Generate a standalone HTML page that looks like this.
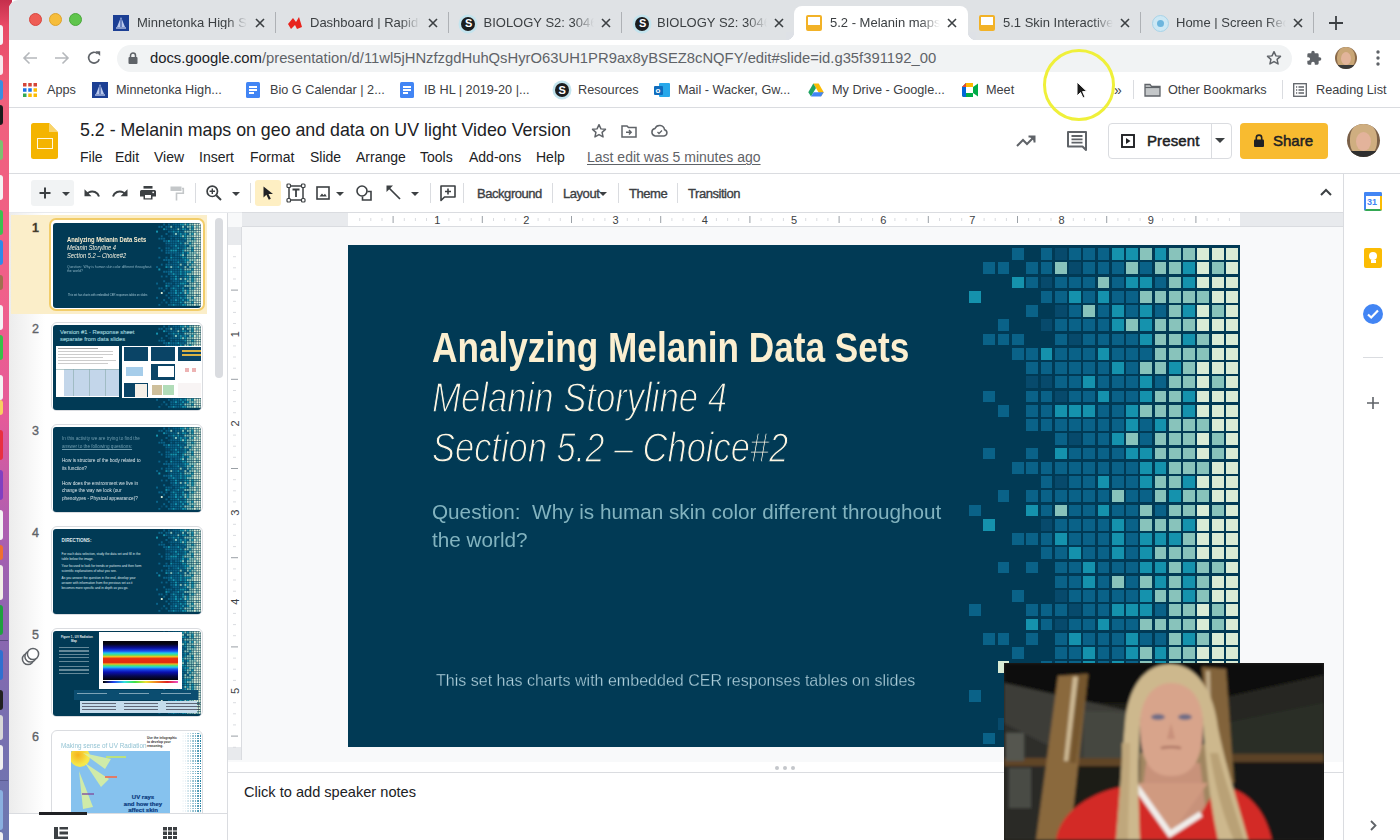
<!DOCTYPE html>
<html><head><meta charset="utf-8">
<style>
*{margin:0;padding:0;box-sizing:border-box}
html,body{width:1400px;height:840px;overflow:hidden;background:#fff;font-family:"Liberation Sans",sans-serif;color:#202124}
.a{position:absolute}
.t{position:absolute;white-space:nowrap;line-height:1}
.tl{position:absolute;top:13px;width:13px;height:13px;border-radius:50%}
.tx{font-size:13px;color:#3c4043;width:110px;overflow:hidden;-webkit-mask-image:linear-gradient(90deg,#000 82%,transparent 100%)}
.sep{position:absolute;top:12px;width:1px;height:21px;background:#aeb1b5}
.bm{font-size:12.7px;color:#3c4043}
.menu{font-size:14px;color:#202124}
.tbtxt{font-size:13px;color:#3c4043;-webkit-text-stroke:0.35px #3c4043;letter-spacing:-0.45px}
.tsep{position:absolute;top:183px;width:1px;height:20px;background:#dadce0}
.num{font-size:12.5px;color:#5f6368;-webkit-text-stroke:0.35px #5f6368}
.thumb{position:absolute;left:53px;width:148px;height:85px;background:#013a55;border-radius:3px;overflow:hidden}
.thframe{position:absolute;left:50px;width:154px;height:91px;border:1px solid #dadce0;border-radius:6px;background:#fff}
svg{position:absolute;overflow:visible}
#grid i{position:absolute;width:11.9px;height:11.9px}
#grid i,.thumb i{position:absolute;width:11.9px;height:11.9px}
</style></head><body>
<!-- dock strip -->
<div class="a" style="left:0;top:0;width:12px;height:840px;background:linear-gradient(#c52f4c 0%,#e84a66 3%,#f0607c 12%,#f0608a 35%,#e45a9a 50%,#b05eb0 62%,#9264b0 72%,#7a6eb0 84%,#6c78b0 100%)"></div><div class="a" style="left:-8px;top:25px;width:11px;height:20px;border-radius:3px;background:#f4f4f6"></div><div class="a" style="left:-8px;top:55px;width:11px;height:20px;border-radius:3px;background:#f7e8ec"></div><div class="a" style="left:-8px;top:80px;width:11px;height:20px;border-radius:3px;background:#3a8ee0"></div><div class="a" style="left:-8px;top:105px;width:11px;height:20px;border-radius:3px;background:#1b1b1b"></div><div class="a" style="left:-8px;top:140px;width:11px;height:20px;border-radius:3px;background:#7cc070"></div><div class="a" style="left:-8px;top:175px;width:11px;height:25px;border-radius:3px;background:#f4f4f4"></div><div class="a" style="left:-8px;top:210px;width:11px;height:25px;border-radius:3px;background:#3cc050"></div><div class="a" style="left:-8px;top:240px;width:11px;height:25px;border-radius:3px;background:#2f8ae8"></div><div class="a" style="left:-8px;top:275px;width:11px;height:15px;border-radius:3px;background:#a07050"></div><div class="a" style="left:-8px;top:305px;width:11px;height:25px;border-radius:3px;background:#f4f4f4"></div><div class="a" style="left:-8px;top:335px;width:11px;height:25px;border-radius:3px;background:#38c048"></div><div class="a" style="left:-8px;top:375px;width:11px;height:25px;border-radius:3px;background:#f4f4f4"></div><div class="a" style="left:-8px;top:400px;width:11px;height:15px;border-radius:3px;background:#f8d060"></div><div class="a" style="left:-8px;top:430px;width:11px;height:30px;border-radius:3px;background:#e83040"></div><div class="a" style="left:-8px;top:470px;width:11px;height:30px;border-radius:3px;background:#8040c0"></div><div class="a" style="left:-8px;top:510px;width:11px;height:30px;border-radius:3px;background:#f4f4f4"></div><div class="a" style="left:-8px;top:545px;width:11px;height:15px;border-radius:3px;background:#f07030"></div><div class="a" style="left:-8px;top:565px;width:11px;height:35px;border-radius:3px;background:#f2f0e8"></div><div class="a" style="left:-8px;top:605px;width:11px;height:30px;border-radius:3px;background:#20a040"></div><div class="a" style="left:-8px;top:650px;width:11px;height:30px;border-radius:3px;background:#3070d0"></div><div class="a" style="left:-8px;top:690px;width:11px;height:20px;border-radius:3px;background:#202020"></div><div class="a" style="left:-8px;top:715px;width:11px;height:25px;border-radius:3px;background:#d8d8d8"></div><div class="a" style="left:-8px;top:745px;width:11px;height:25px;border-radius:3px;background:#f0f0f0"></div><div class="a" style="left:-8px;top:790px;width:11px;height:40px;border-radius:3px;background:#8ab0e0"></div><div class="a" style="left:-8px;top:832px;width:11px;height:10px;border-radius:3px;background:#f0f0f0"></div><div class="a" style="left:0;top:640px;width:8px;height:1px;background:#5a4a80"></div><div class="a" style="left:0;top:780px;width:8px;height:1px;background:#5a5a90"></div>
<!-- window -->
<div class="a" id="win" style="left:9px;top:0;width:1391px;height:840px;background:#fff;border-top-left-radius:9px;overflow:hidden">
 <div class="a" style="left:0;top:0;width:1391px;height:40px;background:#dfe2e5"></div>
</div>
<!-- CHROME_TABS -->
<!-- traffic lights -->
<div class="tl" style="left:29px;background:#ee5d55;border:0.5px solid #d8463f"></div>
<div class="tl" style="left:49px;background:#f6bd3b;border:0.5px solid #dea32b"></div>
<div class="tl" style="left:69px;background:#5fc54c;border:0.5px solid #4aa83b"></div>

<!-- active tab -->
<div class="a" style="left:794px;top:6px;width:174px;height:34px;background:#fff;border-radius:8px 8px 0 0"></div>
<div class="a" style="left:786px;top:32px;width:8px;height:8px;background:radial-gradient(circle at 0 0,#dee1e6 8px,#fff 8.5px)"></div>
<div class="a" style="left:968px;top:32px;width:8px;height:8px;background:radial-gradient(circle at 100% 0,#dee1e6 8px,#fff 8.5px)"></div>

<!-- tab favicons -->
<div class="a" style="left:113px;top:15px;width:16px;height:16px;background:#1c3f94"><svg width="16" height="16" viewBox="0 0 16 16" style="left:0;top:0"><path d="M8 2 L4 12 H12 Z" fill="#b9c8ec"/><path d="M8 4 L8 12" stroke="#1c3f94" stroke-width="1"/><path d="M3 13 H13" stroke="#cfd9f2" stroke-width="1.2"/></svg></div>
<svg width="16" height="16" viewBox="0 0 16 16" style="left:287px;top:15px"><path d="M1 9 L6 3 L9 7 L12 2 L15 12 L10 14 L8 10 L4 14 Z" fill="#e8231d"/></svg>
<div class="a" style="left:461px;top:16.5px;width:14px;height:14px;border-radius:50%;background:#1b1d1f;box-shadow:0 0 0 2.5px #c3e4ee"></div><div class="t" style="left:465.0px;top:18px;font-size:11px;font-weight:bold;color:#fff">S</div>
<div class="a" style="left:635px;top:16.5px;width:14px;height:14px;border-radius:50%;background:#1b1d1f;box-shadow:0 0 0 2.5px #c3e4ee"></div><div class="t" style="left:639.0px;top:18px;font-size:11px;font-weight:bold;color:#fff">S</div>
<div class="a" style="left:806px;top:15px;width:16px;height:16px;border:2.5px solid #f2b227;border-radius:2px;background:#fff"></div><div class="a" style="left:808px;top:25px;width:12px;height:3.5px;background:#f2b227"></div>
<div class="a" style="left:979px;top:15px;width:16px;height:16px;border:2.5px solid #f2b227;border-radius:2px;background:#fff"></div><div class="a" style="left:981px;top:25px;width:12px;height:3.5px;background:#f2b227"></div>
<div class="a" style="left:1152px;top:15px;width:17px;height:17px;border-radius:50%;background:#cde8f4;border:1.5px solid #a8d3e8"></div><div class="a" style="left:1157px;top:20px;width:7px;height:7px;border-radius:50%;background:#6cb5dd"></div>

<!-- tab titles -->
<div class="t tx" style="left:137px;top:16px">Minnetonka High School</div>
<div class="t tx" style="left:310px;top:16px">Dashboard | RapidIdentity</div>
<div class="t tx" style="left:483.5px;top:16px">BIOLOGY S2: 3046</div>
<div class="t tx" style="left:657px;top:16px">BIOLOGY S2: 3046</div>
<div class="t tx" style="left:830px;top:16px">5.2 - Melanin maps on</div>
<div class="t tx" style="left:1003px;top:16px">5.1 Skin Interactive</div>
<div class="t tx" style="left:1176px;top:16px">Home | Screen Recorder</div>

<!-- close x's -->
<svg width="10" height="10" viewBox="0 0 10 10" style="left:255px;top:18px"><path d="M1 1L9 9M9 1L1 9" stroke="#3c4043" stroke-width="1.6"/></svg>
<svg width="10" height="10" viewBox="0 0 10 10" style="left:428px;top:18px"><path d="M1 1L9 9M9 1L1 9" stroke="#3c4043" stroke-width="1.6"/></svg>
<svg width="10" height="10" viewBox="0 0 10 10" style="left:601px;top:18px"><path d="M1 1L9 9M9 1L1 9" stroke="#3c4043" stroke-width="1.6"/></svg>
<svg width="10" height="10" viewBox="0 0 10 10" style="left:774px;top:18px"><path d="M1 1L9 9M9 1L1 9" stroke="#3c4043" stroke-width="1.6"/></svg>
<svg width="10" height="10" viewBox="0 0 10 10" style="left:947px;top:18px"><path d="M1 1L9 9M9 1L1 9" stroke="#3c4043" stroke-width="1.6"/></svg>
<svg width="10" height="10" viewBox="0 0 10 10" style="left:1120px;top:18px"><path d="M1 1L9 9M9 1L1 9" stroke="#3c4043" stroke-width="1.6"/></svg>
<svg width="10" height="10" viewBox="0 0 10 10" style="left:1293px;top:18px"><path d="M1 1L9 9M9 1L1 9" stroke="#3c4043" stroke-width="1.6"/></svg>
<!-- separators -->
<div class="sep" style="left:275px"></div>
<div class="sep" style="left:448px"></div>
<div class="sep" style="left:621px"></div>
<div class="sep" style="left:1140px"></div>
<div class="sep" style="left:1313px"></div>
<!-- new tab + -->
<svg width="14" height="14" viewBox="0 0 14 14" style="left:1329px;top:16px"><path d="M7 0V14M0 7H14" stroke="#3c4043" stroke-width="1.8"/></svg>

<!-- ADDRESS -->
<svg width="16" height="14" viewBox="0 0 16 14" style="left:22px;top:51px"><path d="M15 7H2M7.5 1.5L2 7l5.5 5.5" stroke="#b5b8bc" stroke-width="1.6" fill="none"/></svg>
<svg width="16" height="14" viewBox="0 0 16 14" style="left:54px;top:51px"><path d="M1 7H14M8.5 1.5L14 7l-5.5 5.5" stroke="#b5b8bc" stroke-width="1.6" fill="none"/></svg>
<svg width="16" height="16" viewBox="0 0 16 16" style="left:86px;top:50px"><path d="M13.2 9.2A5.4 5.4 0 1 1 11.6 3.6" stroke="#5f6368" stroke-width="1.7" fill="none"/><path d="M9.4 1.2H14.2V6Z" fill="#5f6368"/></svg>
<div class="a" style="left:117px;top:45px;width:1175px;height:27px;border-radius:14px;background:#f1f3f4"></div>
<svg width="10" height="12" viewBox="0 0 10 12" style="left:128px;top:52px"><rect x="0.5" y="5" width="9" height="7" rx="1" fill="#5f6368"/><path d="M2.5 5.5V3.6a2.5 2.5 0 0 1 5 0V5.5" stroke="#5f6368" stroke-width="1.5" fill="none"/></svg>
<div class="t" id="url" style="left:150px;top:51px;font-size:14.8px;color:#202124">docs.google.com<span style="color:#5f6368">/presentation/d/11wl5jHNzfzgdHuhQsHyrO63UH1PR9ax8yBSEZ8cNQFY/edit#slide=id.g35f391192_00</span></div>
<svg width="16" height="16" viewBox="0 0 24 24" style="left:1266px;top:50px"><path d="M12 2.5l2.9 6.3 6.8.7-5.1 4.6 1.5 6.8L12 17.4l-6.1 3.5 1.5-6.8L2.3 9.5l6.8-.7Z" stroke="#5f6368" stroke-width="2.2" fill="none" stroke-linejoin="round"/></svg>
<svg width="16" height="16" viewBox="0 0 24 24" style="left:1306px;top:50px"><path d="M20.5 11H19V7a2 2 0 0 0-2-2h-4V3.5a2.5 2.5 0 0 0-5 0V5H4a2 2 0 0 0-2 2v3.8h1.5a2.7 2.7 0 0 1 0 5.4H2V20a2 2 0 0 0 2 2h3.8v-1.5a2.7 2.7 0 0 1 5.4 0V22H17a2 2 0 0 0 2-2v-4h1.5a2.5 2.5 0 0 0 0-5z" fill="#5f6368"/></svg>
<div class="a" style="left:1335px;top:47px;width:22px;height:22px;border-radius:50%;background:#8a6a4a;overflow:hidden"><div class="a" style="left:2px;top:0;width:18px;height:22px;border-radius:45%;background:#c9a676"></div><div class="a" style="left:6px;top:5px;width:10px;height:13px;border-radius:50%;background:#e2b49a"></div><div class="a" style="left:3px;top:18px;width:16px;height:6px;background:#3a3a3a"></div></div>
<svg width="4" height="16" viewBox="0 0 4 16" style="left:1376px;top:50px"><circle cx="2" cy="2" r="1.7" fill="#5f6368"/><circle cx="2" cy="8" r="1.7" fill="#5f6368"/><circle cx="2" cy="14" r="1.7" fill="#5f6368"/></svg>

<!-- BOOKMARKS -->
<svg width="16" height="16" viewBox="0 0 16 16" style="left:22px;top:82px"><g>
<rect x="1" y="1" width="3.5" height="3.5" fill="#d44638"/><rect x="6.25" y="1" width="3.5" height="3.5" fill="#d44638"/><rect x="11.5" y="1" width="3.5" height="3.5" fill="#d44638"/>
<rect x="1" y="6.25" width="3.5" height="3.5" fill="#1a73e8"/><rect x="6.25" y="6.25" width="3.5" height="3.5" fill="#1a73e8"/><rect x="11.5" y="6.25" width="3.5" height="3.5" fill="#fbbc04"/>
<rect x="1" y="11.5" width="3.5" height="3.5" fill="#34a853"/><rect x="6.25" y="11.5" width="3.5" height="3.5" fill="#fbbc04"/><rect x="11.5" y="11.5" width="3.5" height="3.5" fill="#fbbc04"/></g></svg>
<div class="t bm" style="left:47px;top:84px">Apps</div>
<div class="a" style="left:92px;top:82px;width:16px;height:16px;background:#1c3f94"><svg width="16" height="16" viewBox="0 0 16 16" style="left:0;top:0"><path d="M8 2 L4 12 H12 Z" fill="#b9c8ec"/><path d="M8 4 L8 12" stroke="#1c3f94" stroke-width="1"/><path d="M3 13 H13" stroke="#cfd9f2" stroke-width="1.2"/></svg></div>
<div class="t bm" style="left:116px;top:84px">Minnetonka High...</div>
<div class="a" style="left:246px;top:82px;width:14px;height:16px;background:#4285f4;border-radius:1.5px"><div class="a" style="left:3px;top:4px;width:8px;height:1.6px;background:#fff"></div><div class="a" style="left:3px;top:7.2px;width:8px;height:1.6px;background:#fff"></div><div class="a" style="left:3px;top:10.4px;width:5px;height:1.6px;background:#fff"></div></div>
<div class="t bm" style="left:270px;top:84px">Bio G Calendar | 2...</div>
<div class="a" style="left:400px;top:82px;width:14px;height:16px;background:#4285f4;border-radius:1.5px"><div class="a" style="left:3px;top:4px;width:8px;height:1.6px;background:#fff"></div><div class="a" style="left:3px;top:7.2px;width:8px;height:1.6px;background:#fff"></div><div class="a" style="left:3px;top:10.4px;width:5px;height:1.6px;background:#fff"></div></div>
<div class="t bm" style="left:424px;top:84px">IB HL | 2019-20 |...</div>
<div class="a" style="left:555px;top:83px;width:14px;height:14px;border-radius:50%;background:#1b1d1f;box-shadow:0 0 0 2.5px #c3e4ee"></div><div class="t" style="left:558.5px;top:84.5px;font-size:11px;font-weight:bold;color:#fff">S</div>
<div class="t bm" style="left:578px;top:84px">Resources</div>
<div class="a" style="left:654px;top:82px;width:16px;height:16px"><div class="a" style="left:5px;top:1px;width:11px;height:14px;background:#28a8ea;border-radius:1px"></div><div class="a" style="left:0;top:4px;width:9px;height:9px;background:#0f6cbd;border-radius:1px"></div><div class="t" style="left:1.5px;top:5px;font-size:8px;font-weight:bold;color:#fff">o</div></div>
<div class="t bm" style="left:678px;top:84px">Mail - Wacker, Gw...</div>
<svg width="16" height="14" viewBox="0 0 16 14" style="left:808px;top:83px"><path d="M5.3 0.5h5.4l5 8.7-2.7 4.3z" fill="#fbbc04"/><path d="M5.3 0.5L0.3 9.2l2.7 4.3 5-8.6z" fill="#1fa463"/><path d="M3 13.5h10l2.7-4.3H5.7z" fill="#4285f4"/></svg>
<div class="t bm" style="left:832px;top:84px">My Drive - Google...</div>
<svg width="17" height="14" viewBox="0 0 17 14" style="left:962px;top:83px"><path d="M0 4L4 0H11V14H2a2 2 0 0 1-2-2Z" fill="#00832d"/><path d="M4 0V4H0Z" fill="#ea4335"/><rect x="0" y="4" width="4" height="6" fill="#0066da"/><rect x="4" y="0" width="7" height="4" fill="#ea4335"/><rect x="4" y="10" width="7" height="4" fill="#00ac47"/><rect x="4" y="4" width="7" height="6" fill="#fff"/><path d="M11 4l5-3.5v13L11 10Z" fill="#00ac47"/><path d="M0 10H4V14H2a2 2 0 0 1-2-2Z" fill="#0066da"/><rect x="4" y="0" width="7" height="4" fill="#ffba00"/></svg>
<div class="t bm" style="left:986px;top:84px">Meet</div>
<div class="t bm" style="left:1114px;top:83px;font-size:14px">»</div>
<div class="a" style="left:1133px;top:80px;width:1px;height:19px;background:#dadce0"></div>
<svg width="17" height="14" viewBox="0 0 17 14" style="left:1144px;top:83px"><path d="M1 1.5h5l1.5 1.8H16V13H1Z" fill="#c4c7c9" stroke="#5f6368" stroke-width="1.3"/><path d="M1 4.5H16" stroke="#5f6368" stroke-width="1.2"/></svg>
<div class="t bm" style="left:1168px;top:84px">Other Bookmarks</div>
<div class="a" style="left:1282px;top:80px;width:1px;height:19px;background:#dadce0"></div>
<svg width="14" height="14" viewBox="0 0 14 14" style="left:1293px;top:83px"><rect x="0.7" y="0.7" width="12.6" height="12.6" fill="none" stroke="#5f6368" stroke-width="1.3"/><path d="M3 4h1.2M3 7h1.2M3 10h1.2M5.5 4H11M5.5 7H11M5.5 10H11" stroke="#5f6368" stroke-width="1.3"/></svg>
<div class="t bm" style="left:1316px;top:84px">Reading List</div>
<div class="a" style="left:9px;top:107px;width:1391px;height:1px;background:#dadce0"></div>
<!-- cursor highlight -->
<div class="a" style="left:1043px;top:49px;width:72px;height:72px;border-radius:50%;border:3px solid #eff03a"></div>
<svg width="12" height="18" viewBox="0 0 12 18" style="left:1076px;top:81px"><path d="M1 1V15L4.5 11.5L7 17L9 16L6.6 10.6H11Z" fill="#1b1b1b" stroke="#fff" stroke-width="1"/></svg>
<!-- DOCS_HEADER -->
<div class="a" style="left:31px;top:123px;width:27px;height:36px;background:#f4b400;border-radius:2.5px;clip-path:polygon(0 0,67% 0,100% 26%,100% 100%,0 100%)"></div>
<div class="a" style="left:49px;top:123px;width:9px;height:9px;background:#f9d46a;clip-path:polygon(0 0,100% 100%,0 100%)"></div>
<div class="a" style="left:36.5px;top:137.5px;width:16px;height:11px;border:1.8px solid #fff8e0"></div>
<div class="t" id="title" style="left:80px;top:122px;font-size:17.8px;color:#202124">5.2 - Melanin maps on geo and data on UV light Video Version</div>
<svg width="16" height="16" viewBox="0 0 24 24" style="left:591px;top:123px"><path d="M12 2.5l2.9 6.3 6.8.7-5.1 4.6 1.5 6.8L12 17.4l-6.1 3.5 1.5-6.8L2.3 9.5l6.8-.7Z" stroke="#5f6368" stroke-width="2.2" fill="none" stroke-linejoin="round"/></svg>
<svg width="16" height="13" viewBox="0 0 16 13" style="left:621px;top:125px"><path d="M1 1h5l1.5 1.6H15V12H1Z" fill="none" stroke="#5f6368" stroke-width="1.5"/><path d="M5 7.2h5M8 5l2.2 2.2L8 9.4" stroke="#5f6368" stroke-width="1.4" fill="none"/></svg>
<svg width="17" height="12" viewBox="0 0 17 12" style="left:651px;top:125px"><path d="M4.2 11H13a3.2 3.2 0 0 0 .5-6.3A5 5 0 0 0 4 3.5 3.8 3.8 0 0 0 4.2 11Z" fill="none" stroke="#5f6368" stroke-width="1.5"/><path d="M6.5 7l1.5 1.5 3-3" stroke="#5f6368" stroke-width="1.3" fill="none"/></svg>
<div class="t menu" style="left:80px;top:150px">File</div>
<div class="t menu" style="left:115px;top:150px">Edit</div>
<div class="t menu" style="left:154px;top:150px">View</div>
<div class="t menu" style="left:199px;top:150px">Insert</div>
<div class="t menu" style="left:250px;top:150px">Format</div>
<div class="t menu" style="left:310px;top:150px">Slide</div>
<div class="t menu" style="left:356px;top:150px">Arrange</div>
<div class="t menu" style="left:420px;top:150px">Tools</div>
<div class="t menu" style="left:469px;top:150px">Add-ons</div>
<div class="t menu" style="left:536px;top:150px">Help</div>
<div class="t" id="lastedit" style="left:587px;top:150px;font-size:14px;color:#5f6368;text-decoration:underline;text-underline-offset:2px">Last edit was 5 minutes ago</div>
<svg width="20" height="12" viewBox="0 0 20 12" style="left:1016px;top:135px"><path d="M1 11l6-6 4 4 7-7M12.5 1.5H18.5V7.5" stroke="#5f6368" stroke-width="2" fill="none"/><path d="M13 1h6v6Z" fill="#5f6368"/></svg>
<svg width="20" height="20" viewBox="0 0 20 20" style="left:1067px;top:131px"><path d="M1 1H19V19L15.5 15.5H1Z" fill="none" stroke="#5f6368" stroke-width="2" stroke-linejoin="round"/><path d="M4.5 5H15.5M4.5 8.3H15.5M4.5 11.6H15.5" stroke="#5f6368" stroke-width="1.8"/></svg>
<div class="a" style="left:1108px;top:123px;width:124px;height:36px;border:1px solid #dadce0;border-radius:4px;background:#fff"></div>
<div class="a" style="left:1211px;top:123px;width:1px;height:36px;background:#dadce0"></div>
<svg width="14" height="14" viewBox="0 0 14 14" style="left:1121px;top:134px"><rect x="1" y="1" width="12" height="12" fill="none" stroke="#202124" stroke-width="1.9"/><path d="M5 4L9.5 7 5 10Z" fill="#202124"/></svg>
<div class="t" id="present" style="left:1147px;top:133px;font-size:15px;color:#202124;letter-spacing:0.1px;-webkit-text-stroke:0.5px #202124">Present</div>
<svg width="10" height="5" viewBox="0 0 10 5" style="left:1215px;top:138px"><path d="M0 0H10L5 5Z" fill="#3c4043"/></svg>
<div class="a" style="left:1240px;top:123px;width:88px;height:36px;border-radius:4px;background:#f8bb30"></div>
<svg width="10" height="13" viewBox="0 0 10 13" style="left:1254px;top:134px"><rect x="0" y="5.5" width="10" height="7.5" rx="1" fill="#202124"/><path d="M2.3 6V3.8a2.7 2.7 0 0 1 5.4 0V6" stroke="#202124" stroke-width="1.6" fill="none"/></svg>
<div class="t" id="share" style="left:1273px;top:133px;font-size:15px;color:#202124;-webkit-text-stroke:0.5px #202124">Share</div>
<div class="a" style="left:1347px;top:124px;width:33px;height:33px;border-radius:50%;background:#7a6048;overflow:hidden"><div class="a" style="left:3px;top:-1px;width:27px;height:34px;border-radius:45%;background:#cfae80"></div><div class="a" style="left:9px;top:8px;width:15px;height:19px;border-radius:50%;background:#e3b39b"></div><div class="a" style="left:4px;top:27px;width:25px;height:8px;background:#2f2f2f"></div></div>
<div class="a" style="left:9px;top:173px;width:1391px;height:1px;background:#dadce0"></div>
<!-- TOOLBAR -->
<div class="a" style="left:31px;top:180px;width:43px;height:26px;background:#f1f3f4;border-radius:3px"></div>
<svg width="12" height="12" viewBox="0 0 12 12" style="left:39px;top:187px"><path d="M6 0.5V11.5M0.5 6H11.5" stroke="#3c4043" stroke-width="2"/></svg>
<svg width="8" height="4" viewBox="0 0 8 4" style="left:62px;top:192px"><path d="M0 0H8L4 4Z" fill="#3c4043"/></svg>
<svg width="16" height="9" viewBox="0 0 16 9" style="left:84px;top:188px"><path d="M15 8.5C13.8 4.3 9 2 4.5 4.5L2 6.8" stroke="#3c4043" stroke-width="2" fill="none"/><path d="M0.5 1.2V8.2H7.5Z" fill="#3c4043"/></svg>
<svg width="16" height="9" viewBox="0 0 16 9" style="left:112px;top:188px"><path d="M1 8.5C2.2 4.3 7 2 11.5 4.5L14 6.8" stroke="#3c4043" stroke-width="2" fill="none"/><path d="M15.5 1.2V8.2H8.5Z" fill="#3c4043"/></svg>
<svg width="16" height="14" viewBox="0 0 16 14" style="left:140px;top:186px"><rect x="3.5" y="0" width="9" height="2.6" fill="#3c4043"/><path d="M1.5 4H14.5A1.5 1.5 0 0 1 16 5.5V10.5H12.5V13.5H3.5V10.5H0V5.5A1.5 1.5 0 0 1 1.5 4Z" fill="#3c4043"/><rect x="5" y="9" width="6" height="3.3" fill="#fff"/><circle cx="13.2" cy="6.3" r="0.9" fill="#fff"/></svg>
<svg width="14" height="15" viewBox="0 0 14 15" style="left:170px;top:186px"><rect x="0.5" y="0.5" width="11" height="4.5" fill="#c4c7c9"/><path d="M12 2.5H13.3V7.3H6.5V14.5" stroke="#c4c7c9" stroke-width="1.6" fill="none"/></svg>
<div class="tsep" style="left:195px"></div>
<svg width="16" height="16" viewBox="0 0 16 16" style="left:206px;top:185px"><circle cx="6.3" cy="6.3" r="5.2" stroke="#3c4043" stroke-width="1.7" fill="none"/><path d="M10.2 10.2L15 15" stroke="#3c4043" stroke-width="2"/><path d="M6.3 3.6V9M3.6 6.3H9" stroke="#3c4043" stroke-width="1.4"/></svg>
<svg width="8" height="4" viewBox="0 0 8 4" style="left:232px;top:192px"><path d="M0 0H8L4 4Z" fill="#3c4043"/></svg>
<div class="tsep" style="left:250px"></div>
<div class="a" style="left:255px;top:180px;width:26px;height:26px;background:#feefc3;border-radius:3px"></div>
<svg width="11" height="14" viewBox="0 0 11 14" style="left:263px;top:186px"><path d="M0.5 0.5V11.5L3.4 8.7L5.8 13.8L7.8 12.8L5.5 8H10Z" fill="#202124"/></svg>
<svg width="18" height="18" viewBox="0 0 18 18" style="left:287px;top:184px"><rect x="2" y="2" width="14" height="14" fill="none" stroke="#3c4043" stroke-width="1.5"/><rect x="0" y="0" width="3.5" height="3.5" rx="1" fill="#fff" stroke="#3c4043" stroke-width="1.2"/><rect x="14.5" y="0" width="3.5" height="3.5" rx="1" fill="#fff" stroke="#3c4043" stroke-width="1.2"/><rect x="0" y="14.5" width="3.5" height="3.5" rx="1" fill="#fff" stroke="#3c4043" stroke-width="1.2"/><rect x="14.5" y="14.5" width="3.5" height="3.5" rx="1" fill="#fff" stroke="#3c4043" stroke-width="1.2"/><path d="M5.5 5.5H12.5M9 5.5V13" stroke="#3c4043" stroke-width="1.8"/></svg>
<svg width="14" height="14" viewBox="0 0 14 14" style="left:316px;top:186px"><rect x="1" y="1" width="12" height="12" fill="none" stroke="#3c4043" stroke-width="1.6"/><path d="M3.5 10.5L6 7.5L7.5 9.2L9 7.8L10.8 10.5Z" fill="#3c4043"/></svg>
<svg width="8" height="4" viewBox="0 0 8 4" style="left:336px;top:192px"><path d="M0 0H8L4 4Z" fill="#3c4043"/></svg>
<svg width="16" height="16" viewBox="0 0 16 16" style="left:356px;top:185px"><circle cx="6" cy="6" r="5" fill="none" stroke="#3c4043" stroke-width="1.6"/><path d="M11.5 6.5H15V15H6.5V11.5" fill="none" stroke="#3c4043" stroke-width="1.6"/></svg>
<svg width="15" height="15" viewBox="0 0 15 15" style="left:386px;top:185px"><path d="M14 14L2 2" stroke="#3c4043" stroke-width="1.7"/><path d="M0.5 0.5H7L0.5 7Z" fill="#3c4043"/></svg>
<svg width="8" height="4" viewBox="0 0 8 4" style="left:411px;top:192px"><path d="M0 0H8L4 4Z" fill="#3c4043"/></svg>
<div class="tsep" style="left:430px"></div>
<svg width="16" height="16" viewBox="0 0 16 16" style="left:440px;top:185px"><path d="M1 1H15V12H4.5L1 15.5Z" fill="none" stroke="#3c4043" stroke-width="1.6" stroke-linejoin="round"/><path d="M8 3.5V9.5M5 6.5H11" stroke="#3c4043" stroke-width="1.6"/></svg>
<div class="tsep" style="left:463px"></div>
<div class="t tbtxt" id="bg" style="left:477px;top:187px">Background</div>
<div class="tsep" style="left:552px"></div>
<div class="t tbtxt" id="layout" style="left:563px;top:187px">Layout</div>
<svg width="8" height="4" viewBox="0 0 8 4" style="left:599px;top:192px"><path d="M0 0H8L4 4Z" fill="#3c4043"/></svg>
<div class="tsep" style="left:618px"></div>
<div class="t tbtxt" id="theme" style="left:629px;top:187px">Theme</div>
<div class="tsep" style="left:677px"></div>
<div class="t tbtxt" id="trans" style="left:688px;top:187px">Transition</div>
<svg width="12" height="8" viewBox="0 0 12 8" style="left:1320px;top:188px"><path d="M1 7L6 2L11 7" stroke="#3c4043" stroke-width="2" fill="none"/></svg>
<div class="a" style="left:9px;top:212px;width:1334px;height:1px;background:#e8eaed"></div>
<!-- FILMSTRIP -->
<div class="a" style="left:9px;top:213px;width:36px;height:600px;background:linear-gradient(90deg,#ececec,#fff)"></div><div class="a" style="left:11px;top:215px;width:196px;height:99px;background:#fbeec9"></div>
<div class="a" style="left:49px;top:218px;width:156px;height:93px;border:2px solid #f2cd6a;border-radius:7px;background:#fff"></div>
<div class="a" style="left:51px;top:322px;width:152px;height:89px;border:1px solid #dadce0;border-radius:6px;background:#fff"></div>
<div class="a" style="left:51px;top:424px;width:152px;height:89px;border:1px solid #dadce0;border-radius:6px;background:#fff"></div>
<div class="a" style="left:51px;top:526px;width:152px;height:89px;border:1px solid #dadce0;border-radius:6px;background:#fff"></div>
<div class="a" style="left:51px;top:628px;width:152px;height:89px;border:1px solid #dadce0;border-radius:6px;background:#fff"></div>
<div class="a" style="left:51px;top:730px;width:152px;height:89px;border:1px solid #dadce0;border-radius:6px;background:#fff"></div>
<div class="t num" style="left:32px;top:222px;color:#3c2f12;font-weight:bold">1</div>
<div class="t num" style="left:32px;top:323px">2</div>
<div class="t num" style="left:32px;top:425px">3</div>
<div class="t num" style="left:32px;top:527px">4</div>
<div class="t num" style="left:32px;top:629px">5</div>
<div class="t num" style="left:32px;top:731px">6</div>
<svg width="20" height="20" viewBox="0 0 20 20" style="left:20px;top:646px"><g fill="#fff" stroke="#5f6368" stroke-width="1.5"><circle cx="8" cy="13" r="5.6"/><circle cx="10.5" cy="10.5" r="5.6"/><circle cx="13" cy="8" r="5.6"/></g></svg>
<div id="thumbs"><div class="thumb" style="top:223px"><div class="a" style="left:0;top:0;width:892px;height:502px;transform:scale(0.1659);transform-origin:0 0;"><i style="left:663.9px;top:3.0px;background:#0a6288"></i><i style="left:692.5px;top:3.0px;background:#0a6288"></i><i style="left:706.7px;top:3.0px;background:#074a6c"></i><i style="left:721.0px;top:3.0px;background:#0a6288"></i><i style="left:735.3px;top:3.0px;background:#0a6288"></i><i style="left:749.5px;top:3.0px;background:#0a6288"></i><i style="left:763.8px;top:3.0px;background:#1592ad"></i><i style="left:778.1px;top:3.0px;background:#1592ad"></i><i style="left:792.3px;top:3.0px;background:#88c3bb"></i><i style="left:806.6px;top:3.0px;background:#1592ad"></i><i style="left:820.9px;top:3.0px;background:#88c3bb"></i><i style="left:835.1px;top:3.0px;background:#88c3bb"></i><i style="left:849.4px;top:3.0px;background:#d9ebd5"></i><i style="left:863.7px;top:3.0px;background:#d9ebd5"></i><i style="left:878.0px;top:3.0px;background:#d9ebd5"></i><i style="left:635.4px;top:17.2px;background:#0a6288"></i><i style="left:649.6px;top:17.2px;background:#0a6288"></i><i style="left:678.2px;top:17.2px;background:#0a6288"></i><i style="left:692.5px;top:17.2px;background:#0a6288"></i><i style="left:706.7px;top:17.2px;background:#88c3bb"></i><i style="left:721.0px;top:17.2px;background:#074a6c"></i><i style="left:735.3px;top:17.2px;background:#0a6288"></i><i style="left:749.5px;top:17.2px;background:#0a6288"></i><i style="left:763.8px;top:17.2px;background:#0a6288"></i><i style="left:778.1px;top:17.2px;background:#88c3bb"></i><i style="left:792.3px;top:17.2px;background:#0a6288"></i><i style="left:806.6px;top:17.2px;background:#88c3bb"></i><i style="left:820.9px;top:17.2px;background:#88c3bb"></i><i style="left:835.1px;top:17.2px;background:#1592ad"></i><i style="left:849.4px;top:17.2px;background:#d9ebd5"></i><i style="left:863.7px;top:17.2px;background:#88c3bb"></i><i style="left:878.0px;top:17.2px;background:#d9ebd5"></i><i style="left:663.9px;top:31.5px;background:#1592ad"></i><i style="left:678.2px;top:31.5px;background:#0a6288"></i><i style="left:692.5px;top:31.5px;background:#074a6c"></i><i style="left:706.7px;top:31.5px;background:#0a6288"></i><i style="left:721.0px;top:31.5px;background:#0a6288"></i><i style="left:735.3px;top:31.5px;background:#0a6288"></i><i style="left:749.5px;top:31.5px;background:#88c3bb"></i><i style="left:763.8px;top:31.5px;background:#0a6288"></i><i style="left:778.1px;top:31.5px;background:#1592ad"></i><i style="left:792.3px;top:31.5px;background:#1592ad"></i><i style="left:806.6px;top:31.5px;background:#0a6288"></i><i style="left:820.9px;top:31.5px;background:#88c3bb"></i><i style="left:835.1px;top:31.5px;background:#1592ad"></i><i style="left:849.4px;top:31.5px;background:#d9ebd5"></i><i style="left:863.7px;top:31.5px;background:#d9ebd5"></i><i style="left:878.0px;top:31.5px;background:#d9ebd5"></i><i style="left:621.1px;top:45.8px;background:#1592ad"></i><i style="left:692.5px;top:45.8px;background:#0a6288"></i><i style="left:706.7px;top:45.8px;background:#0a6288"></i><i style="left:721.0px;top:45.8px;background:#1592ad"></i><i style="left:735.3px;top:45.8px;background:#0a6288"></i><i style="left:749.5px;top:45.8px;background:#1592ad"></i><i style="left:763.8px;top:45.8px;background:#0a6288"></i><i style="left:778.1px;top:45.8px;background:#0a6288"></i><i style="left:792.3px;top:45.8px;background:#88c3bb"></i><i style="left:806.6px;top:45.8px;background:#88c3bb"></i><i style="left:820.9px;top:45.8px;background:#88c3bb"></i><i style="left:835.1px;top:45.8px;background:#88c3bb"></i><i style="left:849.4px;top:45.8px;background:#88c3bb"></i><i style="left:863.7px;top:45.8px;background:#d9ebd5"></i><i style="left:878.0px;top:45.8px;background:#d9ebd5"></i><i style="left:678.2px;top:60.0px;background:#0a6288"></i><i style="left:706.7px;top:60.0px;background:#074a6c"></i><i style="left:721.0px;top:60.0px;background:#0a6288"></i><i style="left:735.3px;top:60.0px;background:#88c3bb"></i><i style="left:749.5px;top:60.0px;background:#0a6288"></i><i style="left:763.8px;top:60.0px;background:#1592ad"></i><i style="left:778.1px;top:60.0px;background:#0a6288"></i><i style="left:792.3px;top:60.0px;background:#1592ad"></i><i style="left:806.6px;top:60.0px;background:#0a6288"></i><i style="left:820.9px;top:60.0px;background:#88c3bb"></i><i style="left:835.1px;top:60.0px;background:#1592ad"></i><i style="left:849.4px;top:60.0px;background:#d9ebd5"></i><i style="left:863.7px;top:60.0px;background:#88c3bb"></i><i style="left:878.0px;top:60.0px;background:#d9ebd5"></i><i style="left:649.6px;top:74.2px;background:#0a6288"></i><i style="left:692.5px;top:74.2px;background:#074a6c"></i><i style="left:706.7px;top:74.2px;background:#0a6288"></i><i style="left:721.0px;top:74.2px;background:#0a6288"></i><i style="left:735.3px;top:74.2px;background:#0a6288"></i><i style="left:749.5px;top:74.2px;background:#0a6288"></i><i style="left:763.8px;top:74.2px;background:#1592ad"></i><i style="left:778.1px;top:74.2px;background:#88c3bb"></i><i style="left:792.3px;top:74.2px;background:#1592ad"></i><i style="left:806.6px;top:74.2px;background:#88c3bb"></i><i style="left:820.9px;top:74.2px;background:#88c3bb"></i><i style="left:835.1px;top:74.2px;background:#88c3bb"></i><i style="left:849.4px;top:74.2px;background:#d9ebd5"></i><i style="left:863.7px;top:74.2px;background:#d9ebd5"></i><i style="left:878.0px;top:74.2px;background:#d9ebd5"></i><i style="left:635.4px;top:88.5px;background:#0a6288"></i><i style="left:649.6px;top:88.5px;background:#0a6288"></i><i style="left:663.9px;top:88.5px;background:#0a6288"></i><i style="left:706.7px;top:88.5px;background:#0a6288"></i><i style="left:721.0px;top:88.5px;background:#074a6c"></i><i style="left:735.3px;top:88.5px;background:#0a6288"></i><i style="left:749.5px;top:88.5px;background:#0a6288"></i><i style="left:763.8px;top:88.5px;background:#0a6288"></i><i style="left:778.1px;top:88.5px;background:#0a6288"></i><i style="left:792.3px;top:88.5px;background:#1592ad"></i><i style="left:806.6px;top:88.5px;background:#88c3bb"></i><i style="left:820.9px;top:88.5px;background:#88c3bb"></i><i style="left:835.1px;top:88.5px;background:#1592ad"></i><i style="left:849.4px;top:88.5px;background:#88c3bb"></i><i style="left:863.7px;top:88.5px;background:#d9ebd5"></i><i style="left:878.0px;top:88.5px;background:#d9ebd5"></i><i style="left:663.9px;top:102.8px;background:#0a6288"></i><i style="left:678.2px;top:102.8px;background:#0a6288"></i><i style="left:692.5px;top:102.8px;background:#1592ad"></i><i style="left:706.7px;top:102.8px;background:#0a6288"></i><i style="left:721.0px;top:102.8px;background:#0a6288"></i><i style="left:735.3px;top:102.8px;background:#0a6288"></i><i style="left:749.5px;top:102.8px;background:#1592ad"></i><i style="left:763.8px;top:102.8px;background:#0a6288"></i><i style="left:778.1px;top:102.8px;background:#0a6288"></i><i style="left:792.3px;top:102.8px;background:#0a6288"></i><i style="left:806.6px;top:102.8px;background:#88c3bb"></i><i style="left:820.9px;top:102.8px;background:#88c3bb"></i><i style="left:835.1px;top:102.8px;background:#88c3bb"></i><i style="left:849.4px;top:102.8px;background:#88c3bb"></i><i style="left:863.7px;top:102.8px;background:#d9ebd5"></i><i style="left:878.0px;top:102.8px;background:#d9ebd5"></i><i style="left:678.2px;top:117.0px;background:#0a6288"></i><i style="left:692.5px;top:117.0px;background:#0a6288"></i><i style="left:706.7px;top:117.0px;background:#0a6288"></i><i style="left:721.0px;top:117.0px;background:#0a6288"></i><i style="left:735.3px;top:117.0px;background:#0a6288"></i><i style="left:749.5px;top:117.0px;background:#0a6288"></i><i style="left:763.8px;top:117.0px;background:#1592ad"></i><i style="left:778.1px;top:117.0px;background:#0a6288"></i><i style="left:792.3px;top:117.0px;background:#88c3bb"></i><i style="left:806.6px;top:117.0px;background:#88c3bb"></i><i style="left:820.9px;top:117.0px;background:#1592ad"></i><i style="left:835.1px;top:117.0px;background:#88c3bb"></i><i style="left:849.4px;top:117.0px;background:#d9ebd5"></i><i style="left:863.7px;top:117.0px;background:#d9ebd5"></i><i style="left:878.0px;top:117.0px;background:#d9ebd5"></i><i style="left:678.2px;top:131.2px;background:#074a6c"></i><i style="left:692.5px;top:131.2px;background:#074a6c"></i><i style="left:706.7px;top:131.2px;background:#0a6288"></i><i style="left:721.0px;top:131.2px;background:#0a6288"></i><i style="left:735.3px;top:131.2px;background:#1592ad"></i><i style="left:749.5px;top:131.2px;background:#0a6288"></i><i style="left:763.8px;top:131.2px;background:#0a6288"></i><i style="left:778.1px;top:131.2px;background:#0a6288"></i><i style="left:792.3px;top:131.2px;background:#1592ad"></i><i style="left:806.6px;top:131.2px;background:#0a6288"></i><i style="left:820.9px;top:131.2px;background:#88c3bb"></i><i style="left:835.1px;top:131.2px;background:#88c3bb"></i><i style="left:849.4px;top:131.2px;background:#d9ebd5"></i><i style="left:863.7px;top:131.2px;background:#88c3bb"></i><i style="left:878.0px;top:131.2px;background:#d9ebd5"></i><i style="left:635.4px;top:145.5px;background:#0a6288"></i><i style="left:678.2px;top:145.5px;background:#0a6288"></i><i style="left:692.5px;top:145.5px;background:#0a6288"></i><i style="left:706.7px;top:145.5px;background:#074a6c"></i><i style="left:721.0px;top:145.5px;background:#0a6288"></i><i style="left:735.3px;top:145.5px;background:#0a6288"></i><i style="left:749.5px;top:145.5px;background:#1592ad"></i><i style="left:763.8px;top:145.5px;background:#0a6288"></i><i style="left:778.1px;top:145.5px;background:#0a6288"></i><i style="left:792.3px;top:145.5px;background:#1592ad"></i><i style="left:806.6px;top:145.5px;background:#88c3bb"></i><i style="left:820.9px;top:145.5px;background:#88c3bb"></i><i style="left:835.1px;top:145.5px;background:#1592ad"></i><i style="left:849.4px;top:145.5px;background:#d9ebd5"></i><i style="left:863.7px;top:145.5px;background:#d9ebd5"></i><i style="left:878.0px;top:145.5px;background:#d9ebd5"></i><i style="left:649.6px;top:159.8px;background:#0a6288"></i><i style="left:678.2px;top:159.8px;background:#0a6288"></i><i style="left:692.5px;top:159.8px;background:#0a6288"></i><i style="left:706.7px;top:159.8px;background:#1592ad"></i><i style="left:721.0px;top:159.8px;background:#1592ad"></i><i style="left:735.3px;top:159.8px;background:#1592ad"></i><i style="left:749.5px;top:159.8px;background:#0a6288"></i><i style="left:763.8px;top:159.8px;background:#0a6288"></i><i style="left:778.1px;top:159.8px;background:#1592ad"></i><i style="left:792.3px;top:159.8px;background:#88c3bb"></i><i style="left:806.6px;top:159.8px;background:#88c3bb"></i><i style="left:820.9px;top:159.8px;background:#88c3bb"></i><i style="left:835.1px;top:159.8px;background:#1592ad"></i><i style="left:849.4px;top:159.8px;background:#d9ebd5"></i><i style="left:863.7px;top:159.8px;background:#d9ebd5"></i><i style="left:878.0px;top:159.8px;background:#d9ebd5"></i><i style="left:678.2px;top:174.0px;background:#0a6288"></i><i style="left:692.5px;top:174.0px;background:#0a6288"></i><i style="left:706.7px;top:174.0px;background:#0a6288"></i><i style="left:721.0px;top:174.0px;background:#0a6288"></i><i style="left:735.3px;top:174.0px;background:#0a6288"></i><i style="left:749.5px;top:174.0px;background:#0a6288"></i><i style="left:763.8px;top:174.0px;background:#0a6288"></i><i style="left:778.1px;top:174.0px;background:#1592ad"></i><i style="left:792.3px;top:174.0px;background:#0a6288"></i><i style="left:806.6px;top:174.0px;background:#1592ad"></i><i style="left:820.9px;top:174.0px;background:#88c3bb"></i><i style="left:835.1px;top:174.0px;background:#88c3bb"></i><i style="left:849.4px;top:174.0px;background:#88c3bb"></i><i style="left:863.7px;top:174.0px;background:#d9ebd5"></i><i style="left:878.0px;top:174.0px;background:#d9ebd5"></i><i style="left:706.7px;top:188.2px;background:#0a6288"></i><i style="left:721.0px;top:188.2px;background:#074a6c"></i><i style="left:735.3px;top:188.2px;background:#0a6288"></i><i style="left:749.5px;top:188.2px;background:#0a6288"></i><i style="left:763.8px;top:188.2px;background:#1592ad"></i><i style="left:778.1px;top:188.2px;background:#88c3bb"></i><i style="left:792.3px;top:188.2px;background:#0a6288"></i><i style="left:806.6px;top:188.2px;background:#88c3bb"></i><i style="left:820.9px;top:188.2px;background:#88c3bb"></i><i style="left:835.1px;top:188.2px;background:#88c3bb"></i><i style="left:849.4px;top:188.2px;background:#d9ebd5"></i><i style="left:863.7px;top:188.2px;background:#88c3bb"></i><i style="left:878.0px;top:188.2px;background:#d9ebd5"></i><i style="left:635.4px;top:202.5px;background:#0a6288"></i><i style="left:678.2px;top:202.5px;background:#0a6288"></i><i style="left:706.7px;top:202.5px;background:#1592ad"></i><i style="left:721.0px;top:202.5px;background:#0a6288"></i><i style="left:735.3px;top:202.5px;background:#0a6288"></i><i style="left:749.5px;top:202.5px;background:#0a6288"></i><i style="left:763.8px;top:202.5px;background:#0a6288"></i><i style="left:778.1px;top:202.5px;background:#1592ad"></i><i style="left:792.3px;top:202.5px;background:#1592ad"></i><i style="left:806.6px;top:202.5px;background:#88c3bb"></i><i style="left:820.9px;top:202.5px;background:#88c3bb"></i><i style="left:835.1px;top:202.5px;background:#88c3bb"></i><i style="left:849.4px;top:202.5px;background:#d9ebd5"></i><i style="left:863.7px;top:202.5px;background:#88c3bb"></i><i style="left:878.0px;top:202.5px;background:#d9ebd5"></i><i style="left:663.9px;top:216.8px;background:#0a6288"></i><i style="left:678.2px;top:216.8px;background:#0a6288"></i><i style="left:692.5px;top:216.8px;background:#0a6288"></i><i style="left:706.7px;top:216.8px;background:#0a6288"></i><i style="left:721.0px;top:216.8px;background:#0a6288"></i><i style="left:735.3px;top:216.8px;background:#0a6288"></i><i style="left:749.5px;top:216.8px;background:#0a6288"></i><i style="left:763.8px;top:216.8px;background:#0a6288"></i><i style="left:778.1px;top:216.8px;background:#0a6288"></i><i style="left:792.3px;top:216.8px;background:#1592ad"></i><i style="left:806.6px;top:216.8px;background:#1592ad"></i><i style="left:820.9px;top:216.8px;background:#88c3bb"></i><i style="left:835.1px;top:216.8px;background:#88c3bb"></i><i style="left:849.4px;top:216.8px;background:#88c3bb"></i><i style="left:863.7px;top:216.8px;background:#d9ebd5"></i><i style="left:878.0px;top:216.8px;background:#d9ebd5"></i><i style="left:692.5px;top:231.0px;background:#0a6288"></i><i style="left:706.7px;top:231.0px;background:#074a6c"></i><i style="left:721.0px;top:231.0px;background:#0a6288"></i><i style="left:735.3px;top:231.0px;background:#0a6288"></i><i style="left:749.5px;top:231.0px;background:#1592ad"></i><i style="left:763.8px;top:231.0px;background:#0a6288"></i><i style="left:778.1px;top:231.0px;background:#0a6288"></i><i style="left:792.3px;top:231.0px;background:#1592ad"></i><i style="left:806.6px;top:231.0px;background:#88c3bb"></i><i style="left:820.9px;top:231.0px;background:#88c3bb"></i><i style="left:835.1px;top:231.0px;background:#1592ad"></i><i style="left:849.4px;top:231.0px;background:#d9ebd5"></i><i style="left:863.7px;top:231.0px;background:#d9ebd5"></i><i style="left:878.0px;top:231.0px;background:#d9ebd5"></i><i style="left:649.6px;top:245.2px;background:#0a6288"></i><i style="left:678.2px;top:245.2px;background:#0a6288"></i><i style="left:692.5px;top:245.2px;background:#0a6288"></i><i style="left:706.7px;top:245.2px;background:#0a6288"></i><i style="left:721.0px;top:245.2px;background:#0a6288"></i><i style="left:735.3px;top:245.2px;background:#0a6288"></i><i style="left:749.5px;top:245.2px;background:#0a6288"></i><i style="left:763.8px;top:245.2px;background:#88c3bb"></i><i style="left:778.1px;top:245.2px;background:#0a6288"></i><i style="left:792.3px;top:245.2px;background:#0a6288"></i><i style="left:806.6px;top:245.2px;background:#88c3bb"></i><i style="left:820.9px;top:245.2px;background:#1592ad"></i><i style="left:835.1px;top:245.2px;background:#88c3bb"></i><i style="left:849.4px;top:245.2px;background:#88c3bb"></i><i style="left:863.7px;top:245.2px;background:#d9ebd5"></i><i style="left:878.0px;top:245.2px;background:#d9ebd5"></i><i style="left:621.1px;top:259.5px;background:#0a6288"></i><i style="left:678.2px;top:259.5px;background:#1592ad"></i><i style="left:692.5px;top:259.5px;background:#0a6288"></i><i style="left:706.7px;top:259.5px;background:#88c3bb"></i><i style="left:721.0px;top:259.5px;background:#0a6288"></i><i style="left:735.3px;top:259.5px;background:#0a6288"></i><i style="left:749.5px;top:259.5px;background:#1592ad"></i><i style="left:763.8px;top:259.5px;background:#0a6288"></i><i style="left:778.1px;top:259.5px;background:#0a6288"></i><i style="left:792.3px;top:259.5px;background:#88c3bb"></i><i style="left:806.6px;top:259.5px;background:#0a6288"></i><i style="left:820.9px;top:259.5px;background:#88c3bb"></i><i style="left:835.1px;top:259.5px;background:#88c3bb"></i><i style="left:849.4px;top:259.5px;background:#d9ebd5"></i><i style="left:863.7px;top:259.5px;background:#88c3bb"></i><i style="left:878.0px;top:259.5px;background:#d9ebd5"></i><i style="left:635.4px;top:273.8px;background:#1592ad"></i><i style="left:692.5px;top:273.8px;background:#074a6c"></i><i style="left:706.7px;top:273.8px;background:#0a6288"></i><i style="left:721.0px;top:273.8px;background:#0a6288"></i><i style="left:735.3px;top:273.8px;background:#0a6288"></i><i style="left:749.5px;top:273.8px;background:#0a6288"></i><i style="left:763.8px;top:273.8px;background:#1592ad"></i><i style="left:778.1px;top:273.8px;background:#0a6288"></i><i style="left:792.3px;top:273.8px;background:#88c3bb"></i><i style="left:806.6px;top:273.8px;background:#88c3bb"></i><i style="left:820.9px;top:273.8px;background:#88c3bb"></i><i style="left:835.1px;top:273.8px;background:#1592ad"></i><i style="left:849.4px;top:273.8px;background:#d9ebd5"></i><i style="left:863.7px;top:273.8px;background:#d9ebd5"></i><i style="left:878.0px;top:273.8px;background:#d9ebd5"></i><i style="left:663.9px;top:288.0px;background:#0a6288"></i><i style="left:678.2px;top:288.0px;background:#0a6288"></i><i style="left:692.5px;top:288.0px;background:#0a6288"></i><i style="left:706.7px;top:288.0px;background:#1592ad"></i><i style="left:721.0px;top:288.0px;background:#0a6288"></i><i style="left:735.3px;top:288.0px;background:#0a6288"></i><i style="left:749.5px;top:288.0px;background:#0a6288"></i><i style="left:763.8px;top:288.0px;background:#1592ad"></i><i style="left:778.1px;top:288.0px;background:#0a6288"></i><i style="left:792.3px;top:288.0px;background:#1592ad"></i><i style="left:806.6px;top:288.0px;background:#1592ad"></i><i style="left:820.9px;top:288.0px;background:#1592ad"></i><i style="left:835.1px;top:288.0px;background:#88c3bb"></i><i style="left:849.4px;top:288.0px;background:#d9ebd5"></i><i style="left:863.7px;top:288.0px;background:#d9ebd5"></i><i style="left:878.0px;top:288.0px;background:#d9ebd5"></i><i style="left:692.5px;top:302.2px;background:#0a6288"></i><i style="left:706.7px;top:302.2px;background:#0a6288"></i><i style="left:721.0px;top:302.2px;background:#1592ad"></i><i style="left:735.3px;top:302.2px;background:#0a6288"></i><i style="left:749.5px;top:302.2px;background:#0a6288"></i><i style="left:763.8px;top:302.2px;background:#1592ad"></i><i style="left:778.1px;top:302.2px;background:#0a6288"></i><i style="left:792.3px;top:302.2px;background:#1592ad"></i><i style="left:806.6px;top:302.2px;background:#88c3bb"></i><i style="left:820.9px;top:302.2px;background:#88c3bb"></i><i style="left:835.1px;top:302.2px;background:#88c3bb"></i><i style="left:849.4px;top:302.2px;background:#d9ebd5"></i><i style="left:863.7px;top:302.2px;background:#d9ebd5"></i><i style="left:878.0px;top:302.2px;background:#d9ebd5"></i><i style="left:649.6px;top:316.5px;background:#0a6288"></i><i style="left:678.2px;top:316.5px;background:#0a6288"></i><i style="left:706.7px;top:316.5px;background:#0a6288"></i><i style="left:721.0px;top:316.5px;background:#0a6288"></i><i style="left:735.3px;top:316.5px;background:#1592ad"></i><i style="left:749.5px;top:316.5px;background:#0a6288"></i><i style="left:763.8px;top:316.5px;background:#0a6288"></i><i style="left:778.1px;top:316.5px;background:#0a6288"></i><i style="left:792.3px;top:316.5px;background:#1592ad"></i><i style="left:806.6px;top:316.5px;background:#1592ad"></i><i style="left:820.9px;top:316.5px;background:#88c3bb"></i><i style="left:835.1px;top:316.5px;background:#1592ad"></i><i style="left:849.4px;top:316.5px;background:#88c3bb"></i><i style="left:863.7px;top:316.5px;background:#88c3bb"></i><i style="left:878.0px;top:316.5px;background:#d9ebd5"></i><i style="left:706.7px;top:330.8px;background:#0a6288"></i><i style="left:721.0px;top:330.8px;background:#0a6288"></i><i style="left:735.3px;top:330.8px;background:#1592ad"></i><i style="left:749.5px;top:330.8px;background:#0a6288"></i><i style="left:763.8px;top:330.8px;background:#88c3bb"></i><i style="left:778.1px;top:330.8px;background:#0a6288"></i><i style="left:792.3px;top:330.8px;background:#88c3bb"></i><i style="left:806.6px;top:330.8px;background:#1592ad"></i><i style="left:820.9px;top:330.8px;background:#88c3bb"></i><i style="left:835.1px;top:330.8px;background:#1592ad"></i><i style="left:849.4px;top:330.8px;background:#88c3bb"></i><i style="left:863.7px;top:330.8px;background:#d9ebd5"></i><i style="left:878.0px;top:330.8px;background:#d9ebd5"></i><i style="left:663.9px;top:345.0px;background:#0a6288"></i><i style="left:706.7px;top:345.0px;background:#074a6c"></i><i style="left:721.0px;top:345.0px;background:#0a6288"></i><i style="left:735.3px;top:345.0px;background:#0a6288"></i><i style="left:749.5px;top:345.0px;background:#0a6288"></i><i style="left:763.8px;top:345.0px;background:#0a6288"></i><i style="left:778.1px;top:345.0px;background:#0a6288"></i><i style="left:792.3px;top:345.0px;background:#1592ad"></i><i style="left:806.6px;top:345.0px;background:#88c3bb"></i><i style="left:820.9px;top:345.0px;background:#88c3bb"></i><i style="left:835.1px;top:345.0px;background:#1592ad"></i><i style="left:849.4px;top:345.0px;background:#88c3bb"></i><i style="left:863.7px;top:345.0px;background:#d9ebd5"></i><i style="left:878.0px;top:345.0px;background:#d9ebd5"></i><i style="left:621.1px;top:359.2px;background:#0a6288"></i><i style="left:678.2px;top:359.2px;background:#0a6288"></i><i style="left:692.5px;top:359.2px;background:#0a6288"></i><i style="left:706.7px;top:359.2px;background:#0a6288"></i><i style="left:721.0px;top:359.2px;background:#074a6c"></i><i style="left:735.3px;top:359.2px;background:#0a6288"></i><i style="left:749.5px;top:359.2px;background:#0a6288"></i><i style="left:763.8px;top:359.2px;background:#1592ad"></i><i style="left:778.1px;top:359.2px;background:#1592ad"></i><i style="left:792.3px;top:359.2px;background:#1592ad"></i><i style="left:806.6px;top:359.2px;background:#0a6288"></i><i style="left:820.9px;top:359.2px;background:#88c3bb"></i><i style="left:835.1px;top:359.2px;background:#88c3bb"></i><i style="left:849.4px;top:359.2px;background:#d9ebd5"></i><i style="left:863.7px;top:359.2px;background:#88c3bb"></i><i style="left:878.0px;top:359.2px;background:#d9ebd5"></i><i style="left:678.2px;top:373.5px;background:#1592ad"></i><i style="left:692.5px;top:373.5px;background:#0a6288"></i><i style="left:706.7px;top:373.5px;background:#074a6c"></i><i style="left:721.0px;top:373.5px;background:#0a6288"></i><i style="left:735.3px;top:373.5px;background:#0a6288"></i><i style="left:749.5px;top:373.5px;background:#1592ad"></i><i style="left:763.8px;top:373.5px;background:#0a6288"></i><i style="left:778.1px;top:373.5px;background:#0a6288"></i><i style="left:792.3px;top:373.5px;background:#88c3bb"></i><i style="left:806.6px;top:373.5px;background:#88c3bb"></i><i style="left:820.9px;top:373.5px;background:#88c3bb"></i><i style="left:835.1px;top:373.5px;background:#88c3bb"></i><i style="left:849.4px;top:373.5px;background:#d9ebd5"></i><i style="left:863.7px;top:373.5px;background:#88c3bb"></i><i style="left:878.0px;top:373.5px;background:#d9ebd5"></i><i style="left:635.4px;top:387.8px;background:#0a6288"></i><i style="left:649.6px;top:387.8px;background:#0a6288"></i><i style="left:678.2px;top:387.8px;background:#0a6288"></i><i style="left:706.7px;top:387.8px;background:#0a6288"></i><i style="left:721.0px;top:387.8px;background:#1592ad"></i><i style="left:735.3px;top:387.8px;background:#0a6288"></i><i style="left:749.5px;top:387.8px;background:#0a6288"></i><i style="left:763.8px;top:387.8px;background:#0a6288"></i><i style="left:778.1px;top:387.8px;background:#1592ad"></i><i style="left:792.3px;top:387.8px;background:#0a6288"></i><i style="left:806.6px;top:387.8px;background:#0a6288"></i><i style="left:820.9px;top:387.8px;background:#88c3bb"></i><i style="left:835.1px;top:387.8px;background:#1592ad"></i><i style="left:849.4px;top:387.8px;background:#88c3bb"></i><i style="left:863.7px;top:387.8px;background:#d9ebd5"></i><i style="left:878.0px;top:387.8px;background:#d9ebd5"></i><i style="left:663.9px;top:402.0px;background:#0a6288"></i><i style="left:706.7px;top:402.0px;background:#0a6288"></i><i style="left:721.0px;top:402.0px;background:#0a6288"></i><i style="left:735.3px;top:402.0px;background:#1592ad"></i><i style="left:749.5px;top:402.0px;background:#0a6288"></i><i style="left:763.8px;top:402.0px;background:#0a6288"></i><i style="left:778.1px;top:402.0px;background:#1592ad"></i><i style="left:792.3px;top:402.0px;background:#88c3bb"></i><i style="left:806.6px;top:402.0px;background:#1592ad"></i><i style="left:820.9px;top:402.0px;background:#88c3bb"></i><i style="left:835.1px;top:402.0px;background:#88c3bb"></i><i style="left:849.4px;top:402.0px;background:#d9ebd5"></i><i style="left:863.7px;top:402.0px;background:#d9ebd5"></i><i style="left:878.0px;top:402.0px;background:#d9ebd5"></i><i style="left:649.6px;top:416.2px;background:#d9ebd5"></i><i style="left:692.5px;top:416.2px;background:#0a6288"></i><i style="left:706.7px;top:416.2px;background:#0a6288"></i><i style="left:721.0px;top:416.2px;background:#0a6288"></i><i style="left:735.3px;top:416.2px;background:#1592ad"></i><i style="left:749.5px;top:416.2px;background:#0a6288"></i><i style="left:763.8px;top:416.2px;background:#1592ad"></i><i style="left:778.1px;top:416.2px;background:#0a6288"></i><i style="left:792.3px;top:416.2px;background:#88c3bb"></i><i style="left:806.6px;top:416.2px;background:#1592ad"></i><i style="left:820.9px;top:416.2px;background:#88c3bb"></i><i style="left:835.1px;top:416.2px;background:#88c3bb"></i><i style="left:849.4px;top:416.2px;background:#d9ebd5"></i><i style="left:863.7px;top:416.2px;background:#d9ebd5"></i><i style="left:878.0px;top:416.2px;background:#d9ebd5"></i><i style="left:678.2px;top:430.5px;background:#0a6288"></i><i style="left:706.7px;top:430.5px;background:#0a6288"></i><i style="left:721.0px;top:430.5px;background:#0a6288"></i><i style="left:735.3px;top:430.5px;background:#0a6288"></i><i style="left:749.5px;top:430.5px;background:#1592ad"></i><i style="left:763.8px;top:430.5px;background:#0a6288"></i><i style="left:778.1px;top:430.5px;background:#0a6288"></i><i style="left:792.3px;top:430.5px;background:#1592ad"></i><i style="left:806.6px;top:430.5px;background:#88c3bb"></i><i style="left:820.9px;top:430.5px;background:#88c3bb"></i><i style="left:835.1px;top:430.5px;background:#88c3bb"></i><i style="left:849.4px;top:430.5px;background:#d9ebd5"></i><i style="left:863.7px;top:430.5px;background:#88c3bb"></i><i style="left:878.0px;top:430.5px;background:#d9ebd5"></i><i style="left:621.1px;top:444.8px;background:#0a6288"></i><i style="left:692.5px;top:444.8px;background:#0a6288"></i><i style="left:706.7px;top:444.8px;background:#074a6c"></i><i style="left:721.0px;top:444.8px;background:#0a6288"></i><i style="left:735.3px;top:444.8px;background:#0a6288"></i><i style="left:749.5px;top:444.8px;background:#0a6288"></i><i style="left:763.8px;top:444.8px;background:#1592ad"></i><i style="left:778.1px;top:444.8px;background:#0a6288"></i><i style="left:792.3px;top:444.8px;background:#1592ad"></i><i style="left:806.6px;top:444.8px;background:#88c3bb"></i><i style="left:820.9px;top:444.8px;background:#88c3bb"></i><i style="left:835.1px;top:444.8px;background:#1592ad"></i><i style="left:849.4px;top:444.8px;background:#d9ebd5"></i><i style="left:863.7px;top:444.8px;background:#d9ebd5"></i><i style="left:878.0px;top:444.8px;background:#d9ebd5"></i><i style="left:663.9px;top:459.0px;background:#0a6288"></i><i style="left:706.7px;top:459.0px;background:#0a6288"></i><i style="left:721.0px;top:459.0px;background:#0a6288"></i><i style="left:735.3px;top:459.0px;background:#1592ad"></i><i style="left:749.5px;top:459.0px;background:#0a6288"></i><i style="left:763.8px;top:459.0px;background:#0a6288"></i><i style="left:778.1px;top:459.0px;background:#1592ad"></i><i style="left:792.3px;top:459.0px;background:#0a6288"></i><i style="left:806.6px;top:459.0px;background:#1592ad"></i><i style="left:820.9px;top:459.0px;background:#88c3bb"></i><i style="left:835.1px;top:459.0px;background:#88c3bb"></i><i style="left:849.4px;top:459.0px;background:#88c3bb"></i><i style="left:863.7px;top:459.0px;background:#d9ebd5"></i><i style="left:878.0px;top:459.0px;background:#d9ebd5"></i><i style="left:649.6px;top:473.2px;background:#074a6c"></i><i style="left:678.2px;top:473.2px;background:#0a6288"></i><i style="left:706.7px;top:473.2px;background:#0a6288"></i><i style="left:721.0px;top:473.2px;background:#0a6288"></i><i style="left:735.3px;top:473.2px;background:#0a6288"></i><i style="left:749.5px;top:473.2px;background:#0a6288"></i><i style="left:763.8px;top:473.2px;background:#1592ad"></i><i style="left:778.1px;top:473.2px;background:#0a6288"></i><i style="left:792.3px;top:473.2px;background:#88c3bb"></i><i style="left:806.6px;top:473.2px;background:#88c3bb"></i><i style="left:820.9px;top:473.2px;background:#88c3bb"></i><i style="left:835.1px;top:473.2px;background:#1592ad"></i><i style="left:849.4px;top:473.2px;background:#d9ebd5"></i><i style="left:863.7px;top:473.2px;background:#d9ebd5"></i><i style="left:878.0px;top:473.2px;background:#d9ebd5"></i><i style="left:635.4px;top:487.5px;background:#0a6288"></i><i style="left:692.5px;top:487.5px;background:#0a6288"></i><i style="left:706.7px;top:487.5px;background:#0a6288"></i><i style="left:721.0px;top:487.5px;background:#1592ad"></i><i style="left:735.3px;top:487.5px;background:#0a6288"></i><i style="left:749.5px;top:487.5px;background:#0a6288"></i><i style="left:763.8px;top:487.5px;background:#0a6288"></i><i style="left:778.1px;top:487.5px;background:#1592ad"></i><i style="left:792.3px;top:487.5px;background:#1592ad"></i><i style="left:806.6px;top:487.5px;background:#88c3bb"></i><i style="left:820.9px;top:487.5px;background:#88c3bb"></i><i style="left:835.1px;top:487.5px;background:#88c3bb"></i><i style="left:849.4px;top:487.5px;background:#d9ebd5"></i><i style="left:863.7px;top:487.5px;background:#88c3bb"></i><i style="left:878.0px;top:487.5px;background:#d9ebd5"></i></div><div class="t" style="left:13.9px;top:13.5px;font-size:6.97px;font-weight:bold;color:#fbefd0;transform:scaleX(0.838);transform-origin:0 0">Analyzing Melanin Data Sets</div><div class="t" style="left:13.9px;top:21.8px;font-size:6.97px;font-style:italic;color:#fdf6e3;transform:scaleX(0.826);transform-origin:0 0">Melanin Storyline 4</div><div class="t" style="left:13.9px;top:30.1px;font-size:6.97px;font-style:italic;color:#fdf6e3;transform:scaleX(0.82);transform-origin:0 0">Section 5.2 – Choice#2</div><div class="t" style="left:13.9px;top:42.6px;font-size:3.32px;color:#8db4c4;transform:scaleX(1.035);transform-origin:0 0">Question:&nbsp; Why is human skin color different throughout</div><div class="t" style="left:13.9px;top:47.4px;font-size:3.32px;color:#8db4c4;transform:scaleX(1.035);transform-origin:0 0">the world?</div><div class="t" style="left:14.6px;top:70.9px;font-size:2.82px;color:#a3c6d4;transform:scaleX(0.943);transform-origin:0 0">This set has charts with embedded CER responses tables on slides</div></div><div class="thumb" style="top:325px"><div class="a" style="left:0;top:0;width:892px;height:502px;transform:scale(0.1659);transform-origin:0 0;"><i style="left:663.9px;top:3.0px;background:#0a6288"></i><i style="left:692.5px;top:3.0px;background:#0a6288"></i><i style="left:706.7px;top:3.0px;background:#074a6c"></i><i style="left:721.0px;top:3.0px;background:#0a6288"></i><i style="left:735.3px;top:3.0px;background:#0a6288"></i><i style="left:749.5px;top:3.0px;background:#0a6288"></i><i style="left:763.8px;top:3.0px;background:#1592ad"></i><i style="left:778.1px;top:3.0px;background:#1592ad"></i><i style="left:792.3px;top:3.0px;background:#88c3bb"></i><i style="left:806.6px;top:3.0px;background:#1592ad"></i><i style="left:820.9px;top:3.0px;background:#88c3bb"></i><i style="left:835.1px;top:3.0px;background:#88c3bb"></i><i style="left:849.4px;top:3.0px;background:#d9ebd5"></i><i style="left:863.7px;top:3.0px;background:#d9ebd5"></i><i style="left:878.0px;top:3.0px;background:#d9ebd5"></i><i style="left:635.4px;top:17.2px;background:#0a6288"></i><i style="left:649.6px;top:17.2px;background:#0a6288"></i><i style="left:678.2px;top:17.2px;background:#0a6288"></i><i style="left:692.5px;top:17.2px;background:#0a6288"></i><i style="left:706.7px;top:17.2px;background:#88c3bb"></i><i style="left:721.0px;top:17.2px;background:#074a6c"></i><i style="left:735.3px;top:17.2px;background:#0a6288"></i><i style="left:749.5px;top:17.2px;background:#0a6288"></i><i style="left:763.8px;top:17.2px;background:#0a6288"></i><i style="left:778.1px;top:17.2px;background:#88c3bb"></i><i style="left:792.3px;top:17.2px;background:#0a6288"></i><i style="left:806.6px;top:17.2px;background:#88c3bb"></i><i style="left:820.9px;top:17.2px;background:#88c3bb"></i><i style="left:835.1px;top:17.2px;background:#1592ad"></i><i style="left:849.4px;top:17.2px;background:#d9ebd5"></i><i style="left:863.7px;top:17.2px;background:#88c3bb"></i><i style="left:878.0px;top:17.2px;background:#d9ebd5"></i><i style="left:663.9px;top:31.5px;background:#1592ad"></i><i style="left:678.2px;top:31.5px;background:#0a6288"></i><i style="left:692.5px;top:31.5px;background:#074a6c"></i><i style="left:706.7px;top:31.5px;background:#0a6288"></i><i style="left:721.0px;top:31.5px;background:#0a6288"></i><i style="left:735.3px;top:31.5px;background:#0a6288"></i><i style="left:749.5px;top:31.5px;background:#88c3bb"></i><i style="left:763.8px;top:31.5px;background:#0a6288"></i><i style="left:778.1px;top:31.5px;background:#1592ad"></i><i style="left:792.3px;top:31.5px;background:#1592ad"></i><i style="left:806.6px;top:31.5px;background:#0a6288"></i><i style="left:820.9px;top:31.5px;background:#88c3bb"></i><i style="left:835.1px;top:31.5px;background:#1592ad"></i><i style="left:849.4px;top:31.5px;background:#d9ebd5"></i><i style="left:863.7px;top:31.5px;background:#d9ebd5"></i><i style="left:878.0px;top:31.5px;background:#d9ebd5"></i><i style="left:621.1px;top:45.8px;background:#1592ad"></i><i style="left:692.5px;top:45.8px;background:#0a6288"></i><i style="left:706.7px;top:45.8px;background:#0a6288"></i><i style="left:721.0px;top:45.8px;background:#1592ad"></i><i style="left:735.3px;top:45.8px;background:#0a6288"></i><i style="left:749.5px;top:45.8px;background:#1592ad"></i><i style="left:763.8px;top:45.8px;background:#0a6288"></i><i style="left:778.1px;top:45.8px;background:#0a6288"></i><i style="left:792.3px;top:45.8px;background:#88c3bb"></i><i style="left:806.6px;top:45.8px;background:#88c3bb"></i><i style="left:820.9px;top:45.8px;background:#88c3bb"></i><i style="left:835.1px;top:45.8px;background:#88c3bb"></i><i style="left:849.4px;top:45.8px;background:#88c3bb"></i><i style="left:863.7px;top:45.8px;background:#d9ebd5"></i><i style="left:878.0px;top:45.8px;background:#d9ebd5"></i><i style="left:678.2px;top:60.0px;background:#0a6288"></i><i style="left:706.7px;top:60.0px;background:#074a6c"></i><i style="left:721.0px;top:60.0px;background:#0a6288"></i><i style="left:735.3px;top:60.0px;background:#88c3bb"></i><i style="left:749.5px;top:60.0px;background:#0a6288"></i><i style="left:763.8px;top:60.0px;background:#1592ad"></i><i style="left:778.1px;top:60.0px;background:#0a6288"></i><i style="left:792.3px;top:60.0px;background:#1592ad"></i><i style="left:806.6px;top:60.0px;background:#0a6288"></i><i style="left:820.9px;top:60.0px;background:#88c3bb"></i><i style="left:835.1px;top:60.0px;background:#1592ad"></i><i style="left:849.4px;top:60.0px;background:#d9ebd5"></i><i style="left:863.7px;top:60.0px;background:#88c3bb"></i><i style="left:878.0px;top:60.0px;background:#d9ebd5"></i><i style="left:649.6px;top:74.2px;background:#0a6288"></i><i style="left:692.5px;top:74.2px;background:#074a6c"></i><i style="left:706.7px;top:74.2px;background:#0a6288"></i><i style="left:721.0px;top:74.2px;background:#0a6288"></i><i style="left:735.3px;top:74.2px;background:#0a6288"></i><i style="left:749.5px;top:74.2px;background:#0a6288"></i><i style="left:763.8px;top:74.2px;background:#1592ad"></i><i style="left:778.1px;top:74.2px;background:#88c3bb"></i><i style="left:792.3px;top:74.2px;background:#1592ad"></i><i style="left:806.6px;top:74.2px;background:#88c3bb"></i><i style="left:820.9px;top:74.2px;background:#88c3bb"></i><i style="left:835.1px;top:74.2px;background:#88c3bb"></i><i style="left:849.4px;top:74.2px;background:#d9ebd5"></i><i style="left:863.7px;top:74.2px;background:#d9ebd5"></i><i style="left:878.0px;top:74.2px;background:#d9ebd5"></i><i style="left:635.4px;top:88.5px;background:#0a6288"></i><i style="left:649.6px;top:88.5px;background:#0a6288"></i><i style="left:663.9px;top:88.5px;background:#0a6288"></i><i style="left:706.7px;top:88.5px;background:#0a6288"></i><i style="left:721.0px;top:88.5px;background:#074a6c"></i><i style="left:735.3px;top:88.5px;background:#0a6288"></i><i style="left:749.5px;top:88.5px;background:#0a6288"></i><i style="left:763.8px;top:88.5px;background:#0a6288"></i><i style="left:778.1px;top:88.5px;background:#0a6288"></i><i style="left:792.3px;top:88.5px;background:#1592ad"></i><i style="left:806.6px;top:88.5px;background:#88c3bb"></i><i style="left:820.9px;top:88.5px;background:#88c3bb"></i><i style="left:835.1px;top:88.5px;background:#1592ad"></i><i style="left:849.4px;top:88.5px;background:#88c3bb"></i><i style="left:863.7px;top:88.5px;background:#d9ebd5"></i><i style="left:878.0px;top:88.5px;background:#d9ebd5"></i><i style="left:663.9px;top:102.8px;background:#0a6288"></i><i style="left:678.2px;top:102.8px;background:#0a6288"></i><i style="left:692.5px;top:102.8px;background:#1592ad"></i><i style="left:706.7px;top:102.8px;background:#0a6288"></i><i style="left:721.0px;top:102.8px;background:#0a6288"></i><i style="left:735.3px;top:102.8px;background:#0a6288"></i><i style="left:749.5px;top:102.8px;background:#1592ad"></i><i style="left:763.8px;top:102.8px;background:#0a6288"></i><i style="left:778.1px;top:102.8px;background:#0a6288"></i><i style="left:792.3px;top:102.8px;background:#0a6288"></i><i style="left:806.6px;top:102.8px;background:#88c3bb"></i><i style="left:820.9px;top:102.8px;background:#88c3bb"></i><i style="left:835.1px;top:102.8px;background:#88c3bb"></i><i style="left:849.4px;top:102.8px;background:#88c3bb"></i><i style="left:863.7px;top:102.8px;background:#d9ebd5"></i><i style="left:878.0px;top:102.8px;background:#d9ebd5"></i><i style="left:678.2px;top:117.0px;background:#0a6288"></i><i style="left:692.5px;top:117.0px;background:#0a6288"></i><i style="left:706.7px;top:117.0px;background:#0a6288"></i><i style="left:721.0px;top:117.0px;background:#0a6288"></i><i style="left:735.3px;top:117.0px;background:#0a6288"></i><i style="left:749.5px;top:117.0px;background:#0a6288"></i><i style="left:763.8px;top:117.0px;background:#1592ad"></i><i style="left:778.1px;top:117.0px;background:#0a6288"></i><i style="left:792.3px;top:117.0px;background:#88c3bb"></i><i style="left:806.6px;top:117.0px;background:#88c3bb"></i><i style="left:820.9px;top:117.0px;background:#1592ad"></i><i style="left:835.1px;top:117.0px;background:#88c3bb"></i><i style="left:849.4px;top:117.0px;background:#d9ebd5"></i><i style="left:863.7px;top:117.0px;background:#d9ebd5"></i><i style="left:878.0px;top:117.0px;background:#d9ebd5"></i><i style="left:678.2px;top:131.2px;background:#074a6c"></i><i style="left:692.5px;top:131.2px;background:#074a6c"></i><i style="left:706.7px;top:131.2px;background:#0a6288"></i><i style="left:721.0px;top:131.2px;background:#0a6288"></i><i style="left:735.3px;top:131.2px;background:#1592ad"></i><i style="left:749.5px;top:131.2px;background:#0a6288"></i><i style="left:763.8px;top:131.2px;background:#0a6288"></i><i style="left:778.1px;top:131.2px;background:#0a6288"></i><i style="left:792.3px;top:131.2px;background:#1592ad"></i><i style="left:806.6px;top:131.2px;background:#0a6288"></i><i style="left:820.9px;top:131.2px;background:#88c3bb"></i><i style="left:835.1px;top:131.2px;background:#88c3bb"></i><i style="left:849.4px;top:131.2px;background:#d9ebd5"></i><i style="left:863.7px;top:131.2px;background:#88c3bb"></i><i style="left:878.0px;top:131.2px;background:#d9ebd5"></i><i style="left:635.4px;top:145.5px;background:#0a6288"></i><i style="left:678.2px;top:145.5px;background:#0a6288"></i><i style="left:692.5px;top:145.5px;background:#0a6288"></i><i style="left:706.7px;top:145.5px;background:#074a6c"></i><i style="left:721.0px;top:145.5px;background:#0a6288"></i><i style="left:735.3px;top:145.5px;background:#0a6288"></i><i style="left:749.5px;top:145.5px;background:#1592ad"></i><i style="left:763.8px;top:145.5px;background:#0a6288"></i><i style="left:778.1px;top:145.5px;background:#0a6288"></i><i style="left:792.3px;top:145.5px;background:#1592ad"></i><i style="left:806.6px;top:145.5px;background:#88c3bb"></i><i style="left:820.9px;top:145.5px;background:#88c3bb"></i><i style="left:835.1px;top:145.5px;background:#1592ad"></i><i style="left:849.4px;top:145.5px;background:#d9ebd5"></i><i style="left:863.7px;top:145.5px;background:#d9ebd5"></i><i style="left:878.0px;top:145.5px;background:#d9ebd5"></i><i style="left:649.6px;top:159.8px;background:#0a6288"></i><i style="left:678.2px;top:159.8px;background:#0a6288"></i><i style="left:692.5px;top:159.8px;background:#0a6288"></i><i style="left:706.7px;top:159.8px;background:#1592ad"></i><i style="left:721.0px;top:159.8px;background:#1592ad"></i><i style="left:735.3px;top:159.8px;background:#1592ad"></i><i style="left:749.5px;top:159.8px;background:#0a6288"></i><i style="left:763.8px;top:159.8px;background:#0a6288"></i><i style="left:778.1px;top:159.8px;background:#1592ad"></i><i style="left:792.3px;top:159.8px;background:#88c3bb"></i><i style="left:806.6px;top:159.8px;background:#88c3bb"></i><i style="left:820.9px;top:159.8px;background:#88c3bb"></i><i style="left:835.1px;top:159.8px;background:#1592ad"></i><i style="left:849.4px;top:159.8px;background:#d9ebd5"></i><i style="left:863.7px;top:159.8px;background:#d9ebd5"></i><i style="left:878.0px;top:159.8px;background:#d9ebd5"></i><i style="left:678.2px;top:174.0px;background:#0a6288"></i><i style="left:692.5px;top:174.0px;background:#0a6288"></i><i style="left:706.7px;top:174.0px;background:#0a6288"></i><i style="left:721.0px;top:174.0px;background:#0a6288"></i><i style="left:735.3px;top:174.0px;background:#0a6288"></i><i style="left:749.5px;top:174.0px;background:#0a6288"></i><i style="left:763.8px;top:174.0px;background:#0a6288"></i><i style="left:778.1px;top:174.0px;background:#1592ad"></i><i style="left:792.3px;top:174.0px;background:#0a6288"></i><i style="left:806.6px;top:174.0px;background:#1592ad"></i><i style="left:820.9px;top:174.0px;background:#88c3bb"></i><i style="left:835.1px;top:174.0px;background:#88c3bb"></i><i style="left:849.4px;top:174.0px;background:#88c3bb"></i><i style="left:863.7px;top:174.0px;background:#d9ebd5"></i><i style="left:878.0px;top:174.0px;background:#d9ebd5"></i><i style="left:706.7px;top:188.2px;background:#0a6288"></i><i style="left:721.0px;top:188.2px;background:#074a6c"></i><i style="left:735.3px;top:188.2px;background:#0a6288"></i><i style="left:749.5px;top:188.2px;background:#0a6288"></i><i style="left:763.8px;top:188.2px;background:#1592ad"></i><i style="left:778.1px;top:188.2px;background:#88c3bb"></i><i style="left:792.3px;top:188.2px;background:#0a6288"></i><i style="left:806.6px;top:188.2px;background:#88c3bb"></i><i style="left:820.9px;top:188.2px;background:#88c3bb"></i><i style="left:835.1px;top:188.2px;background:#88c3bb"></i><i style="left:849.4px;top:188.2px;background:#d9ebd5"></i><i style="left:863.7px;top:188.2px;background:#88c3bb"></i><i style="left:878.0px;top:188.2px;background:#d9ebd5"></i><i style="left:635.4px;top:202.5px;background:#0a6288"></i><i style="left:678.2px;top:202.5px;background:#0a6288"></i><i style="left:706.7px;top:202.5px;background:#1592ad"></i><i style="left:721.0px;top:202.5px;background:#0a6288"></i><i style="left:735.3px;top:202.5px;background:#0a6288"></i><i style="left:749.5px;top:202.5px;background:#0a6288"></i><i style="left:763.8px;top:202.5px;background:#0a6288"></i><i style="left:778.1px;top:202.5px;background:#1592ad"></i><i style="left:792.3px;top:202.5px;background:#1592ad"></i><i style="left:806.6px;top:202.5px;background:#88c3bb"></i><i style="left:820.9px;top:202.5px;background:#88c3bb"></i><i style="left:835.1px;top:202.5px;background:#88c3bb"></i><i style="left:849.4px;top:202.5px;background:#d9ebd5"></i><i style="left:863.7px;top:202.5px;background:#88c3bb"></i><i style="left:878.0px;top:202.5px;background:#d9ebd5"></i><i style="left:663.9px;top:216.8px;background:#0a6288"></i><i style="left:678.2px;top:216.8px;background:#0a6288"></i><i style="left:692.5px;top:216.8px;background:#0a6288"></i><i style="left:706.7px;top:216.8px;background:#0a6288"></i><i style="left:721.0px;top:216.8px;background:#0a6288"></i><i style="left:735.3px;top:216.8px;background:#0a6288"></i><i style="left:749.5px;top:216.8px;background:#0a6288"></i><i style="left:763.8px;top:216.8px;background:#0a6288"></i><i style="left:778.1px;top:216.8px;background:#0a6288"></i><i style="left:792.3px;top:216.8px;background:#1592ad"></i><i style="left:806.6px;top:216.8px;background:#1592ad"></i><i style="left:820.9px;top:216.8px;background:#88c3bb"></i><i style="left:835.1px;top:216.8px;background:#88c3bb"></i><i style="left:849.4px;top:216.8px;background:#88c3bb"></i><i style="left:863.7px;top:216.8px;background:#d9ebd5"></i><i style="left:878.0px;top:216.8px;background:#d9ebd5"></i><i style="left:692.5px;top:231.0px;background:#0a6288"></i><i style="left:706.7px;top:231.0px;background:#074a6c"></i><i style="left:721.0px;top:231.0px;background:#0a6288"></i><i style="left:735.3px;top:231.0px;background:#0a6288"></i><i style="left:749.5px;top:231.0px;background:#1592ad"></i><i style="left:763.8px;top:231.0px;background:#0a6288"></i><i style="left:778.1px;top:231.0px;background:#0a6288"></i><i style="left:792.3px;top:231.0px;background:#1592ad"></i><i style="left:806.6px;top:231.0px;background:#88c3bb"></i><i style="left:820.9px;top:231.0px;background:#88c3bb"></i><i style="left:835.1px;top:231.0px;background:#1592ad"></i><i style="left:849.4px;top:231.0px;background:#d9ebd5"></i><i style="left:863.7px;top:231.0px;background:#d9ebd5"></i><i style="left:878.0px;top:231.0px;background:#d9ebd5"></i><i style="left:649.6px;top:245.2px;background:#0a6288"></i><i style="left:678.2px;top:245.2px;background:#0a6288"></i><i style="left:692.5px;top:245.2px;background:#0a6288"></i><i style="left:706.7px;top:245.2px;background:#0a6288"></i><i style="left:721.0px;top:245.2px;background:#0a6288"></i><i style="left:735.3px;top:245.2px;background:#0a6288"></i><i style="left:749.5px;top:245.2px;background:#0a6288"></i><i style="left:763.8px;top:245.2px;background:#88c3bb"></i><i style="left:778.1px;top:245.2px;background:#0a6288"></i><i style="left:792.3px;top:245.2px;background:#0a6288"></i><i style="left:806.6px;top:245.2px;background:#88c3bb"></i><i style="left:820.9px;top:245.2px;background:#1592ad"></i><i style="left:835.1px;top:245.2px;background:#88c3bb"></i><i style="left:849.4px;top:245.2px;background:#88c3bb"></i><i style="left:863.7px;top:245.2px;background:#d9ebd5"></i><i style="left:878.0px;top:245.2px;background:#d9ebd5"></i><i style="left:621.1px;top:259.5px;background:#0a6288"></i><i style="left:678.2px;top:259.5px;background:#1592ad"></i><i style="left:692.5px;top:259.5px;background:#0a6288"></i><i style="left:706.7px;top:259.5px;background:#88c3bb"></i><i style="left:721.0px;top:259.5px;background:#0a6288"></i><i style="left:735.3px;top:259.5px;background:#0a6288"></i><i style="left:749.5px;top:259.5px;background:#1592ad"></i><i style="left:763.8px;top:259.5px;background:#0a6288"></i><i style="left:778.1px;top:259.5px;background:#0a6288"></i><i style="left:792.3px;top:259.5px;background:#88c3bb"></i><i style="left:806.6px;top:259.5px;background:#0a6288"></i><i style="left:820.9px;top:259.5px;background:#88c3bb"></i><i style="left:835.1px;top:259.5px;background:#88c3bb"></i><i style="left:849.4px;top:259.5px;background:#d9ebd5"></i><i style="left:863.7px;top:259.5px;background:#88c3bb"></i><i style="left:878.0px;top:259.5px;background:#d9ebd5"></i><i style="left:635.4px;top:273.8px;background:#1592ad"></i><i style="left:692.5px;top:273.8px;background:#074a6c"></i><i style="left:706.7px;top:273.8px;background:#0a6288"></i><i style="left:721.0px;top:273.8px;background:#0a6288"></i><i style="left:735.3px;top:273.8px;background:#0a6288"></i><i style="left:749.5px;top:273.8px;background:#0a6288"></i><i style="left:763.8px;top:273.8px;background:#1592ad"></i><i style="left:778.1px;top:273.8px;background:#0a6288"></i><i style="left:792.3px;top:273.8px;background:#88c3bb"></i><i style="left:806.6px;top:273.8px;background:#88c3bb"></i><i style="left:820.9px;top:273.8px;background:#88c3bb"></i><i style="left:835.1px;top:273.8px;background:#1592ad"></i><i style="left:849.4px;top:273.8px;background:#d9ebd5"></i><i style="left:863.7px;top:273.8px;background:#d9ebd5"></i><i style="left:878.0px;top:273.8px;background:#d9ebd5"></i><i style="left:663.9px;top:288.0px;background:#0a6288"></i><i style="left:678.2px;top:288.0px;background:#0a6288"></i><i style="left:692.5px;top:288.0px;background:#0a6288"></i><i style="left:706.7px;top:288.0px;background:#1592ad"></i><i style="left:721.0px;top:288.0px;background:#0a6288"></i><i style="left:735.3px;top:288.0px;background:#0a6288"></i><i style="left:749.5px;top:288.0px;background:#0a6288"></i><i style="left:763.8px;top:288.0px;background:#1592ad"></i><i style="left:778.1px;top:288.0px;background:#0a6288"></i><i style="left:792.3px;top:288.0px;background:#1592ad"></i><i style="left:806.6px;top:288.0px;background:#1592ad"></i><i style="left:820.9px;top:288.0px;background:#1592ad"></i><i style="left:835.1px;top:288.0px;background:#88c3bb"></i><i style="left:849.4px;top:288.0px;background:#d9ebd5"></i><i style="left:863.7px;top:288.0px;background:#d9ebd5"></i><i style="left:878.0px;top:288.0px;background:#d9ebd5"></i><i style="left:692.5px;top:302.2px;background:#0a6288"></i><i style="left:706.7px;top:302.2px;background:#0a6288"></i><i style="left:721.0px;top:302.2px;background:#1592ad"></i><i style="left:735.3px;top:302.2px;background:#0a6288"></i><i style="left:749.5px;top:302.2px;background:#0a6288"></i><i style="left:763.8px;top:302.2px;background:#1592ad"></i><i style="left:778.1px;top:302.2px;background:#0a6288"></i><i style="left:792.3px;top:302.2px;background:#1592ad"></i><i style="left:806.6px;top:302.2px;background:#88c3bb"></i><i style="left:820.9px;top:302.2px;background:#88c3bb"></i><i style="left:835.1px;top:302.2px;background:#88c3bb"></i><i style="left:849.4px;top:302.2px;background:#d9ebd5"></i><i style="left:863.7px;top:302.2px;background:#d9ebd5"></i><i style="left:878.0px;top:302.2px;background:#d9ebd5"></i><i style="left:649.6px;top:316.5px;background:#0a6288"></i><i style="left:678.2px;top:316.5px;background:#0a6288"></i><i style="left:706.7px;top:316.5px;background:#0a6288"></i><i style="left:721.0px;top:316.5px;background:#0a6288"></i><i style="left:735.3px;top:316.5px;background:#1592ad"></i><i style="left:749.5px;top:316.5px;background:#0a6288"></i><i style="left:763.8px;top:316.5px;background:#0a6288"></i><i style="left:778.1px;top:316.5px;background:#0a6288"></i><i style="left:792.3px;top:316.5px;background:#1592ad"></i><i style="left:806.6px;top:316.5px;background:#1592ad"></i><i style="left:820.9px;top:316.5px;background:#88c3bb"></i><i style="left:835.1px;top:316.5px;background:#1592ad"></i><i style="left:849.4px;top:316.5px;background:#88c3bb"></i><i style="left:863.7px;top:316.5px;background:#88c3bb"></i><i style="left:878.0px;top:316.5px;background:#d9ebd5"></i><i style="left:706.7px;top:330.8px;background:#0a6288"></i><i style="left:721.0px;top:330.8px;background:#0a6288"></i><i style="left:735.3px;top:330.8px;background:#1592ad"></i><i style="left:749.5px;top:330.8px;background:#0a6288"></i><i style="left:763.8px;top:330.8px;background:#88c3bb"></i><i style="left:778.1px;top:330.8px;background:#0a6288"></i><i style="left:792.3px;top:330.8px;background:#88c3bb"></i><i style="left:806.6px;top:330.8px;background:#1592ad"></i><i style="left:820.9px;top:330.8px;background:#88c3bb"></i><i style="left:835.1px;top:330.8px;background:#1592ad"></i><i style="left:849.4px;top:330.8px;background:#88c3bb"></i><i style="left:863.7px;top:330.8px;background:#d9ebd5"></i><i style="left:878.0px;top:330.8px;background:#d9ebd5"></i><i style="left:663.9px;top:345.0px;background:#0a6288"></i><i style="left:706.7px;top:345.0px;background:#074a6c"></i><i style="left:721.0px;top:345.0px;background:#0a6288"></i><i style="left:735.3px;top:345.0px;background:#0a6288"></i><i style="left:749.5px;top:345.0px;background:#0a6288"></i><i style="left:763.8px;top:345.0px;background:#0a6288"></i><i style="left:778.1px;top:345.0px;background:#0a6288"></i><i style="left:792.3px;top:345.0px;background:#1592ad"></i><i style="left:806.6px;top:345.0px;background:#88c3bb"></i><i style="left:820.9px;top:345.0px;background:#88c3bb"></i><i style="left:835.1px;top:345.0px;background:#1592ad"></i><i style="left:849.4px;top:345.0px;background:#88c3bb"></i><i style="left:863.7px;top:345.0px;background:#d9ebd5"></i><i style="left:878.0px;top:345.0px;background:#d9ebd5"></i><i style="left:621.1px;top:359.2px;background:#0a6288"></i><i style="left:678.2px;top:359.2px;background:#0a6288"></i><i style="left:692.5px;top:359.2px;background:#0a6288"></i><i style="left:706.7px;top:359.2px;background:#0a6288"></i><i style="left:721.0px;top:359.2px;background:#074a6c"></i><i style="left:735.3px;top:359.2px;background:#0a6288"></i><i style="left:749.5px;top:359.2px;background:#0a6288"></i><i style="left:763.8px;top:359.2px;background:#1592ad"></i><i style="left:778.1px;top:359.2px;background:#1592ad"></i><i style="left:792.3px;top:359.2px;background:#1592ad"></i><i style="left:806.6px;top:359.2px;background:#0a6288"></i><i style="left:820.9px;top:359.2px;background:#88c3bb"></i><i style="left:835.1px;top:359.2px;background:#88c3bb"></i><i style="left:849.4px;top:359.2px;background:#d9ebd5"></i><i style="left:863.7px;top:359.2px;background:#88c3bb"></i><i style="left:878.0px;top:359.2px;background:#d9ebd5"></i><i style="left:678.2px;top:373.5px;background:#1592ad"></i><i style="left:692.5px;top:373.5px;background:#0a6288"></i><i style="left:706.7px;top:373.5px;background:#074a6c"></i><i style="left:721.0px;top:373.5px;background:#0a6288"></i><i style="left:735.3px;top:373.5px;background:#0a6288"></i><i style="left:749.5px;top:373.5px;background:#1592ad"></i><i style="left:763.8px;top:373.5px;background:#0a6288"></i><i style="left:778.1px;top:373.5px;background:#0a6288"></i><i style="left:792.3px;top:373.5px;background:#88c3bb"></i><i style="left:806.6px;top:373.5px;background:#88c3bb"></i><i style="left:820.9px;top:373.5px;background:#88c3bb"></i><i style="left:835.1px;top:373.5px;background:#88c3bb"></i><i style="left:849.4px;top:373.5px;background:#d9ebd5"></i><i style="left:863.7px;top:373.5px;background:#88c3bb"></i><i style="left:878.0px;top:373.5px;background:#d9ebd5"></i><i style="left:635.4px;top:387.8px;background:#0a6288"></i><i style="left:649.6px;top:387.8px;background:#0a6288"></i><i style="left:678.2px;top:387.8px;background:#0a6288"></i><i style="left:706.7px;top:387.8px;background:#0a6288"></i><i style="left:721.0px;top:387.8px;background:#1592ad"></i><i style="left:735.3px;top:387.8px;background:#0a6288"></i><i style="left:749.5px;top:387.8px;background:#0a6288"></i><i style="left:763.8px;top:387.8px;background:#0a6288"></i><i style="left:778.1px;top:387.8px;background:#1592ad"></i><i style="left:792.3px;top:387.8px;background:#0a6288"></i><i style="left:806.6px;top:387.8px;background:#0a6288"></i><i style="left:820.9px;top:387.8px;background:#88c3bb"></i><i style="left:835.1px;top:387.8px;background:#1592ad"></i><i style="left:849.4px;top:387.8px;background:#88c3bb"></i><i style="left:863.7px;top:387.8px;background:#d9ebd5"></i><i style="left:878.0px;top:387.8px;background:#d9ebd5"></i><i style="left:663.9px;top:402.0px;background:#0a6288"></i><i style="left:706.7px;top:402.0px;background:#0a6288"></i><i style="left:721.0px;top:402.0px;background:#0a6288"></i><i style="left:735.3px;top:402.0px;background:#1592ad"></i><i style="left:749.5px;top:402.0px;background:#0a6288"></i><i style="left:763.8px;top:402.0px;background:#0a6288"></i><i style="left:778.1px;top:402.0px;background:#1592ad"></i><i style="left:792.3px;top:402.0px;background:#88c3bb"></i><i style="left:806.6px;top:402.0px;background:#1592ad"></i><i style="left:820.9px;top:402.0px;background:#88c3bb"></i><i style="left:835.1px;top:402.0px;background:#88c3bb"></i><i style="left:849.4px;top:402.0px;background:#d9ebd5"></i><i style="left:863.7px;top:402.0px;background:#d9ebd5"></i><i style="left:878.0px;top:402.0px;background:#d9ebd5"></i><i style="left:649.6px;top:416.2px;background:#d9ebd5"></i><i style="left:692.5px;top:416.2px;background:#0a6288"></i><i style="left:706.7px;top:416.2px;background:#0a6288"></i><i style="left:721.0px;top:416.2px;background:#0a6288"></i><i style="left:735.3px;top:416.2px;background:#1592ad"></i><i style="left:749.5px;top:416.2px;background:#0a6288"></i><i style="left:763.8px;top:416.2px;background:#1592ad"></i><i style="left:778.1px;top:416.2px;background:#0a6288"></i><i style="left:792.3px;top:416.2px;background:#88c3bb"></i><i style="left:806.6px;top:416.2px;background:#1592ad"></i><i style="left:820.9px;top:416.2px;background:#88c3bb"></i><i style="left:835.1px;top:416.2px;background:#88c3bb"></i><i style="left:849.4px;top:416.2px;background:#d9ebd5"></i><i style="left:863.7px;top:416.2px;background:#d9ebd5"></i><i style="left:878.0px;top:416.2px;background:#d9ebd5"></i><i style="left:678.2px;top:430.5px;background:#0a6288"></i><i style="left:706.7px;top:430.5px;background:#0a6288"></i><i style="left:721.0px;top:430.5px;background:#0a6288"></i><i style="left:735.3px;top:430.5px;background:#0a6288"></i><i style="left:749.5px;top:430.5px;background:#1592ad"></i><i style="left:763.8px;top:430.5px;background:#0a6288"></i><i style="left:778.1px;top:430.5px;background:#0a6288"></i><i style="left:792.3px;top:430.5px;background:#1592ad"></i><i style="left:806.6px;top:430.5px;background:#88c3bb"></i><i style="left:820.9px;top:430.5px;background:#88c3bb"></i><i style="left:835.1px;top:430.5px;background:#88c3bb"></i><i style="left:849.4px;top:430.5px;background:#d9ebd5"></i><i style="left:863.7px;top:430.5px;background:#88c3bb"></i><i style="left:878.0px;top:430.5px;background:#d9ebd5"></i><i style="left:621.1px;top:444.8px;background:#0a6288"></i><i style="left:692.5px;top:444.8px;background:#0a6288"></i><i style="left:706.7px;top:444.8px;background:#074a6c"></i><i style="left:721.0px;top:444.8px;background:#0a6288"></i><i style="left:735.3px;top:444.8px;background:#0a6288"></i><i style="left:749.5px;top:444.8px;background:#0a6288"></i><i style="left:763.8px;top:444.8px;background:#1592ad"></i><i style="left:778.1px;top:444.8px;background:#0a6288"></i><i style="left:792.3px;top:444.8px;background:#1592ad"></i><i style="left:806.6px;top:444.8px;background:#88c3bb"></i><i style="left:820.9px;top:444.8px;background:#88c3bb"></i><i style="left:835.1px;top:444.8px;background:#1592ad"></i><i style="left:849.4px;top:444.8px;background:#d9ebd5"></i><i style="left:863.7px;top:444.8px;background:#d9ebd5"></i><i style="left:878.0px;top:444.8px;background:#d9ebd5"></i><i style="left:663.9px;top:459.0px;background:#0a6288"></i><i style="left:706.7px;top:459.0px;background:#0a6288"></i><i style="left:721.0px;top:459.0px;background:#0a6288"></i><i style="left:735.3px;top:459.0px;background:#1592ad"></i><i style="left:749.5px;top:459.0px;background:#0a6288"></i><i style="left:763.8px;top:459.0px;background:#0a6288"></i><i style="left:778.1px;top:459.0px;background:#1592ad"></i><i style="left:792.3px;top:459.0px;background:#0a6288"></i><i style="left:806.6px;top:459.0px;background:#1592ad"></i><i style="left:820.9px;top:459.0px;background:#88c3bb"></i><i style="left:835.1px;top:459.0px;background:#88c3bb"></i><i style="left:849.4px;top:459.0px;background:#88c3bb"></i><i style="left:863.7px;top:459.0px;background:#d9ebd5"></i><i style="left:878.0px;top:459.0px;background:#d9ebd5"></i><i style="left:649.6px;top:473.2px;background:#074a6c"></i><i style="left:678.2px;top:473.2px;background:#0a6288"></i><i style="left:706.7px;top:473.2px;background:#0a6288"></i><i style="left:721.0px;top:473.2px;background:#0a6288"></i><i style="left:735.3px;top:473.2px;background:#0a6288"></i><i style="left:749.5px;top:473.2px;background:#0a6288"></i><i style="left:763.8px;top:473.2px;background:#1592ad"></i><i style="left:778.1px;top:473.2px;background:#0a6288"></i><i style="left:792.3px;top:473.2px;background:#88c3bb"></i><i style="left:806.6px;top:473.2px;background:#88c3bb"></i><i style="left:820.9px;top:473.2px;background:#88c3bb"></i><i style="left:835.1px;top:473.2px;background:#1592ad"></i><i style="left:849.4px;top:473.2px;background:#d9ebd5"></i><i style="left:863.7px;top:473.2px;background:#d9ebd5"></i><i style="left:878.0px;top:473.2px;background:#d9ebd5"></i><i style="left:635.4px;top:487.5px;background:#0a6288"></i><i style="left:692.5px;top:487.5px;background:#0a6288"></i><i style="left:706.7px;top:487.5px;background:#0a6288"></i><i style="left:721.0px;top:487.5px;background:#1592ad"></i><i style="left:735.3px;top:487.5px;background:#0a6288"></i><i style="left:749.5px;top:487.5px;background:#0a6288"></i><i style="left:763.8px;top:487.5px;background:#0a6288"></i><i style="left:778.1px;top:487.5px;background:#1592ad"></i><i style="left:792.3px;top:487.5px;background:#1592ad"></i><i style="left:806.6px;top:487.5px;background:#88c3bb"></i><i style="left:820.9px;top:487.5px;background:#88c3bb"></i><i style="left:835.1px;top:487.5px;background:#88c3bb"></i><i style="left:849.4px;top:487.5px;background:#d9ebd5"></i><i style="left:863.7px;top:487.5px;background:#88c3bb"></i><i style="left:878.0px;top:487.5px;background:#d9ebd5"></i></div><div class="t" style="left:7px;top:4.5px;font-size:5.8px;color:#9ccfd8;-webkit-text-stroke:0.15px #9ccfd8">Version #1 - Response sheet</div><div class="t" style="left:7px;top:11.5px;font-size:5.8px;color:#9ccfd8;-webkit-text-stroke:0.15px #9ccfd8">separate from data slides</div><div class="a" style="left:3px;top:21px;width:63px;height:51px;background:#fff"></div><div class="a" style="left:5.0px;top:23.0px;width:40.0px;height:1.4px;background:#666;opacity:0.6"></div><div class="a" style="left:5.0px;top:26.0px;width:55.0px;height:1.0px;background:#999;opacity:0.5"></div><div class="a" style="left:5.0px;top:29.0px;width:55.0px;height:1.0px;background:#999;opacity:0.5"></div><div class="a" style="left:5.0px;top:32.0px;width:45.0px;height:1.0px;background:#999;opacity:0.5"></div><div class="a" style="left:5.0px;top:35.0px;width:58.0px;height:1.0px;background:#999;opacity:0.5"></div><div class="a" style="left:5.0px;top:38.0px;width:50.0px;height:1.0px;background:#999;opacity:0.5"></div><div class="a" style="left:11px;top:44px;width:55px;height:27px;background:#c3d6ea"></div><div class="a" style="left:3.0px;top:44.0px;width:63.0px;height:0.8px;background:#8aa;opacity:0.6"></div><div class="a" style="left:20.0px;top:44.0px;width:0.6px;height:27.0px;background:#8aa;opacity:0.6"></div><div class="a" style="left:36.0px;top:44.0px;width:0.6px;height:27.0px;background:#8aa;opacity:0.6"></div><div class="a" style="left:52.0px;top:44.0px;width:0.6px;height:27.0px;background:#8aa;opacity:0.6"></div><div class="a" style="left:69px;top:21px;width:79px;height:52px;background:#fff"></div><div class="a" style="left:71px;top:22px;width:24px;height:14px;background:#0a4466"></div><div class="a" style="left:98px;top:22px;width:24px;height:14px;background:#0a4466"></div><div class="a" style="left:125px;top:22px;width:23px;height:14px;background:#0a4466"></div><div class="a" style="left:129.0px;top:25.0px;width:19.0px;height:2.0px;background:#f0c040;opacity:0.9"></div><div class="a" style="left:129.0px;top:29.0px;width:19.0px;height:2.0px;background:#f0c040;opacity:0.9"></div><div class="a" style="left:71px;top:39px;width:24px;height:16px;background:#fff"></div><div class="a" style="left:73.0px;top:42.0px;width:17.0px;height:9.0px;background:#9cc8e8;opacity:0.9"></div><div class="a" style="left:98px;top:39px;width:24px;height:16px;background:#0a4466"></div><div class="a" style="left:105.0px;top:41.0px;width:16.0px;height:11.0px;background:#fff;opacity:1"></div><div class="a" style="left:125px;top:39px;width:23px;height:16px;background:#fff"></div><div class="a" style="left:132.0px;top:43.0px;width:4.0px;height:4.0px;background:#e8a0a0;opacity:0.8"></div><div class="a" style="left:139.0px;top:43.0px;width:4.0px;height:4.0px;background:#e8a0a0;opacity:0.8"></div><div class="a" style="left:71px;top:58px;width:24px;height:14px;background:#0a4466"></div><div class="a" style="left:82.0px;top:59.0px;width:12.0px;height:13.0px;background:#f5f0e8;opacity:1"></div><div class="a" style="left:98px;top:58px;width:24px;height:14px;background:#fff"></div><div class="a" style="left:99.0px;top:60.0px;width:10.0px;height:10.0px;background:#c9b890;opacity:0.9"></div><div class="a" style="left:110.0px;top:60.0px;width:11.0px;height:10.0px;background:#a8d8b0;opacity:0.9"></div><div class="a" style="left:125px;top:58px;width:23px;height:14px;background:#f8f4f4"></div></div><div class="thumb" style="top:427px"><div class="a" style="left:0;top:0;width:892px;height:502px;transform:scale(0.1659);transform-origin:0 0;"><i style="left:663.9px;top:3.0px;background:#0a6288"></i><i style="left:692.5px;top:3.0px;background:#0a6288"></i><i style="left:706.7px;top:3.0px;background:#074a6c"></i><i style="left:721.0px;top:3.0px;background:#0a6288"></i><i style="left:735.3px;top:3.0px;background:#0a6288"></i><i style="left:749.5px;top:3.0px;background:#0a6288"></i><i style="left:763.8px;top:3.0px;background:#1592ad"></i><i style="left:778.1px;top:3.0px;background:#1592ad"></i><i style="left:792.3px;top:3.0px;background:#88c3bb"></i><i style="left:806.6px;top:3.0px;background:#1592ad"></i><i style="left:820.9px;top:3.0px;background:#88c3bb"></i><i style="left:835.1px;top:3.0px;background:#88c3bb"></i><i style="left:849.4px;top:3.0px;background:#d9ebd5"></i><i style="left:863.7px;top:3.0px;background:#d9ebd5"></i><i style="left:878.0px;top:3.0px;background:#d9ebd5"></i><i style="left:635.4px;top:17.2px;background:#0a6288"></i><i style="left:649.6px;top:17.2px;background:#0a6288"></i><i style="left:678.2px;top:17.2px;background:#0a6288"></i><i style="left:692.5px;top:17.2px;background:#0a6288"></i><i style="left:706.7px;top:17.2px;background:#88c3bb"></i><i style="left:721.0px;top:17.2px;background:#074a6c"></i><i style="left:735.3px;top:17.2px;background:#0a6288"></i><i style="left:749.5px;top:17.2px;background:#0a6288"></i><i style="left:763.8px;top:17.2px;background:#0a6288"></i><i style="left:778.1px;top:17.2px;background:#88c3bb"></i><i style="left:792.3px;top:17.2px;background:#0a6288"></i><i style="left:806.6px;top:17.2px;background:#88c3bb"></i><i style="left:820.9px;top:17.2px;background:#88c3bb"></i><i style="left:835.1px;top:17.2px;background:#1592ad"></i><i style="left:849.4px;top:17.2px;background:#d9ebd5"></i><i style="left:863.7px;top:17.2px;background:#88c3bb"></i><i style="left:878.0px;top:17.2px;background:#d9ebd5"></i><i style="left:663.9px;top:31.5px;background:#1592ad"></i><i style="left:678.2px;top:31.5px;background:#0a6288"></i><i style="left:692.5px;top:31.5px;background:#074a6c"></i><i style="left:706.7px;top:31.5px;background:#0a6288"></i><i style="left:721.0px;top:31.5px;background:#0a6288"></i><i style="left:735.3px;top:31.5px;background:#0a6288"></i><i style="left:749.5px;top:31.5px;background:#88c3bb"></i><i style="left:763.8px;top:31.5px;background:#0a6288"></i><i style="left:778.1px;top:31.5px;background:#1592ad"></i><i style="left:792.3px;top:31.5px;background:#1592ad"></i><i style="left:806.6px;top:31.5px;background:#0a6288"></i><i style="left:820.9px;top:31.5px;background:#88c3bb"></i><i style="left:835.1px;top:31.5px;background:#1592ad"></i><i style="left:849.4px;top:31.5px;background:#d9ebd5"></i><i style="left:863.7px;top:31.5px;background:#d9ebd5"></i><i style="left:878.0px;top:31.5px;background:#d9ebd5"></i><i style="left:621.1px;top:45.8px;background:#1592ad"></i><i style="left:692.5px;top:45.8px;background:#0a6288"></i><i style="left:706.7px;top:45.8px;background:#0a6288"></i><i style="left:721.0px;top:45.8px;background:#1592ad"></i><i style="left:735.3px;top:45.8px;background:#0a6288"></i><i style="left:749.5px;top:45.8px;background:#1592ad"></i><i style="left:763.8px;top:45.8px;background:#0a6288"></i><i style="left:778.1px;top:45.8px;background:#0a6288"></i><i style="left:792.3px;top:45.8px;background:#88c3bb"></i><i style="left:806.6px;top:45.8px;background:#88c3bb"></i><i style="left:820.9px;top:45.8px;background:#88c3bb"></i><i style="left:835.1px;top:45.8px;background:#88c3bb"></i><i style="left:849.4px;top:45.8px;background:#88c3bb"></i><i style="left:863.7px;top:45.8px;background:#d9ebd5"></i><i style="left:878.0px;top:45.8px;background:#d9ebd5"></i><i style="left:678.2px;top:60.0px;background:#0a6288"></i><i style="left:706.7px;top:60.0px;background:#074a6c"></i><i style="left:721.0px;top:60.0px;background:#0a6288"></i><i style="left:735.3px;top:60.0px;background:#88c3bb"></i><i style="left:749.5px;top:60.0px;background:#0a6288"></i><i style="left:763.8px;top:60.0px;background:#1592ad"></i><i style="left:778.1px;top:60.0px;background:#0a6288"></i><i style="left:792.3px;top:60.0px;background:#1592ad"></i><i style="left:806.6px;top:60.0px;background:#0a6288"></i><i style="left:820.9px;top:60.0px;background:#88c3bb"></i><i style="left:835.1px;top:60.0px;background:#1592ad"></i><i style="left:849.4px;top:60.0px;background:#d9ebd5"></i><i style="left:863.7px;top:60.0px;background:#88c3bb"></i><i style="left:878.0px;top:60.0px;background:#d9ebd5"></i><i style="left:649.6px;top:74.2px;background:#0a6288"></i><i style="left:692.5px;top:74.2px;background:#074a6c"></i><i style="left:706.7px;top:74.2px;background:#0a6288"></i><i style="left:721.0px;top:74.2px;background:#0a6288"></i><i style="left:735.3px;top:74.2px;background:#0a6288"></i><i style="left:749.5px;top:74.2px;background:#0a6288"></i><i style="left:763.8px;top:74.2px;background:#1592ad"></i><i style="left:778.1px;top:74.2px;background:#88c3bb"></i><i style="left:792.3px;top:74.2px;background:#1592ad"></i><i style="left:806.6px;top:74.2px;background:#88c3bb"></i><i style="left:820.9px;top:74.2px;background:#88c3bb"></i><i style="left:835.1px;top:74.2px;background:#88c3bb"></i><i style="left:849.4px;top:74.2px;background:#d9ebd5"></i><i style="left:863.7px;top:74.2px;background:#d9ebd5"></i><i style="left:878.0px;top:74.2px;background:#d9ebd5"></i><i style="left:635.4px;top:88.5px;background:#0a6288"></i><i style="left:649.6px;top:88.5px;background:#0a6288"></i><i style="left:663.9px;top:88.5px;background:#0a6288"></i><i style="left:706.7px;top:88.5px;background:#0a6288"></i><i style="left:721.0px;top:88.5px;background:#074a6c"></i><i style="left:735.3px;top:88.5px;background:#0a6288"></i><i style="left:749.5px;top:88.5px;background:#0a6288"></i><i style="left:763.8px;top:88.5px;background:#0a6288"></i><i style="left:778.1px;top:88.5px;background:#0a6288"></i><i style="left:792.3px;top:88.5px;background:#1592ad"></i><i style="left:806.6px;top:88.5px;background:#88c3bb"></i><i style="left:820.9px;top:88.5px;background:#88c3bb"></i><i style="left:835.1px;top:88.5px;background:#1592ad"></i><i style="left:849.4px;top:88.5px;background:#88c3bb"></i><i style="left:863.7px;top:88.5px;background:#d9ebd5"></i><i style="left:878.0px;top:88.5px;background:#d9ebd5"></i><i style="left:663.9px;top:102.8px;background:#0a6288"></i><i style="left:678.2px;top:102.8px;background:#0a6288"></i><i style="left:692.5px;top:102.8px;background:#1592ad"></i><i style="left:706.7px;top:102.8px;background:#0a6288"></i><i style="left:721.0px;top:102.8px;background:#0a6288"></i><i style="left:735.3px;top:102.8px;background:#0a6288"></i><i style="left:749.5px;top:102.8px;background:#1592ad"></i><i style="left:763.8px;top:102.8px;background:#0a6288"></i><i style="left:778.1px;top:102.8px;background:#0a6288"></i><i style="left:792.3px;top:102.8px;background:#0a6288"></i><i style="left:806.6px;top:102.8px;background:#88c3bb"></i><i style="left:820.9px;top:102.8px;background:#88c3bb"></i><i style="left:835.1px;top:102.8px;background:#88c3bb"></i><i style="left:849.4px;top:102.8px;background:#88c3bb"></i><i style="left:863.7px;top:102.8px;background:#d9ebd5"></i><i style="left:878.0px;top:102.8px;background:#d9ebd5"></i><i style="left:678.2px;top:117.0px;background:#0a6288"></i><i style="left:692.5px;top:117.0px;background:#0a6288"></i><i style="left:706.7px;top:117.0px;background:#0a6288"></i><i style="left:721.0px;top:117.0px;background:#0a6288"></i><i style="left:735.3px;top:117.0px;background:#0a6288"></i><i style="left:749.5px;top:117.0px;background:#0a6288"></i><i style="left:763.8px;top:117.0px;background:#1592ad"></i><i style="left:778.1px;top:117.0px;background:#0a6288"></i><i style="left:792.3px;top:117.0px;background:#88c3bb"></i><i style="left:806.6px;top:117.0px;background:#88c3bb"></i><i style="left:820.9px;top:117.0px;background:#1592ad"></i><i style="left:835.1px;top:117.0px;background:#88c3bb"></i><i style="left:849.4px;top:117.0px;background:#d9ebd5"></i><i style="left:863.7px;top:117.0px;background:#d9ebd5"></i><i style="left:878.0px;top:117.0px;background:#d9ebd5"></i><i style="left:678.2px;top:131.2px;background:#074a6c"></i><i style="left:692.5px;top:131.2px;background:#074a6c"></i><i style="left:706.7px;top:131.2px;background:#0a6288"></i><i style="left:721.0px;top:131.2px;background:#0a6288"></i><i style="left:735.3px;top:131.2px;background:#1592ad"></i><i style="left:749.5px;top:131.2px;background:#0a6288"></i><i style="left:763.8px;top:131.2px;background:#0a6288"></i><i style="left:778.1px;top:131.2px;background:#0a6288"></i><i style="left:792.3px;top:131.2px;background:#1592ad"></i><i style="left:806.6px;top:131.2px;background:#0a6288"></i><i style="left:820.9px;top:131.2px;background:#88c3bb"></i><i style="left:835.1px;top:131.2px;background:#88c3bb"></i><i style="left:849.4px;top:131.2px;background:#d9ebd5"></i><i style="left:863.7px;top:131.2px;background:#88c3bb"></i><i style="left:878.0px;top:131.2px;background:#d9ebd5"></i><i style="left:635.4px;top:145.5px;background:#0a6288"></i><i style="left:678.2px;top:145.5px;background:#0a6288"></i><i style="left:692.5px;top:145.5px;background:#0a6288"></i><i style="left:706.7px;top:145.5px;background:#074a6c"></i><i style="left:721.0px;top:145.5px;background:#0a6288"></i><i style="left:735.3px;top:145.5px;background:#0a6288"></i><i style="left:749.5px;top:145.5px;background:#1592ad"></i><i style="left:763.8px;top:145.5px;background:#0a6288"></i><i style="left:778.1px;top:145.5px;background:#0a6288"></i><i style="left:792.3px;top:145.5px;background:#1592ad"></i><i style="left:806.6px;top:145.5px;background:#88c3bb"></i><i style="left:820.9px;top:145.5px;background:#88c3bb"></i><i style="left:835.1px;top:145.5px;background:#1592ad"></i><i style="left:849.4px;top:145.5px;background:#d9ebd5"></i><i style="left:863.7px;top:145.5px;background:#d9ebd5"></i><i style="left:878.0px;top:145.5px;background:#d9ebd5"></i><i style="left:649.6px;top:159.8px;background:#0a6288"></i><i style="left:678.2px;top:159.8px;background:#0a6288"></i><i style="left:692.5px;top:159.8px;background:#0a6288"></i><i style="left:706.7px;top:159.8px;background:#1592ad"></i><i style="left:721.0px;top:159.8px;background:#1592ad"></i><i style="left:735.3px;top:159.8px;background:#1592ad"></i><i style="left:749.5px;top:159.8px;background:#0a6288"></i><i style="left:763.8px;top:159.8px;background:#0a6288"></i><i style="left:778.1px;top:159.8px;background:#1592ad"></i><i style="left:792.3px;top:159.8px;background:#88c3bb"></i><i style="left:806.6px;top:159.8px;background:#88c3bb"></i><i style="left:820.9px;top:159.8px;background:#88c3bb"></i><i style="left:835.1px;top:159.8px;background:#1592ad"></i><i style="left:849.4px;top:159.8px;background:#d9ebd5"></i><i style="left:863.7px;top:159.8px;background:#d9ebd5"></i><i style="left:878.0px;top:159.8px;background:#d9ebd5"></i><i style="left:678.2px;top:174.0px;background:#0a6288"></i><i style="left:692.5px;top:174.0px;background:#0a6288"></i><i style="left:706.7px;top:174.0px;background:#0a6288"></i><i style="left:721.0px;top:174.0px;background:#0a6288"></i><i style="left:735.3px;top:174.0px;background:#0a6288"></i><i style="left:749.5px;top:174.0px;background:#0a6288"></i><i style="left:763.8px;top:174.0px;background:#0a6288"></i><i style="left:778.1px;top:174.0px;background:#1592ad"></i><i style="left:792.3px;top:174.0px;background:#0a6288"></i><i style="left:806.6px;top:174.0px;background:#1592ad"></i><i style="left:820.9px;top:174.0px;background:#88c3bb"></i><i style="left:835.1px;top:174.0px;background:#88c3bb"></i><i style="left:849.4px;top:174.0px;background:#88c3bb"></i><i style="left:863.7px;top:174.0px;background:#d9ebd5"></i><i style="left:878.0px;top:174.0px;background:#d9ebd5"></i><i style="left:706.7px;top:188.2px;background:#0a6288"></i><i style="left:721.0px;top:188.2px;background:#074a6c"></i><i style="left:735.3px;top:188.2px;background:#0a6288"></i><i style="left:749.5px;top:188.2px;background:#0a6288"></i><i style="left:763.8px;top:188.2px;background:#1592ad"></i><i style="left:778.1px;top:188.2px;background:#88c3bb"></i><i style="left:792.3px;top:188.2px;background:#0a6288"></i><i style="left:806.6px;top:188.2px;background:#88c3bb"></i><i style="left:820.9px;top:188.2px;background:#88c3bb"></i><i style="left:835.1px;top:188.2px;background:#88c3bb"></i><i style="left:849.4px;top:188.2px;background:#d9ebd5"></i><i style="left:863.7px;top:188.2px;background:#88c3bb"></i><i style="left:878.0px;top:188.2px;background:#d9ebd5"></i><i style="left:635.4px;top:202.5px;background:#0a6288"></i><i style="left:678.2px;top:202.5px;background:#0a6288"></i><i style="left:706.7px;top:202.5px;background:#1592ad"></i><i style="left:721.0px;top:202.5px;background:#0a6288"></i><i style="left:735.3px;top:202.5px;background:#0a6288"></i><i style="left:749.5px;top:202.5px;background:#0a6288"></i><i style="left:763.8px;top:202.5px;background:#0a6288"></i><i style="left:778.1px;top:202.5px;background:#1592ad"></i><i style="left:792.3px;top:202.5px;background:#1592ad"></i><i style="left:806.6px;top:202.5px;background:#88c3bb"></i><i style="left:820.9px;top:202.5px;background:#88c3bb"></i><i style="left:835.1px;top:202.5px;background:#88c3bb"></i><i style="left:849.4px;top:202.5px;background:#d9ebd5"></i><i style="left:863.7px;top:202.5px;background:#88c3bb"></i><i style="left:878.0px;top:202.5px;background:#d9ebd5"></i><i style="left:663.9px;top:216.8px;background:#0a6288"></i><i style="left:678.2px;top:216.8px;background:#0a6288"></i><i style="left:692.5px;top:216.8px;background:#0a6288"></i><i style="left:706.7px;top:216.8px;background:#0a6288"></i><i style="left:721.0px;top:216.8px;background:#0a6288"></i><i style="left:735.3px;top:216.8px;background:#0a6288"></i><i style="left:749.5px;top:216.8px;background:#0a6288"></i><i style="left:763.8px;top:216.8px;background:#0a6288"></i><i style="left:778.1px;top:216.8px;background:#0a6288"></i><i style="left:792.3px;top:216.8px;background:#1592ad"></i><i style="left:806.6px;top:216.8px;background:#1592ad"></i><i style="left:820.9px;top:216.8px;background:#88c3bb"></i><i style="left:835.1px;top:216.8px;background:#88c3bb"></i><i style="left:849.4px;top:216.8px;background:#88c3bb"></i><i style="left:863.7px;top:216.8px;background:#d9ebd5"></i><i style="left:878.0px;top:216.8px;background:#d9ebd5"></i><i style="left:692.5px;top:231.0px;background:#0a6288"></i><i style="left:706.7px;top:231.0px;background:#074a6c"></i><i style="left:721.0px;top:231.0px;background:#0a6288"></i><i style="left:735.3px;top:231.0px;background:#0a6288"></i><i style="left:749.5px;top:231.0px;background:#1592ad"></i><i style="left:763.8px;top:231.0px;background:#0a6288"></i><i style="left:778.1px;top:231.0px;background:#0a6288"></i><i style="left:792.3px;top:231.0px;background:#1592ad"></i><i style="left:806.6px;top:231.0px;background:#88c3bb"></i><i style="left:820.9px;top:231.0px;background:#88c3bb"></i><i style="left:835.1px;top:231.0px;background:#1592ad"></i><i style="left:849.4px;top:231.0px;background:#d9ebd5"></i><i style="left:863.7px;top:231.0px;background:#d9ebd5"></i><i style="left:878.0px;top:231.0px;background:#d9ebd5"></i><i style="left:649.6px;top:245.2px;background:#0a6288"></i><i style="left:678.2px;top:245.2px;background:#0a6288"></i><i style="left:692.5px;top:245.2px;background:#0a6288"></i><i style="left:706.7px;top:245.2px;background:#0a6288"></i><i style="left:721.0px;top:245.2px;background:#0a6288"></i><i style="left:735.3px;top:245.2px;background:#0a6288"></i><i style="left:749.5px;top:245.2px;background:#0a6288"></i><i style="left:763.8px;top:245.2px;background:#88c3bb"></i><i style="left:778.1px;top:245.2px;background:#0a6288"></i><i style="left:792.3px;top:245.2px;background:#0a6288"></i><i style="left:806.6px;top:245.2px;background:#88c3bb"></i><i style="left:820.9px;top:245.2px;background:#1592ad"></i><i style="left:835.1px;top:245.2px;background:#88c3bb"></i><i style="left:849.4px;top:245.2px;background:#88c3bb"></i><i style="left:863.7px;top:245.2px;background:#d9ebd5"></i><i style="left:878.0px;top:245.2px;background:#d9ebd5"></i><i style="left:621.1px;top:259.5px;background:#0a6288"></i><i style="left:678.2px;top:259.5px;background:#1592ad"></i><i style="left:692.5px;top:259.5px;background:#0a6288"></i><i style="left:706.7px;top:259.5px;background:#88c3bb"></i><i style="left:721.0px;top:259.5px;background:#0a6288"></i><i style="left:735.3px;top:259.5px;background:#0a6288"></i><i style="left:749.5px;top:259.5px;background:#1592ad"></i><i style="left:763.8px;top:259.5px;background:#0a6288"></i><i style="left:778.1px;top:259.5px;background:#0a6288"></i><i style="left:792.3px;top:259.5px;background:#88c3bb"></i><i style="left:806.6px;top:259.5px;background:#0a6288"></i><i style="left:820.9px;top:259.5px;background:#88c3bb"></i><i style="left:835.1px;top:259.5px;background:#88c3bb"></i><i style="left:849.4px;top:259.5px;background:#d9ebd5"></i><i style="left:863.7px;top:259.5px;background:#88c3bb"></i><i style="left:878.0px;top:259.5px;background:#d9ebd5"></i><i style="left:635.4px;top:273.8px;background:#1592ad"></i><i style="left:692.5px;top:273.8px;background:#074a6c"></i><i style="left:706.7px;top:273.8px;background:#0a6288"></i><i style="left:721.0px;top:273.8px;background:#0a6288"></i><i style="left:735.3px;top:273.8px;background:#0a6288"></i><i style="left:749.5px;top:273.8px;background:#0a6288"></i><i style="left:763.8px;top:273.8px;background:#1592ad"></i><i style="left:778.1px;top:273.8px;background:#0a6288"></i><i style="left:792.3px;top:273.8px;background:#88c3bb"></i><i style="left:806.6px;top:273.8px;background:#88c3bb"></i><i style="left:820.9px;top:273.8px;background:#88c3bb"></i><i style="left:835.1px;top:273.8px;background:#1592ad"></i><i style="left:849.4px;top:273.8px;background:#d9ebd5"></i><i style="left:863.7px;top:273.8px;background:#d9ebd5"></i><i style="left:878.0px;top:273.8px;background:#d9ebd5"></i><i style="left:663.9px;top:288.0px;background:#0a6288"></i><i style="left:678.2px;top:288.0px;background:#0a6288"></i><i style="left:692.5px;top:288.0px;background:#0a6288"></i><i style="left:706.7px;top:288.0px;background:#1592ad"></i><i style="left:721.0px;top:288.0px;background:#0a6288"></i><i style="left:735.3px;top:288.0px;background:#0a6288"></i><i style="left:749.5px;top:288.0px;background:#0a6288"></i><i style="left:763.8px;top:288.0px;background:#1592ad"></i><i style="left:778.1px;top:288.0px;background:#0a6288"></i><i style="left:792.3px;top:288.0px;background:#1592ad"></i><i style="left:806.6px;top:288.0px;background:#1592ad"></i><i style="left:820.9px;top:288.0px;background:#1592ad"></i><i style="left:835.1px;top:288.0px;background:#88c3bb"></i><i style="left:849.4px;top:288.0px;background:#d9ebd5"></i><i style="left:863.7px;top:288.0px;background:#d9ebd5"></i><i style="left:878.0px;top:288.0px;background:#d9ebd5"></i><i style="left:692.5px;top:302.2px;background:#0a6288"></i><i style="left:706.7px;top:302.2px;background:#0a6288"></i><i style="left:721.0px;top:302.2px;background:#1592ad"></i><i style="left:735.3px;top:302.2px;background:#0a6288"></i><i style="left:749.5px;top:302.2px;background:#0a6288"></i><i style="left:763.8px;top:302.2px;background:#1592ad"></i><i style="left:778.1px;top:302.2px;background:#0a6288"></i><i style="left:792.3px;top:302.2px;background:#1592ad"></i><i style="left:806.6px;top:302.2px;background:#88c3bb"></i><i style="left:820.9px;top:302.2px;background:#88c3bb"></i><i style="left:835.1px;top:302.2px;background:#88c3bb"></i><i style="left:849.4px;top:302.2px;background:#d9ebd5"></i><i style="left:863.7px;top:302.2px;background:#d9ebd5"></i><i style="left:878.0px;top:302.2px;background:#d9ebd5"></i><i style="left:649.6px;top:316.5px;background:#0a6288"></i><i style="left:678.2px;top:316.5px;background:#0a6288"></i><i style="left:706.7px;top:316.5px;background:#0a6288"></i><i style="left:721.0px;top:316.5px;background:#0a6288"></i><i style="left:735.3px;top:316.5px;background:#1592ad"></i><i style="left:749.5px;top:316.5px;background:#0a6288"></i><i style="left:763.8px;top:316.5px;background:#0a6288"></i><i style="left:778.1px;top:316.5px;background:#0a6288"></i><i style="left:792.3px;top:316.5px;background:#1592ad"></i><i style="left:806.6px;top:316.5px;background:#1592ad"></i><i style="left:820.9px;top:316.5px;background:#88c3bb"></i><i style="left:835.1px;top:316.5px;background:#1592ad"></i><i style="left:849.4px;top:316.5px;background:#88c3bb"></i><i style="left:863.7px;top:316.5px;background:#88c3bb"></i><i style="left:878.0px;top:316.5px;background:#d9ebd5"></i><i style="left:706.7px;top:330.8px;background:#0a6288"></i><i style="left:721.0px;top:330.8px;background:#0a6288"></i><i style="left:735.3px;top:330.8px;background:#1592ad"></i><i style="left:749.5px;top:330.8px;background:#0a6288"></i><i style="left:763.8px;top:330.8px;background:#88c3bb"></i><i style="left:778.1px;top:330.8px;background:#0a6288"></i><i style="left:792.3px;top:330.8px;background:#88c3bb"></i><i style="left:806.6px;top:330.8px;background:#1592ad"></i><i style="left:820.9px;top:330.8px;background:#88c3bb"></i><i style="left:835.1px;top:330.8px;background:#1592ad"></i><i style="left:849.4px;top:330.8px;background:#88c3bb"></i><i style="left:863.7px;top:330.8px;background:#d9ebd5"></i><i style="left:878.0px;top:330.8px;background:#d9ebd5"></i><i style="left:663.9px;top:345.0px;background:#0a6288"></i><i style="left:706.7px;top:345.0px;background:#074a6c"></i><i style="left:721.0px;top:345.0px;background:#0a6288"></i><i style="left:735.3px;top:345.0px;background:#0a6288"></i><i style="left:749.5px;top:345.0px;background:#0a6288"></i><i style="left:763.8px;top:345.0px;background:#0a6288"></i><i style="left:778.1px;top:345.0px;background:#0a6288"></i><i style="left:792.3px;top:345.0px;background:#1592ad"></i><i style="left:806.6px;top:345.0px;background:#88c3bb"></i><i style="left:820.9px;top:345.0px;background:#88c3bb"></i><i style="left:835.1px;top:345.0px;background:#1592ad"></i><i style="left:849.4px;top:345.0px;background:#88c3bb"></i><i style="left:863.7px;top:345.0px;background:#d9ebd5"></i><i style="left:878.0px;top:345.0px;background:#d9ebd5"></i><i style="left:621.1px;top:359.2px;background:#0a6288"></i><i style="left:678.2px;top:359.2px;background:#0a6288"></i><i style="left:692.5px;top:359.2px;background:#0a6288"></i><i style="left:706.7px;top:359.2px;background:#0a6288"></i><i style="left:721.0px;top:359.2px;background:#074a6c"></i><i style="left:735.3px;top:359.2px;background:#0a6288"></i><i style="left:749.5px;top:359.2px;background:#0a6288"></i><i style="left:763.8px;top:359.2px;background:#1592ad"></i><i style="left:778.1px;top:359.2px;background:#1592ad"></i><i style="left:792.3px;top:359.2px;background:#1592ad"></i><i style="left:806.6px;top:359.2px;background:#0a6288"></i><i style="left:820.9px;top:359.2px;background:#88c3bb"></i><i style="left:835.1px;top:359.2px;background:#88c3bb"></i><i style="left:849.4px;top:359.2px;background:#d9ebd5"></i><i style="left:863.7px;top:359.2px;background:#88c3bb"></i><i style="left:878.0px;top:359.2px;background:#d9ebd5"></i><i style="left:678.2px;top:373.5px;background:#1592ad"></i><i style="left:692.5px;top:373.5px;background:#0a6288"></i><i style="left:706.7px;top:373.5px;background:#074a6c"></i><i style="left:721.0px;top:373.5px;background:#0a6288"></i><i style="left:735.3px;top:373.5px;background:#0a6288"></i><i style="left:749.5px;top:373.5px;background:#1592ad"></i><i style="left:763.8px;top:373.5px;background:#0a6288"></i><i style="left:778.1px;top:373.5px;background:#0a6288"></i><i style="left:792.3px;top:373.5px;background:#88c3bb"></i><i style="left:806.6px;top:373.5px;background:#88c3bb"></i><i style="left:820.9px;top:373.5px;background:#88c3bb"></i><i style="left:835.1px;top:373.5px;background:#88c3bb"></i><i style="left:849.4px;top:373.5px;background:#d9ebd5"></i><i style="left:863.7px;top:373.5px;background:#88c3bb"></i><i style="left:878.0px;top:373.5px;background:#d9ebd5"></i><i style="left:635.4px;top:387.8px;background:#0a6288"></i><i style="left:649.6px;top:387.8px;background:#0a6288"></i><i style="left:678.2px;top:387.8px;background:#0a6288"></i><i style="left:706.7px;top:387.8px;background:#0a6288"></i><i style="left:721.0px;top:387.8px;background:#1592ad"></i><i style="left:735.3px;top:387.8px;background:#0a6288"></i><i style="left:749.5px;top:387.8px;background:#0a6288"></i><i style="left:763.8px;top:387.8px;background:#0a6288"></i><i style="left:778.1px;top:387.8px;background:#1592ad"></i><i style="left:792.3px;top:387.8px;background:#0a6288"></i><i style="left:806.6px;top:387.8px;background:#0a6288"></i><i style="left:820.9px;top:387.8px;background:#88c3bb"></i><i style="left:835.1px;top:387.8px;background:#1592ad"></i><i style="left:849.4px;top:387.8px;background:#88c3bb"></i><i style="left:863.7px;top:387.8px;background:#d9ebd5"></i><i style="left:878.0px;top:387.8px;background:#d9ebd5"></i><i style="left:663.9px;top:402.0px;background:#0a6288"></i><i style="left:706.7px;top:402.0px;background:#0a6288"></i><i style="left:721.0px;top:402.0px;background:#0a6288"></i><i style="left:735.3px;top:402.0px;background:#1592ad"></i><i style="left:749.5px;top:402.0px;background:#0a6288"></i><i style="left:763.8px;top:402.0px;background:#0a6288"></i><i style="left:778.1px;top:402.0px;background:#1592ad"></i><i style="left:792.3px;top:402.0px;background:#88c3bb"></i><i style="left:806.6px;top:402.0px;background:#1592ad"></i><i style="left:820.9px;top:402.0px;background:#88c3bb"></i><i style="left:835.1px;top:402.0px;background:#88c3bb"></i><i style="left:849.4px;top:402.0px;background:#d9ebd5"></i><i style="left:863.7px;top:402.0px;background:#d9ebd5"></i><i style="left:878.0px;top:402.0px;background:#d9ebd5"></i><i style="left:649.6px;top:416.2px;background:#d9ebd5"></i><i style="left:692.5px;top:416.2px;background:#0a6288"></i><i style="left:706.7px;top:416.2px;background:#0a6288"></i><i style="left:721.0px;top:416.2px;background:#0a6288"></i><i style="left:735.3px;top:416.2px;background:#1592ad"></i><i style="left:749.5px;top:416.2px;background:#0a6288"></i><i style="left:763.8px;top:416.2px;background:#1592ad"></i><i style="left:778.1px;top:416.2px;background:#0a6288"></i><i style="left:792.3px;top:416.2px;background:#88c3bb"></i><i style="left:806.6px;top:416.2px;background:#1592ad"></i><i style="left:820.9px;top:416.2px;background:#88c3bb"></i><i style="left:835.1px;top:416.2px;background:#88c3bb"></i><i style="left:849.4px;top:416.2px;background:#d9ebd5"></i><i style="left:863.7px;top:416.2px;background:#d9ebd5"></i><i style="left:878.0px;top:416.2px;background:#d9ebd5"></i><i style="left:678.2px;top:430.5px;background:#0a6288"></i><i style="left:706.7px;top:430.5px;background:#0a6288"></i><i style="left:721.0px;top:430.5px;background:#0a6288"></i><i style="left:735.3px;top:430.5px;background:#0a6288"></i><i style="left:749.5px;top:430.5px;background:#1592ad"></i><i style="left:763.8px;top:430.5px;background:#0a6288"></i><i style="left:778.1px;top:430.5px;background:#0a6288"></i><i style="left:792.3px;top:430.5px;background:#1592ad"></i><i style="left:806.6px;top:430.5px;background:#88c3bb"></i><i style="left:820.9px;top:430.5px;background:#88c3bb"></i><i style="left:835.1px;top:430.5px;background:#88c3bb"></i><i style="left:849.4px;top:430.5px;background:#d9ebd5"></i><i style="left:863.7px;top:430.5px;background:#88c3bb"></i><i style="left:878.0px;top:430.5px;background:#d9ebd5"></i><i style="left:621.1px;top:444.8px;background:#0a6288"></i><i style="left:692.5px;top:444.8px;background:#0a6288"></i><i style="left:706.7px;top:444.8px;background:#074a6c"></i><i style="left:721.0px;top:444.8px;background:#0a6288"></i><i style="left:735.3px;top:444.8px;background:#0a6288"></i><i style="left:749.5px;top:444.8px;background:#0a6288"></i><i style="left:763.8px;top:444.8px;background:#1592ad"></i><i style="left:778.1px;top:444.8px;background:#0a6288"></i><i style="left:792.3px;top:444.8px;background:#1592ad"></i><i style="left:806.6px;top:444.8px;background:#88c3bb"></i><i style="left:820.9px;top:444.8px;background:#88c3bb"></i><i style="left:835.1px;top:444.8px;background:#1592ad"></i><i style="left:849.4px;top:444.8px;background:#d9ebd5"></i><i style="left:863.7px;top:444.8px;background:#d9ebd5"></i><i style="left:878.0px;top:444.8px;background:#d9ebd5"></i><i style="left:663.9px;top:459.0px;background:#0a6288"></i><i style="left:706.7px;top:459.0px;background:#0a6288"></i><i style="left:721.0px;top:459.0px;background:#0a6288"></i><i style="left:735.3px;top:459.0px;background:#1592ad"></i><i style="left:749.5px;top:459.0px;background:#0a6288"></i><i style="left:763.8px;top:459.0px;background:#0a6288"></i><i style="left:778.1px;top:459.0px;background:#1592ad"></i><i style="left:792.3px;top:459.0px;background:#0a6288"></i><i style="left:806.6px;top:459.0px;background:#1592ad"></i><i style="left:820.9px;top:459.0px;background:#88c3bb"></i><i style="left:835.1px;top:459.0px;background:#88c3bb"></i><i style="left:849.4px;top:459.0px;background:#88c3bb"></i><i style="left:863.7px;top:459.0px;background:#d9ebd5"></i><i style="left:878.0px;top:459.0px;background:#d9ebd5"></i><i style="left:649.6px;top:473.2px;background:#074a6c"></i><i style="left:678.2px;top:473.2px;background:#0a6288"></i><i style="left:706.7px;top:473.2px;background:#0a6288"></i><i style="left:721.0px;top:473.2px;background:#0a6288"></i><i style="left:735.3px;top:473.2px;background:#0a6288"></i><i style="left:749.5px;top:473.2px;background:#0a6288"></i><i style="left:763.8px;top:473.2px;background:#1592ad"></i><i style="left:778.1px;top:473.2px;background:#0a6288"></i><i style="left:792.3px;top:473.2px;background:#88c3bb"></i><i style="left:806.6px;top:473.2px;background:#88c3bb"></i><i style="left:820.9px;top:473.2px;background:#88c3bb"></i><i style="left:835.1px;top:473.2px;background:#1592ad"></i><i style="left:849.4px;top:473.2px;background:#d9ebd5"></i><i style="left:863.7px;top:473.2px;background:#d9ebd5"></i><i style="left:878.0px;top:473.2px;background:#d9ebd5"></i><i style="left:635.4px;top:487.5px;background:#0a6288"></i><i style="left:692.5px;top:487.5px;background:#0a6288"></i><i style="left:706.7px;top:487.5px;background:#0a6288"></i><i style="left:721.0px;top:487.5px;background:#1592ad"></i><i style="left:735.3px;top:487.5px;background:#0a6288"></i><i style="left:749.5px;top:487.5px;background:#0a6288"></i><i style="left:763.8px;top:487.5px;background:#0a6288"></i><i style="left:778.1px;top:487.5px;background:#1592ad"></i><i style="left:792.3px;top:487.5px;background:#1592ad"></i><i style="left:806.6px;top:487.5px;background:#88c3bb"></i><i style="left:820.9px;top:487.5px;background:#88c3bb"></i><i style="left:835.1px;top:487.5px;background:#88c3bb"></i><i style="left:849.4px;top:487.5px;background:#d9ebd5"></i><i style="left:863.7px;top:487.5px;background:#88c3bb"></i><i style="left:878.0px;top:487.5px;background:#d9ebd5"></i></div><div class="t" style="left:8.6px;top:9px;font-size:5.2px;color:#6f9cae;transform:scaleX(0.9);transform-origin:0 0">In this activity we are trying to find the</div><div class="t" style="left:8.6px;top:16.8px;font-size:5.2px;color:#6f9cae;text-decoration:underline;transform:scaleX(0.9);transform-origin:0 0">answer to the following questions:</div><div class="t" style="left:8.6px;top:31.2px;font-size:5.2px;color:#dce6ea;transform:scaleX(0.9);transform-origin:0 0">How is structure of the body related to</div><div class="t" style="left:8.6px;top:39px;font-size:5.2px;color:#dce6ea;transform:scaleX(0.9);transform-origin:0 0">its function?</div><div class="t" style="left:8.6px;top:53.5px;font-size:5.2px;color:#dce6ea;transform:scaleX(0.9);transform-origin:0 0">How does the environment we live in</div><div class="t" style="left:8.6px;top:61.3px;font-size:5.2px;color:#dce6ea;transform:scaleX(0.9);transform-origin:0 0">change the way we look (our</div><div class="t" style="left:8.6px;top:69.2px;font-size:5.2px;color:#dce6ea;transform:scaleX(0.9);transform-origin:0 0">phenotypes - Physical appearance)?</div></div><div class="thumb" style="top:529px"><div class="a" style="left:0;top:0;width:892px;height:502px;transform:scale(0.1659);transform-origin:0 0;"><i style="left:663.9px;top:3.0px;background:#0a6288"></i><i style="left:692.5px;top:3.0px;background:#0a6288"></i><i style="left:706.7px;top:3.0px;background:#074a6c"></i><i style="left:721.0px;top:3.0px;background:#0a6288"></i><i style="left:735.3px;top:3.0px;background:#0a6288"></i><i style="left:749.5px;top:3.0px;background:#0a6288"></i><i style="left:763.8px;top:3.0px;background:#1592ad"></i><i style="left:778.1px;top:3.0px;background:#1592ad"></i><i style="left:792.3px;top:3.0px;background:#88c3bb"></i><i style="left:806.6px;top:3.0px;background:#1592ad"></i><i style="left:820.9px;top:3.0px;background:#88c3bb"></i><i style="left:835.1px;top:3.0px;background:#88c3bb"></i><i style="left:849.4px;top:3.0px;background:#d9ebd5"></i><i style="left:863.7px;top:3.0px;background:#d9ebd5"></i><i style="left:878.0px;top:3.0px;background:#d9ebd5"></i><i style="left:635.4px;top:17.2px;background:#0a6288"></i><i style="left:649.6px;top:17.2px;background:#0a6288"></i><i style="left:678.2px;top:17.2px;background:#0a6288"></i><i style="left:692.5px;top:17.2px;background:#0a6288"></i><i style="left:706.7px;top:17.2px;background:#88c3bb"></i><i style="left:721.0px;top:17.2px;background:#074a6c"></i><i style="left:735.3px;top:17.2px;background:#0a6288"></i><i style="left:749.5px;top:17.2px;background:#0a6288"></i><i style="left:763.8px;top:17.2px;background:#0a6288"></i><i style="left:778.1px;top:17.2px;background:#88c3bb"></i><i style="left:792.3px;top:17.2px;background:#0a6288"></i><i style="left:806.6px;top:17.2px;background:#88c3bb"></i><i style="left:820.9px;top:17.2px;background:#88c3bb"></i><i style="left:835.1px;top:17.2px;background:#1592ad"></i><i style="left:849.4px;top:17.2px;background:#d9ebd5"></i><i style="left:863.7px;top:17.2px;background:#88c3bb"></i><i style="left:878.0px;top:17.2px;background:#d9ebd5"></i><i style="left:663.9px;top:31.5px;background:#1592ad"></i><i style="left:678.2px;top:31.5px;background:#0a6288"></i><i style="left:692.5px;top:31.5px;background:#074a6c"></i><i style="left:706.7px;top:31.5px;background:#0a6288"></i><i style="left:721.0px;top:31.5px;background:#0a6288"></i><i style="left:735.3px;top:31.5px;background:#0a6288"></i><i style="left:749.5px;top:31.5px;background:#88c3bb"></i><i style="left:763.8px;top:31.5px;background:#0a6288"></i><i style="left:778.1px;top:31.5px;background:#1592ad"></i><i style="left:792.3px;top:31.5px;background:#1592ad"></i><i style="left:806.6px;top:31.5px;background:#0a6288"></i><i style="left:820.9px;top:31.5px;background:#88c3bb"></i><i style="left:835.1px;top:31.5px;background:#1592ad"></i><i style="left:849.4px;top:31.5px;background:#d9ebd5"></i><i style="left:863.7px;top:31.5px;background:#d9ebd5"></i><i style="left:878.0px;top:31.5px;background:#d9ebd5"></i><i style="left:621.1px;top:45.8px;background:#1592ad"></i><i style="left:692.5px;top:45.8px;background:#0a6288"></i><i style="left:706.7px;top:45.8px;background:#0a6288"></i><i style="left:721.0px;top:45.8px;background:#1592ad"></i><i style="left:735.3px;top:45.8px;background:#0a6288"></i><i style="left:749.5px;top:45.8px;background:#1592ad"></i><i style="left:763.8px;top:45.8px;background:#0a6288"></i><i style="left:778.1px;top:45.8px;background:#0a6288"></i><i style="left:792.3px;top:45.8px;background:#88c3bb"></i><i style="left:806.6px;top:45.8px;background:#88c3bb"></i><i style="left:820.9px;top:45.8px;background:#88c3bb"></i><i style="left:835.1px;top:45.8px;background:#88c3bb"></i><i style="left:849.4px;top:45.8px;background:#88c3bb"></i><i style="left:863.7px;top:45.8px;background:#d9ebd5"></i><i style="left:878.0px;top:45.8px;background:#d9ebd5"></i><i style="left:678.2px;top:60.0px;background:#0a6288"></i><i style="left:706.7px;top:60.0px;background:#074a6c"></i><i style="left:721.0px;top:60.0px;background:#0a6288"></i><i style="left:735.3px;top:60.0px;background:#88c3bb"></i><i style="left:749.5px;top:60.0px;background:#0a6288"></i><i style="left:763.8px;top:60.0px;background:#1592ad"></i><i style="left:778.1px;top:60.0px;background:#0a6288"></i><i style="left:792.3px;top:60.0px;background:#1592ad"></i><i style="left:806.6px;top:60.0px;background:#0a6288"></i><i style="left:820.9px;top:60.0px;background:#88c3bb"></i><i style="left:835.1px;top:60.0px;background:#1592ad"></i><i style="left:849.4px;top:60.0px;background:#d9ebd5"></i><i style="left:863.7px;top:60.0px;background:#88c3bb"></i><i style="left:878.0px;top:60.0px;background:#d9ebd5"></i><i style="left:649.6px;top:74.2px;background:#0a6288"></i><i style="left:692.5px;top:74.2px;background:#074a6c"></i><i style="left:706.7px;top:74.2px;background:#0a6288"></i><i style="left:721.0px;top:74.2px;background:#0a6288"></i><i style="left:735.3px;top:74.2px;background:#0a6288"></i><i style="left:749.5px;top:74.2px;background:#0a6288"></i><i style="left:763.8px;top:74.2px;background:#1592ad"></i><i style="left:778.1px;top:74.2px;background:#88c3bb"></i><i style="left:792.3px;top:74.2px;background:#1592ad"></i><i style="left:806.6px;top:74.2px;background:#88c3bb"></i><i style="left:820.9px;top:74.2px;background:#88c3bb"></i><i style="left:835.1px;top:74.2px;background:#88c3bb"></i><i style="left:849.4px;top:74.2px;background:#d9ebd5"></i><i style="left:863.7px;top:74.2px;background:#d9ebd5"></i><i style="left:878.0px;top:74.2px;background:#d9ebd5"></i><i style="left:635.4px;top:88.5px;background:#0a6288"></i><i style="left:649.6px;top:88.5px;background:#0a6288"></i><i style="left:663.9px;top:88.5px;background:#0a6288"></i><i style="left:706.7px;top:88.5px;background:#0a6288"></i><i style="left:721.0px;top:88.5px;background:#074a6c"></i><i style="left:735.3px;top:88.5px;background:#0a6288"></i><i style="left:749.5px;top:88.5px;background:#0a6288"></i><i style="left:763.8px;top:88.5px;background:#0a6288"></i><i style="left:778.1px;top:88.5px;background:#0a6288"></i><i style="left:792.3px;top:88.5px;background:#1592ad"></i><i style="left:806.6px;top:88.5px;background:#88c3bb"></i><i style="left:820.9px;top:88.5px;background:#88c3bb"></i><i style="left:835.1px;top:88.5px;background:#1592ad"></i><i style="left:849.4px;top:88.5px;background:#88c3bb"></i><i style="left:863.7px;top:88.5px;background:#d9ebd5"></i><i style="left:878.0px;top:88.5px;background:#d9ebd5"></i><i style="left:663.9px;top:102.8px;background:#0a6288"></i><i style="left:678.2px;top:102.8px;background:#0a6288"></i><i style="left:692.5px;top:102.8px;background:#1592ad"></i><i style="left:706.7px;top:102.8px;background:#0a6288"></i><i style="left:721.0px;top:102.8px;background:#0a6288"></i><i style="left:735.3px;top:102.8px;background:#0a6288"></i><i style="left:749.5px;top:102.8px;background:#1592ad"></i><i style="left:763.8px;top:102.8px;background:#0a6288"></i><i style="left:778.1px;top:102.8px;background:#0a6288"></i><i style="left:792.3px;top:102.8px;background:#0a6288"></i><i style="left:806.6px;top:102.8px;background:#88c3bb"></i><i style="left:820.9px;top:102.8px;background:#88c3bb"></i><i style="left:835.1px;top:102.8px;background:#88c3bb"></i><i style="left:849.4px;top:102.8px;background:#88c3bb"></i><i style="left:863.7px;top:102.8px;background:#d9ebd5"></i><i style="left:878.0px;top:102.8px;background:#d9ebd5"></i><i style="left:678.2px;top:117.0px;background:#0a6288"></i><i style="left:692.5px;top:117.0px;background:#0a6288"></i><i style="left:706.7px;top:117.0px;background:#0a6288"></i><i style="left:721.0px;top:117.0px;background:#0a6288"></i><i style="left:735.3px;top:117.0px;background:#0a6288"></i><i style="left:749.5px;top:117.0px;background:#0a6288"></i><i style="left:763.8px;top:117.0px;background:#1592ad"></i><i style="left:778.1px;top:117.0px;background:#0a6288"></i><i style="left:792.3px;top:117.0px;background:#88c3bb"></i><i style="left:806.6px;top:117.0px;background:#88c3bb"></i><i style="left:820.9px;top:117.0px;background:#1592ad"></i><i style="left:835.1px;top:117.0px;background:#88c3bb"></i><i style="left:849.4px;top:117.0px;background:#d9ebd5"></i><i style="left:863.7px;top:117.0px;background:#d9ebd5"></i><i style="left:878.0px;top:117.0px;background:#d9ebd5"></i><i style="left:678.2px;top:131.2px;background:#074a6c"></i><i style="left:692.5px;top:131.2px;background:#074a6c"></i><i style="left:706.7px;top:131.2px;background:#0a6288"></i><i style="left:721.0px;top:131.2px;background:#0a6288"></i><i style="left:735.3px;top:131.2px;background:#1592ad"></i><i style="left:749.5px;top:131.2px;background:#0a6288"></i><i style="left:763.8px;top:131.2px;background:#0a6288"></i><i style="left:778.1px;top:131.2px;background:#0a6288"></i><i style="left:792.3px;top:131.2px;background:#1592ad"></i><i style="left:806.6px;top:131.2px;background:#0a6288"></i><i style="left:820.9px;top:131.2px;background:#88c3bb"></i><i style="left:835.1px;top:131.2px;background:#88c3bb"></i><i style="left:849.4px;top:131.2px;background:#d9ebd5"></i><i style="left:863.7px;top:131.2px;background:#88c3bb"></i><i style="left:878.0px;top:131.2px;background:#d9ebd5"></i><i style="left:635.4px;top:145.5px;background:#0a6288"></i><i style="left:678.2px;top:145.5px;background:#0a6288"></i><i style="left:692.5px;top:145.5px;background:#0a6288"></i><i style="left:706.7px;top:145.5px;background:#074a6c"></i><i style="left:721.0px;top:145.5px;background:#0a6288"></i><i style="left:735.3px;top:145.5px;background:#0a6288"></i><i style="left:749.5px;top:145.5px;background:#1592ad"></i><i style="left:763.8px;top:145.5px;background:#0a6288"></i><i style="left:778.1px;top:145.5px;background:#0a6288"></i><i style="left:792.3px;top:145.5px;background:#1592ad"></i><i style="left:806.6px;top:145.5px;background:#88c3bb"></i><i style="left:820.9px;top:145.5px;background:#88c3bb"></i><i style="left:835.1px;top:145.5px;background:#1592ad"></i><i style="left:849.4px;top:145.5px;background:#d9ebd5"></i><i style="left:863.7px;top:145.5px;background:#d9ebd5"></i><i style="left:878.0px;top:145.5px;background:#d9ebd5"></i><i style="left:649.6px;top:159.8px;background:#0a6288"></i><i style="left:678.2px;top:159.8px;background:#0a6288"></i><i style="left:692.5px;top:159.8px;background:#0a6288"></i><i style="left:706.7px;top:159.8px;background:#1592ad"></i><i style="left:721.0px;top:159.8px;background:#1592ad"></i><i style="left:735.3px;top:159.8px;background:#1592ad"></i><i style="left:749.5px;top:159.8px;background:#0a6288"></i><i style="left:763.8px;top:159.8px;background:#0a6288"></i><i style="left:778.1px;top:159.8px;background:#1592ad"></i><i style="left:792.3px;top:159.8px;background:#88c3bb"></i><i style="left:806.6px;top:159.8px;background:#88c3bb"></i><i style="left:820.9px;top:159.8px;background:#88c3bb"></i><i style="left:835.1px;top:159.8px;background:#1592ad"></i><i style="left:849.4px;top:159.8px;background:#d9ebd5"></i><i style="left:863.7px;top:159.8px;background:#d9ebd5"></i><i style="left:878.0px;top:159.8px;background:#d9ebd5"></i><i style="left:678.2px;top:174.0px;background:#0a6288"></i><i style="left:692.5px;top:174.0px;background:#0a6288"></i><i style="left:706.7px;top:174.0px;background:#0a6288"></i><i style="left:721.0px;top:174.0px;background:#0a6288"></i><i style="left:735.3px;top:174.0px;background:#0a6288"></i><i style="left:749.5px;top:174.0px;background:#0a6288"></i><i style="left:763.8px;top:174.0px;background:#0a6288"></i><i style="left:778.1px;top:174.0px;background:#1592ad"></i><i style="left:792.3px;top:174.0px;background:#0a6288"></i><i style="left:806.6px;top:174.0px;background:#1592ad"></i><i style="left:820.9px;top:174.0px;background:#88c3bb"></i><i style="left:835.1px;top:174.0px;background:#88c3bb"></i><i style="left:849.4px;top:174.0px;background:#88c3bb"></i><i style="left:863.7px;top:174.0px;background:#d9ebd5"></i><i style="left:878.0px;top:174.0px;background:#d9ebd5"></i><i style="left:706.7px;top:188.2px;background:#0a6288"></i><i style="left:721.0px;top:188.2px;background:#074a6c"></i><i style="left:735.3px;top:188.2px;background:#0a6288"></i><i style="left:749.5px;top:188.2px;background:#0a6288"></i><i style="left:763.8px;top:188.2px;background:#1592ad"></i><i style="left:778.1px;top:188.2px;background:#88c3bb"></i><i style="left:792.3px;top:188.2px;background:#0a6288"></i><i style="left:806.6px;top:188.2px;background:#88c3bb"></i><i style="left:820.9px;top:188.2px;background:#88c3bb"></i><i style="left:835.1px;top:188.2px;background:#88c3bb"></i><i style="left:849.4px;top:188.2px;background:#d9ebd5"></i><i style="left:863.7px;top:188.2px;background:#88c3bb"></i><i style="left:878.0px;top:188.2px;background:#d9ebd5"></i><i style="left:635.4px;top:202.5px;background:#0a6288"></i><i style="left:678.2px;top:202.5px;background:#0a6288"></i><i style="left:706.7px;top:202.5px;background:#1592ad"></i><i style="left:721.0px;top:202.5px;background:#0a6288"></i><i style="left:735.3px;top:202.5px;background:#0a6288"></i><i style="left:749.5px;top:202.5px;background:#0a6288"></i><i style="left:763.8px;top:202.5px;background:#0a6288"></i><i style="left:778.1px;top:202.5px;background:#1592ad"></i><i style="left:792.3px;top:202.5px;background:#1592ad"></i><i style="left:806.6px;top:202.5px;background:#88c3bb"></i><i style="left:820.9px;top:202.5px;background:#88c3bb"></i><i style="left:835.1px;top:202.5px;background:#88c3bb"></i><i style="left:849.4px;top:202.5px;background:#d9ebd5"></i><i style="left:863.7px;top:202.5px;background:#88c3bb"></i><i style="left:878.0px;top:202.5px;background:#d9ebd5"></i><i style="left:663.9px;top:216.8px;background:#0a6288"></i><i style="left:678.2px;top:216.8px;background:#0a6288"></i><i style="left:692.5px;top:216.8px;background:#0a6288"></i><i style="left:706.7px;top:216.8px;background:#0a6288"></i><i style="left:721.0px;top:216.8px;background:#0a6288"></i><i style="left:735.3px;top:216.8px;background:#0a6288"></i><i style="left:749.5px;top:216.8px;background:#0a6288"></i><i style="left:763.8px;top:216.8px;background:#0a6288"></i><i style="left:778.1px;top:216.8px;background:#0a6288"></i><i style="left:792.3px;top:216.8px;background:#1592ad"></i><i style="left:806.6px;top:216.8px;background:#1592ad"></i><i style="left:820.9px;top:216.8px;background:#88c3bb"></i><i style="left:835.1px;top:216.8px;background:#88c3bb"></i><i style="left:849.4px;top:216.8px;background:#88c3bb"></i><i style="left:863.7px;top:216.8px;background:#d9ebd5"></i><i style="left:878.0px;top:216.8px;background:#d9ebd5"></i><i style="left:692.5px;top:231.0px;background:#0a6288"></i><i style="left:706.7px;top:231.0px;background:#074a6c"></i><i style="left:721.0px;top:231.0px;background:#0a6288"></i><i style="left:735.3px;top:231.0px;background:#0a6288"></i><i style="left:749.5px;top:231.0px;background:#1592ad"></i><i style="left:763.8px;top:231.0px;background:#0a6288"></i><i style="left:778.1px;top:231.0px;background:#0a6288"></i><i style="left:792.3px;top:231.0px;background:#1592ad"></i><i style="left:806.6px;top:231.0px;background:#88c3bb"></i><i style="left:820.9px;top:231.0px;background:#88c3bb"></i><i style="left:835.1px;top:231.0px;background:#1592ad"></i><i style="left:849.4px;top:231.0px;background:#d9ebd5"></i><i style="left:863.7px;top:231.0px;background:#d9ebd5"></i><i style="left:878.0px;top:231.0px;background:#d9ebd5"></i><i style="left:649.6px;top:245.2px;background:#0a6288"></i><i style="left:678.2px;top:245.2px;background:#0a6288"></i><i style="left:692.5px;top:245.2px;background:#0a6288"></i><i style="left:706.7px;top:245.2px;background:#0a6288"></i><i style="left:721.0px;top:245.2px;background:#0a6288"></i><i style="left:735.3px;top:245.2px;background:#0a6288"></i><i style="left:749.5px;top:245.2px;background:#0a6288"></i><i style="left:763.8px;top:245.2px;background:#88c3bb"></i><i style="left:778.1px;top:245.2px;background:#0a6288"></i><i style="left:792.3px;top:245.2px;background:#0a6288"></i><i style="left:806.6px;top:245.2px;background:#88c3bb"></i><i style="left:820.9px;top:245.2px;background:#1592ad"></i><i style="left:835.1px;top:245.2px;background:#88c3bb"></i><i style="left:849.4px;top:245.2px;background:#88c3bb"></i><i style="left:863.7px;top:245.2px;background:#d9ebd5"></i><i style="left:878.0px;top:245.2px;background:#d9ebd5"></i><i style="left:621.1px;top:259.5px;background:#0a6288"></i><i style="left:678.2px;top:259.5px;background:#1592ad"></i><i style="left:692.5px;top:259.5px;background:#0a6288"></i><i style="left:706.7px;top:259.5px;background:#88c3bb"></i><i style="left:721.0px;top:259.5px;background:#0a6288"></i><i style="left:735.3px;top:259.5px;background:#0a6288"></i><i style="left:749.5px;top:259.5px;background:#1592ad"></i><i style="left:763.8px;top:259.5px;background:#0a6288"></i><i style="left:778.1px;top:259.5px;background:#0a6288"></i><i style="left:792.3px;top:259.5px;background:#88c3bb"></i><i style="left:806.6px;top:259.5px;background:#0a6288"></i><i style="left:820.9px;top:259.5px;background:#88c3bb"></i><i style="left:835.1px;top:259.5px;background:#88c3bb"></i><i style="left:849.4px;top:259.5px;background:#d9ebd5"></i><i style="left:863.7px;top:259.5px;background:#88c3bb"></i><i style="left:878.0px;top:259.5px;background:#d9ebd5"></i><i style="left:635.4px;top:273.8px;background:#1592ad"></i><i style="left:692.5px;top:273.8px;background:#074a6c"></i><i style="left:706.7px;top:273.8px;background:#0a6288"></i><i style="left:721.0px;top:273.8px;background:#0a6288"></i><i style="left:735.3px;top:273.8px;background:#0a6288"></i><i style="left:749.5px;top:273.8px;background:#0a6288"></i><i style="left:763.8px;top:273.8px;background:#1592ad"></i><i style="left:778.1px;top:273.8px;background:#0a6288"></i><i style="left:792.3px;top:273.8px;background:#88c3bb"></i><i style="left:806.6px;top:273.8px;background:#88c3bb"></i><i style="left:820.9px;top:273.8px;background:#88c3bb"></i><i style="left:835.1px;top:273.8px;background:#1592ad"></i><i style="left:849.4px;top:273.8px;background:#d9ebd5"></i><i style="left:863.7px;top:273.8px;background:#d9ebd5"></i><i style="left:878.0px;top:273.8px;background:#d9ebd5"></i><i style="left:663.9px;top:288.0px;background:#0a6288"></i><i style="left:678.2px;top:288.0px;background:#0a6288"></i><i style="left:692.5px;top:288.0px;background:#0a6288"></i><i style="left:706.7px;top:288.0px;background:#1592ad"></i><i style="left:721.0px;top:288.0px;background:#0a6288"></i><i style="left:735.3px;top:288.0px;background:#0a6288"></i><i style="left:749.5px;top:288.0px;background:#0a6288"></i><i style="left:763.8px;top:288.0px;background:#1592ad"></i><i style="left:778.1px;top:288.0px;background:#0a6288"></i><i style="left:792.3px;top:288.0px;background:#1592ad"></i><i style="left:806.6px;top:288.0px;background:#1592ad"></i><i style="left:820.9px;top:288.0px;background:#1592ad"></i><i style="left:835.1px;top:288.0px;background:#88c3bb"></i><i style="left:849.4px;top:288.0px;background:#d9ebd5"></i><i style="left:863.7px;top:288.0px;background:#d9ebd5"></i><i style="left:878.0px;top:288.0px;background:#d9ebd5"></i><i style="left:692.5px;top:302.2px;background:#0a6288"></i><i style="left:706.7px;top:302.2px;background:#0a6288"></i><i style="left:721.0px;top:302.2px;background:#1592ad"></i><i style="left:735.3px;top:302.2px;background:#0a6288"></i><i style="left:749.5px;top:302.2px;background:#0a6288"></i><i style="left:763.8px;top:302.2px;background:#1592ad"></i><i style="left:778.1px;top:302.2px;background:#0a6288"></i><i style="left:792.3px;top:302.2px;background:#1592ad"></i><i style="left:806.6px;top:302.2px;background:#88c3bb"></i><i style="left:820.9px;top:302.2px;background:#88c3bb"></i><i style="left:835.1px;top:302.2px;background:#88c3bb"></i><i style="left:849.4px;top:302.2px;background:#d9ebd5"></i><i style="left:863.7px;top:302.2px;background:#d9ebd5"></i><i style="left:878.0px;top:302.2px;background:#d9ebd5"></i><i style="left:649.6px;top:316.5px;background:#0a6288"></i><i style="left:678.2px;top:316.5px;background:#0a6288"></i><i style="left:706.7px;top:316.5px;background:#0a6288"></i><i style="left:721.0px;top:316.5px;background:#0a6288"></i><i style="left:735.3px;top:316.5px;background:#1592ad"></i><i style="left:749.5px;top:316.5px;background:#0a6288"></i><i style="left:763.8px;top:316.5px;background:#0a6288"></i><i style="left:778.1px;top:316.5px;background:#0a6288"></i><i style="left:792.3px;top:316.5px;background:#1592ad"></i><i style="left:806.6px;top:316.5px;background:#1592ad"></i><i style="left:820.9px;top:316.5px;background:#88c3bb"></i><i style="left:835.1px;top:316.5px;background:#1592ad"></i><i style="left:849.4px;top:316.5px;background:#88c3bb"></i><i style="left:863.7px;top:316.5px;background:#88c3bb"></i><i style="left:878.0px;top:316.5px;background:#d9ebd5"></i><i style="left:706.7px;top:330.8px;background:#0a6288"></i><i style="left:721.0px;top:330.8px;background:#0a6288"></i><i style="left:735.3px;top:330.8px;background:#1592ad"></i><i style="left:749.5px;top:330.8px;background:#0a6288"></i><i style="left:763.8px;top:330.8px;background:#88c3bb"></i><i style="left:778.1px;top:330.8px;background:#0a6288"></i><i style="left:792.3px;top:330.8px;background:#88c3bb"></i><i style="left:806.6px;top:330.8px;background:#1592ad"></i><i style="left:820.9px;top:330.8px;background:#88c3bb"></i><i style="left:835.1px;top:330.8px;background:#1592ad"></i><i style="left:849.4px;top:330.8px;background:#88c3bb"></i><i style="left:863.7px;top:330.8px;background:#d9ebd5"></i><i style="left:878.0px;top:330.8px;background:#d9ebd5"></i><i style="left:663.9px;top:345.0px;background:#0a6288"></i><i style="left:706.7px;top:345.0px;background:#074a6c"></i><i style="left:721.0px;top:345.0px;background:#0a6288"></i><i style="left:735.3px;top:345.0px;background:#0a6288"></i><i style="left:749.5px;top:345.0px;background:#0a6288"></i><i style="left:763.8px;top:345.0px;background:#0a6288"></i><i style="left:778.1px;top:345.0px;background:#0a6288"></i><i style="left:792.3px;top:345.0px;background:#1592ad"></i><i style="left:806.6px;top:345.0px;background:#88c3bb"></i><i style="left:820.9px;top:345.0px;background:#88c3bb"></i><i style="left:835.1px;top:345.0px;background:#1592ad"></i><i style="left:849.4px;top:345.0px;background:#88c3bb"></i><i style="left:863.7px;top:345.0px;background:#d9ebd5"></i><i style="left:878.0px;top:345.0px;background:#d9ebd5"></i><i style="left:621.1px;top:359.2px;background:#0a6288"></i><i style="left:678.2px;top:359.2px;background:#0a6288"></i><i style="left:692.5px;top:359.2px;background:#0a6288"></i><i style="left:706.7px;top:359.2px;background:#0a6288"></i><i style="left:721.0px;top:359.2px;background:#074a6c"></i><i style="left:735.3px;top:359.2px;background:#0a6288"></i><i style="left:749.5px;top:359.2px;background:#0a6288"></i><i style="left:763.8px;top:359.2px;background:#1592ad"></i><i style="left:778.1px;top:359.2px;background:#1592ad"></i><i style="left:792.3px;top:359.2px;background:#1592ad"></i><i style="left:806.6px;top:359.2px;background:#0a6288"></i><i style="left:820.9px;top:359.2px;background:#88c3bb"></i><i style="left:835.1px;top:359.2px;background:#88c3bb"></i><i style="left:849.4px;top:359.2px;background:#d9ebd5"></i><i style="left:863.7px;top:359.2px;background:#88c3bb"></i><i style="left:878.0px;top:359.2px;background:#d9ebd5"></i><i style="left:678.2px;top:373.5px;background:#1592ad"></i><i style="left:692.5px;top:373.5px;background:#0a6288"></i><i style="left:706.7px;top:373.5px;background:#074a6c"></i><i style="left:721.0px;top:373.5px;background:#0a6288"></i><i style="left:735.3px;top:373.5px;background:#0a6288"></i><i style="left:749.5px;top:373.5px;background:#1592ad"></i><i style="left:763.8px;top:373.5px;background:#0a6288"></i><i style="left:778.1px;top:373.5px;background:#0a6288"></i><i style="left:792.3px;top:373.5px;background:#88c3bb"></i><i style="left:806.6px;top:373.5px;background:#88c3bb"></i><i style="left:820.9px;top:373.5px;background:#88c3bb"></i><i style="left:835.1px;top:373.5px;background:#88c3bb"></i><i style="left:849.4px;top:373.5px;background:#d9ebd5"></i><i style="left:863.7px;top:373.5px;background:#88c3bb"></i><i style="left:878.0px;top:373.5px;background:#d9ebd5"></i><i style="left:635.4px;top:387.8px;background:#0a6288"></i><i style="left:649.6px;top:387.8px;background:#0a6288"></i><i style="left:678.2px;top:387.8px;background:#0a6288"></i><i style="left:706.7px;top:387.8px;background:#0a6288"></i><i style="left:721.0px;top:387.8px;background:#1592ad"></i><i style="left:735.3px;top:387.8px;background:#0a6288"></i><i style="left:749.5px;top:387.8px;background:#0a6288"></i><i style="left:763.8px;top:387.8px;background:#0a6288"></i><i style="left:778.1px;top:387.8px;background:#1592ad"></i><i style="left:792.3px;top:387.8px;background:#0a6288"></i><i style="left:806.6px;top:387.8px;background:#0a6288"></i><i style="left:820.9px;top:387.8px;background:#88c3bb"></i><i style="left:835.1px;top:387.8px;background:#1592ad"></i><i style="left:849.4px;top:387.8px;background:#88c3bb"></i><i style="left:863.7px;top:387.8px;background:#d9ebd5"></i><i style="left:878.0px;top:387.8px;background:#d9ebd5"></i><i style="left:663.9px;top:402.0px;background:#0a6288"></i><i style="left:706.7px;top:402.0px;background:#0a6288"></i><i style="left:721.0px;top:402.0px;background:#0a6288"></i><i style="left:735.3px;top:402.0px;background:#1592ad"></i><i style="left:749.5px;top:402.0px;background:#0a6288"></i><i style="left:763.8px;top:402.0px;background:#0a6288"></i><i style="left:778.1px;top:402.0px;background:#1592ad"></i><i style="left:792.3px;top:402.0px;background:#88c3bb"></i><i style="left:806.6px;top:402.0px;background:#1592ad"></i><i style="left:820.9px;top:402.0px;background:#88c3bb"></i><i style="left:835.1px;top:402.0px;background:#88c3bb"></i><i style="left:849.4px;top:402.0px;background:#d9ebd5"></i><i style="left:863.7px;top:402.0px;background:#d9ebd5"></i><i style="left:878.0px;top:402.0px;background:#d9ebd5"></i><i style="left:649.6px;top:416.2px;background:#d9ebd5"></i><i style="left:692.5px;top:416.2px;background:#0a6288"></i><i style="left:706.7px;top:416.2px;background:#0a6288"></i><i style="left:721.0px;top:416.2px;background:#0a6288"></i><i style="left:735.3px;top:416.2px;background:#1592ad"></i><i style="left:749.5px;top:416.2px;background:#0a6288"></i><i style="left:763.8px;top:416.2px;background:#1592ad"></i><i style="left:778.1px;top:416.2px;background:#0a6288"></i><i style="left:792.3px;top:416.2px;background:#88c3bb"></i><i style="left:806.6px;top:416.2px;background:#1592ad"></i><i style="left:820.9px;top:416.2px;background:#88c3bb"></i><i style="left:835.1px;top:416.2px;background:#88c3bb"></i><i style="left:849.4px;top:416.2px;background:#d9ebd5"></i><i style="left:863.7px;top:416.2px;background:#d9ebd5"></i><i style="left:878.0px;top:416.2px;background:#d9ebd5"></i><i style="left:678.2px;top:430.5px;background:#0a6288"></i><i style="left:706.7px;top:430.5px;background:#0a6288"></i><i style="left:721.0px;top:430.5px;background:#0a6288"></i><i style="left:735.3px;top:430.5px;background:#0a6288"></i><i style="left:749.5px;top:430.5px;background:#1592ad"></i><i style="left:763.8px;top:430.5px;background:#0a6288"></i><i style="left:778.1px;top:430.5px;background:#0a6288"></i><i style="left:792.3px;top:430.5px;background:#1592ad"></i><i style="left:806.6px;top:430.5px;background:#88c3bb"></i><i style="left:820.9px;top:430.5px;background:#88c3bb"></i><i style="left:835.1px;top:430.5px;background:#88c3bb"></i><i style="left:849.4px;top:430.5px;background:#d9ebd5"></i><i style="left:863.7px;top:430.5px;background:#88c3bb"></i><i style="left:878.0px;top:430.5px;background:#d9ebd5"></i><i style="left:621.1px;top:444.8px;background:#0a6288"></i><i style="left:692.5px;top:444.8px;background:#0a6288"></i><i style="left:706.7px;top:444.8px;background:#074a6c"></i><i style="left:721.0px;top:444.8px;background:#0a6288"></i><i style="left:735.3px;top:444.8px;background:#0a6288"></i><i style="left:749.5px;top:444.8px;background:#0a6288"></i><i style="left:763.8px;top:444.8px;background:#1592ad"></i><i style="left:778.1px;top:444.8px;background:#0a6288"></i><i style="left:792.3px;top:444.8px;background:#1592ad"></i><i style="left:806.6px;top:444.8px;background:#88c3bb"></i><i style="left:820.9px;top:444.8px;background:#88c3bb"></i><i style="left:835.1px;top:444.8px;background:#1592ad"></i><i style="left:849.4px;top:444.8px;background:#d9ebd5"></i><i style="left:863.7px;top:444.8px;background:#d9ebd5"></i><i style="left:878.0px;top:444.8px;background:#d9ebd5"></i><i style="left:663.9px;top:459.0px;background:#0a6288"></i><i style="left:706.7px;top:459.0px;background:#0a6288"></i><i style="left:721.0px;top:459.0px;background:#0a6288"></i><i style="left:735.3px;top:459.0px;background:#1592ad"></i><i style="left:749.5px;top:459.0px;background:#0a6288"></i><i style="left:763.8px;top:459.0px;background:#0a6288"></i><i style="left:778.1px;top:459.0px;background:#1592ad"></i><i style="left:792.3px;top:459.0px;background:#0a6288"></i><i style="left:806.6px;top:459.0px;background:#1592ad"></i><i style="left:820.9px;top:459.0px;background:#88c3bb"></i><i style="left:835.1px;top:459.0px;background:#88c3bb"></i><i style="left:849.4px;top:459.0px;background:#88c3bb"></i><i style="left:863.7px;top:459.0px;background:#d9ebd5"></i><i style="left:878.0px;top:459.0px;background:#d9ebd5"></i><i style="left:649.6px;top:473.2px;background:#074a6c"></i><i style="left:678.2px;top:473.2px;background:#0a6288"></i><i style="left:706.7px;top:473.2px;background:#0a6288"></i><i style="left:721.0px;top:473.2px;background:#0a6288"></i><i style="left:735.3px;top:473.2px;background:#0a6288"></i><i style="left:749.5px;top:473.2px;background:#0a6288"></i><i style="left:763.8px;top:473.2px;background:#1592ad"></i><i style="left:778.1px;top:473.2px;background:#0a6288"></i><i style="left:792.3px;top:473.2px;background:#88c3bb"></i><i style="left:806.6px;top:473.2px;background:#88c3bb"></i><i style="left:820.9px;top:473.2px;background:#88c3bb"></i><i style="left:835.1px;top:473.2px;background:#1592ad"></i><i style="left:849.4px;top:473.2px;background:#d9ebd5"></i><i style="left:863.7px;top:473.2px;background:#d9ebd5"></i><i style="left:878.0px;top:473.2px;background:#d9ebd5"></i><i style="left:635.4px;top:487.5px;background:#0a6288"></i><i style="left:692.5px;top:487.5px;background:#0a6288"></i><i style="left:706.7px;top:487.5px;background:#0a6288"></i><i style="left:721.0px;top:487.5px;background:#1592ad"></i><i style="left:735.3px;top:487.5px;background:#0a6288"></i><i style="left:749.5px;top:487.5px;background:#0a6288"></i><i style="left:763.8px;top:487.5px;background:#0a6288"></i><i style="left:778.1px;top:487.5px;background:#1592ad"></i><i style="left:792.3px;top:487.5px;background:#1592ad"></i><i style="left:806.6px;top:487.5px;background:#88c3bb"></i><i style="left:820.9px;top:487.5px;background:#88c3bb"></i><i style="left:835.1px;top:487.5px;background:#88c3bb"></i><i style="left:849.4px;top:487.5px;background:#d9ebd5"></i><i style="left:863.7px;top:487.5px;background:#88c3bb"></i><i style="left:878.0px;top:487.5px;background:#d9ebd5"></i></div><div class="t" style="left:8.6px;top:9.8px;font-size:4.6px;font-weight:bold;color:#dfe8ec">DIRECTIONS:</div><div class="t" style="left:8.6px;top:24.0px;font-size:3.2px;color:#dfe8ec">For each data selection, study the data set and fill in the</div><div class="t" style="left:8.6px;top:29.3px;font-size:3.2px;color:#dfe8ec">table below the image.</div><div class="t" style="left:8.6px;top:35.8px;font-size:3.2px;color:#dfe8ec">Your focused to look for trends or patterns and then form</div><div class="t" style="left:8.6px;top:41.0px;font-size:3.2px;color:#dfe8ec">scientific explanations of what you see.</div><div class="t" style="left:8.6px;top:47.6px;font-size:3.2px;color:#dfe8ec">As you answer the question in the end, develop your</div><div class="t" style="left:8.6px;top:52.8px;font-size:3.2px;color:#dfe8ec">answer with information from the previous set as it</div><div class="t" style="left:8.6px;top:58.1px;font-size:3.2px;color:#dfe8ec">becomes more specific and in depth as you go.</div></div><div class="thumb" style="top:631px"><div class="a" style="left:0;top:0;width:892px;height:502px;transform:scale(0.1659);transform-origin:0 0;"><i style="left:663.9px;top:3.0px;background:#0a6288"></i><i style="left:692.5px;top:3.0px;background:#0a6288"></i><i style="left:706.7px;top:3.0px;background:#074a6c"></i><i style="left:721.0px;top:3.0px;background:#0a6288"></i><i style="left:735.3px;top:3.0px;background:#0a6288"></i><i style="left:749.5px;top:3.0px;background:#0a6288"></i><i style="left:763.8px;top:3.0px;background:#1592ad"></i><i style="left:778.1px;top:3.0px;background:#1592ad"></i><i style="left:792.3px;top:3.0px;background:#88c3bb"></i><i style="left:806.6px;top:3.0px;background:#1592ad"></i><i style="left:820.9px;top:3.0px;background:#88c3bb"></i><i style="left:835.1px;top:3.0px;background:#88c3bb"></i><i style="left:849.4px;top:3.0px;background:#d9ebd5"></i><i style="left:863.7px;top:3.0px;background:#d9ebd5"></i><i style="left:878.0px;top:3.0px;background:#d9ebd5"></i><i style="left:635.4px;top:17.2px;background:#0a6288"></i><i style="left:649.6px;top:17.2px;background:#0a6288"></i><i style="left:678.2px;top:17.2px;background:#0a6288"></i><i style="left:692.5px;top:17.2px;background:#0a6288"></i><i style="left:706.7px;top:17.2px;background:#88c3bb"></i><i style="left:721.0px;top:17.2px;background:#074a6c"></i><i style="left:735.3px;top:17.2px;background:#0a6288"></i><i style="left:749.5px;top:17.2px;background:#0a6288"></i><i style="left:763.8px;top:17.2px;background:#0a6288"></i><i style="left:778.1px;top:17.2px;background:#88c3bb"></i><i style="left:792.3px;top:17.2px;background:#0a6288"></i><i style="left:806.6px;top:17.2px;background:#88c3bb"></i><i style="left:820.9px;top:17.2px;background:#88c3bb"></i><i style="left:835.1px;top:17.2px;background:#1592ad"></i><i style="left:849.4px;top:17.2px;background:#d9ebd5"></i><i style="left:863.7px;top:17.2px;background:#88c3bb"></i><i style="left:878.0px;top:17.2px;background:#d9ebd5"></i><i style="left:663.9px;top:31.5px;background:#1592ad"></i><i style="left:678.2px;top:31.5px;background:#0a6288"></i><i style="left:692.5px;top:31.5px;background:#074a6c"></i><i style="left:706.7px;top:31.5px;background:#0a6288"></i><i style="left:721.0px;top:31.5px;background:#0a6288"></i><i style="left:735.3px;top:31.5px;background:#0a6288"></i><i style="left:749.5px;top:31.5px;background:#88c3bb"></i><i style="left:763.8px;top:31.5px;background:#0a6288"></i><i style="left:778.1px;top:31.5px;background:#1592ad"></i><i style="left:792.3px;top:31.5px;background:#1592ad"></i><i style="left:806.6px;top:31.5px;background:#0a6288"></i><i style="left:820.9px;top:31.5px;background:#88c3bb"></i><i style="left:835.1px;top:31.5px;background:#1592ad"></i><i style="left:849.4px;top:31.5px;background:#d9ebd5"></i><i style="left:863.7px;top:31.5px;background:#d9ebd5"></i><i style="left:878.0px;top:31.5px;background:#d9ebd5"></i><i style="left:621.1px;top:45.8px;background:#1592ad"></i><i style="left:692.5px;top:45.8px;background:#0a6288"></i><i style="left:706.7px;top:45.8px;background:#0a6288"></i><i style="left:721.0px;top:45.8px;background:#1592ad"></i><i style="left:735.3px;top:45.8px;background:#0a6288"></i><i style="left:749.5px;top:45.8px;background:#1592ad"></i><i style="left:763.8px;top:45.8px;background:#0a6288"></i><i style="left:778.1px;top:45.8px;background:#0a6288"></i><i style="left:792.3px;top:45.8px;background:#88c3bb"></i><i style="left:806.6px;top:45.8px;background:#88c3bb"></i><i style="left:820.9px;top:45.8px;background:#88c3bb"></i><i style="left:835.1px;top:45.8px;background:#88c3bb"></i><i style="left:849.4px;top:45.8px;background:#88c3bb"></i><i style="left:863.7px;top:45.8px;background:#d9ebd5"></i><i style="left:878.0px;top:45.8px;background:#d9ebd5"></i><i style="left:678.2px;top:60.0px;background:#0a6288"></i><i style="left:706.7px;top:60.0px;background:#074a6c"></i><i style="left:721.0px;top:60.0px;background:#0a6288"></i><i style="left:735.3px;top:60.0px;background:#88c3bb"></i><i style="left:749.5px;top:60.0px;background:#0a6288"></i><i style="left:763.8px;top:60.0px;background:#1592ad"></i><i style="left:778.1px;top:60.0px;background:#0a6288"></i><i style="left:792.3px;top:60.0px;background:#1592ad"></i><i style="left:806.6px;top:60.0px;background:#0a6288"></i><i style="left:820.9px;top:60.0px;background:#88c3bb"></i><i style="left:835.1px;top:60.0px;background:#1592ad"></i><i style="left:849.4px;top:60.0px;background:#d9ebd5"></i><i style="left:863.7px;top:60.0px;background:#88c3bb"></i><i style="left:878.0px;top:60.0px;background:#d9ebd5"></i><i style="left:649.6px;top:74.2px;background:#0a6288"></i><i style="left:692.5px;top:74.2px;background:#074a6c"></i><i style="left:706.7px;top:74.2px;background:#0a6288"></i><i style="left:721.0px;top:74.2px;background:#0a6288"></i><i style="left:735.3px;top:74.2px;background:#0a6288"></i><i style="left:749.5px;top:74.2px;background:#0a6288"></i><i style="left:763.8px;top:74.2px;background:#1592ad"></i><i style="left:778.1px;top:74.2px;background:#88c3bb"></i><i style="left:792.3px;top:74.2px;background:#1592ad"></i><i style="left:806.6px;top:74.2px;background:#88c3bb"></i><i style="left:820.9px;top:74.2px;background:#88c3bb"></i><i style="left:835.1px;top:74.2px;background:#88c3bb"></i><i style="left:849.4px;top:74.2px;background:#d9ebd5"></i><i style="left:863.7px;top:74.2px;background:#d9ebd5"></i><i style="left:878.0px;top:74.2px;background:#d9ebd5"></i><i style="left:635.4px;top:88.5px;background:#0a6288"></i><i style="left:649.6px;top:88.5px;background:#0a6288"></i><i style="left:663.9px;top:88.5px;background:#0a6288"></i><i style="left:706.7px;top:88.5px;background:#0a6288"></i><i style="left:721.0px;top:88.5px;background:#074a6c"></i><i style="left:735.3px;top:88.5px;background:#0a6288"></i><i style="left:749.5px;top:88.5px;background:#0a6288"></i><i style="left:763.8px;top:88.5px;background:#0a6288"></i><i style="left:778.1px;top:88.5px;background:#0a6288"></i><i style="left:792.3px;top:88.5px;background:#1592ad"></i><i style="left:806.6px;top:88.5px;background:#88c3bb"></i><i style="left:820.9px;top:88.5px;background:#88c3bb"></i><i style="left:835.1px;top:88.5px;background:#1592ad"></i><i style="left:849.4px;top:88.5px;background:#88c3bb"></i><i style="left:863.7px;top:88.5px;background:#d9ebd5"></i><i style="left:878.0px;top:88.5px;background:#d9ebd5"></i><i style="left:663.9px;top:102.8px;background:#0a6288"></i><i style="left:678.2px;top:102.8px;background:#0a6288"></i><i style="left:692.5px;top:102.8px;background:#1592ad"></i><i style="left:706.7px;top:102.8px;background:#0a6288"></i><i style="left:721.0px;top:102.8px;background:#0a6288"></i><i style="left:735.3px;top:102.8px;background:#0a6288"></i><i style="left:749.5px;top:102.8px;background:#1592ad"></i><i style="left:763.8px;top:102.8px;background:#0a6288"></i><i style="left:778.1px;top:102.8px;background:#0a6288"></i><i style="left:792.3px;top:102.8px;background:#0a6288"></i><i style="left:806.6px;top:102.8px;background:#88c3bb"></i><i style="left:820.9px;top:102.8px;background:#88c3bb"></i><i style="left:835.1px;top:102.8px;background:#88c3bb"></i><i style="left:849.4px;top:102.8px;background:#88c3bb"></i><i style="left:863.7px;top:102.8px;background:#d9ebd5"></i><i style="left:878.0px;top:102.8px;background:#d9ebd5"></i><i style="left:678.2px;top:117.0px;background:#0a6288"></i><i style="left:692.5px;top:117.0px;background:#0a6288"></i><i style="left:706.7px;top:117.0px;background:#0a6288"></i><i style="left:721.0px;top:117.0px;background:#0a6288"></i><i style="left:735.3px;top:117.0px;background:#0a6288"></i><i style="left:749.5px;top:117.0px;background:#0a6288"></i><i style="left:763.8px;top:117.0px;background:#1592ad"></i><i style="left:778.1px;top:117.0px;background:#0a6288"></i><i style="left:792.3px;top:117.0px;background:#88c3bb"></i><i style="left:806.6px;top:117.0px;background:#88c3bb"></i><i style="left:820.9px;top:117.0px;background:#1592ad"></i><i style="left:835.1px;top:117.0px;background:#88c3bb"></i><i style="left:849.4px;top:117.0px;background:#d9ebd5"></i><i style="left:863.7px;top:117.0px;background:#d9ebd5"></i><i style="left:878.0px;top:117.0px;background:#d9ebd5"></i><i style="left:678.2px;top:131.2px;background:#074a6c"></i><i style="left:692.5px;top:131.2px;background:#074a6c"></i><i style="left:706.7px;top:131.2px;background:#0a6288"></i><i style="left:721.0px;top:131.2px;background:#0a6288"></i><i style="left:735.3px;top:131.2px;background:#1592ad"></i><i style="left:749.5px;top:131.2px;background:#0a6288"></i><i style="left:763.8px;top:131.2px;background:#0a6288"></i><i style="left:778.1px;top:131.2px;background:#0a6288"></i><i style="left:792.3px;top:131.2px;background:#1592ad"></i><i style="left:806.6px;top:131.2px;background:#0a6288"></i><i style="left:820.9px;top:131.2px;background:#88c3bb"></i><i style="left:835.1px;top:131.2px;background:#88c3bb"></i><i style="left:849.4px;top:131.2px;background:#d9ebd5"></i><i style="left:863.7px;top:131.2px;background:#88c3bb"></i><i style="left:878.0px;top:131.2px;background:#d9ebd5"></i><i style="left:635.4px;top:145.5px;background:#0a6288"></i><i style="left:678.2px;top:145.5px;background:#0a6288"></i><i style="left:692.5px;top:145.5px;background:#0a6288"></i><i style="left:706.7px;top:145.5px;background:#074a6c"></i><i style="left:721.0px;top:145.5px;background:#0a6288"></i><i style="left:735.3px;top:145.5px;background:#0a6288"></i><i style="left:749.5px;top:145.5px;background:#1592ad"></i><i style="left:763.8px;top:145.5px;background:#0a6288"></i><i style="left:778.1px;top:145.5px;background:#0a6288"></i><i style="left:792.3px;top:145.5px;background:#1592ad"></i><i style="left:806.6px;top:145.5px;background:#88c3bb"></i><i style="left:820.9px;top:145.5px;background:#88c3bb"></i><i style="left:835.1px;top:145.5px;background:#1592ad"></i><i style="left:849.4px;top:145.5px;background:#d9ebd5"></i><i style="left:863.7px;top:145.5px;background:#d9ebd5"></i><i style="left:878.0px;top:145.5px;background:#d9ebd5"></i><i style="left:649.6px;top:159.8px;background:#0a6288"></i><i style="left:678.2px;top:159.8px;background:#0a6288"></i><i style="left:692.5px;top:159.8px;background:#0a6288"></i><i style="left:706.7px;top:159.8px;background:#1592ad"></i><i style="left:721.0px;top:159.8px;background:#1592ad"></i><i style="left:735.3px;top:159.8px;background:#1592ad"></i><i style="left:749.5px;top:159.8px;background:#0a6288"></i><i style="left:763.8px;top:159.8px;background:#0a6288"></i><i style="left:778.1px;top:159.8px;background:#1592ad"></i><i style="left:792.3px;top:159.8px;background:#88c3bb"></i><i style="left:806.6px;top:159.8px;background:#88c3bb"></i><i style="left:820.9px;top:159.8px;background:#88c3bb"></i><i style="left:835.1px;top:159.8px;background:#1592ad"></i><i style="left:849.4px;top:159.8px;background:#d9ebd5"></i><i style="left:863.7px;top:159.8px;background:#d9ebd5"></i><i style="left:878.0px;top:159.8px;background:#d9ebd5"></i><i style="left:678.2px;top:174.0px;background:#0a6288"></i><i style="left:692.5px;top:174.0px;background:#0a6288"></i><i style="left:706.7px;top:174.0px;background:#0a6288"></i><i style="left:721.0px;top:174.0px;background:#0a6288"></i><i style="left:735.3px;top:174.0px;background:#0a6288"></i><i style="left:749.5px;top:174.0px;background:#0a6288"></i><i style="left:763.8px;top:174.0px;background:#0a6288"></i><i style="left:778.1px;top:174.0px;background:#1592ad"></i><i style="left:792.3px;top:174.0px;background:#0a6288"></i><i style="left:806.6px;top:174.0px;background:#1592ad"></i><i style="left:820.9px;top:174.0px;background:#88c3bb"></i><i style="left:835.1px;top:174.0px;background:#88c3bb"></i><i style="left:849.4px;top:174.0px;background:#88c3bb"></i><i style="left:863.7px;top:174.0px;background:#d9ebd5"></i><i style="left:878.0px;top:174.0px;background:#d9ebd5"></i><i style="left:706.7px;top:188.2px;background:#0a6288"></i><i style="left:721.0px;top:188.2px;background:#074a6c"></i><i style="left:735.3px;top:188.2px;background:#0a6288"></i><i style="left:749.5px;top:188.2px;background:#0a6288"></i><i style="left:763.8px;top:188.2px;background:#1592ad"></i><i style="left:778.1px;top:188.2px;background:#88c3bb"></i><i style="left:792.3px;top:188.2px;background:#0a6288"></i><i style="left:806.6px;top:188.2px;background:#88c3bb"></i><i style="left:820.9px;top:188.2px;background:#88c3bb"></i><i style="left:835.1px;top:188.2px;background:#88c3bb"></i><i style="left:849.4px;top:188.2px;background:#d9ebd5"></i><i style="left:863.7px;top:188.2px;background:#88c3bb"></i><i style="left:878.0px;top:188.2px;background:#d9ebd5"></i><i style="left:635.4px;top:202.5px;background:#0a6288"></i><i style="left:678.2px;top:202.5px;background:#0a6288"></i><i style="left:706.7px;top:202.5px;background:#1592ad"></i><i style="left:721.0px;top:202.5px;background:#0a6288"></i><i style="left:735.3px;top:202.5px;background:#0a6288"></i><i style="left:749.5px;top:202.5px;background:#0a6288"></i><i style="left:763.8px;top:202.5px;background:#0a6288"></i><i style="left:778.1px;top:202.5px;background:#1592ad"></i><i style="left:792.3px;top:202.5px;background:#1592ad"></i><i style="left:806.6px;top:202.5px;background:#88c3bb"></i><i style="left:820.9px;top:202.5px;background:#88c3bb"></i><i style="left:835.1px;top:202.5px;background:#88c3bb"></i><i style="left:849.4px;top:202.5px;background:#d9ebd5"></i><i style="left:863.7px;top:202.5px;background:#88c3bb"></i><i style="left:878.0px;top:202.5px;background:#d9ebd5"></i><i style="left:663.9px;top:216.8px;background:#0a6288"></i><i style="left:678.2px;top:216.8px;background:#0a6288"></i><i style="left:692.5px;top:216.8px;background:#0a6288"></i><i style="left:706.7px;top:216.8px;background:#0a6288"></i><i style="left:721.0px;top:216.8px;background:#0a6288"></i><i style="left:735.3px;top:216.8px;background:#0a6288"></i><i style="left:749.5px;top:216.8px;background:#0a6288"></i><i style="left:763.8px;top:216.8px;background:#0a6288"></i><i style="left:778.1px;top:216.8px;background:#0a6288"></i><i style="left:792.3px;top:216.8px;background:#1592ad"></i><i style="left:806.6px;top:216.8px;background:#1592ad"></i><i style="left:820.9px;top:216.8px;background:#88c3bb"></i><i style="left:835.1px;top:216.8px;background:#88c3bb"></i><i style="left:849.4px;top:216.8px;background:#88c3bb"></i><i style="left:863.7px;top:216.8px;background:#d9ebd5"></i><i style="left:878.0px;top:216.8px;background:#d9ebd5"></i><i style="left:692.5px;top:231.0px;background:#0a6288"></i><i style="left:706.7px;top:231.0px;background:#074a6c"></i><i style="left:721.0px;top:231.0px;background:#0a6288"></i><i style="left:735.3px;top:231.0px;background:#0a6288"></i><i style="left:749.5px;top:231.0px;background:#1592ad"></i><i style="left:763.8px;top:231.0px;background:#0a6288"></i><i style="left:778.1px;top:231.0px;background:#0a6288"></i><i style="left:792.3px;top:231.0px;background:#1592ad"></i><i style="left:806.6px;top:231.0px;background:#88c3bb"></i><i style="left:820.9px;top:231.0px;background:#88c3bb"></i><i style="left:835.1px;top:231.0px;background:#1592ad"></i><i style="left:849.4px;top:231.0px;background:#d9ebd5"></i><i style="left:863.7px;top:231.0px;background:#d9ebd5"></i><i style="left:878.0px;top:231.0px;background:#d9ebd5"></i><i style="left:649.6px;top:245.2px;background:#0a6288"></i><i style="left:678.2px;top:245.2px;background:#0a6288"></i><i style="left:692.5px;top:245.2px;background:#0a6288"></i><i style="left:706.7px;top:245.2px;background:#0a6288"></i><i style="left:721.0px;top:245.2px;background:#0a6288"></i><i style="left:735.3px;top:245.2px;background:#0a6288"></i><i style="left:749.5px;top:245.2px;background:#0a6288"></i><i style="left:763.8px;top:245.2px;background:#88c3bb"></i><i style="left:778.1px;top:245.2px;background:#0a6288"></i><i style="left:792.3px;top:245.2px;background:#0a6288"></i><i style="left:806.6px;top:245.2px;background:#88c3bb"></i><i style="left:820.9px;top:245.2px;background:#1592ad"></i><i style="left:835.1px;top:245.2px;background:#88c3bb"></i><i style="left:849.4px;top:245.2px;background:#88c3bb"></i><i style="left:863.7px;top:245.2px;background:#d9ebd5"></i><i style="left:878.0px;top:245.2px;background:#d9ebd5"></i><i style="left:621.1px;top:259.5px;background:#0a6288"></i><i style="left:678.2px;top:259.5px;background:#1592ad"></i><i style="left:692.5px;top:259.5px;background:#0a6288"></i><i style="left:706.7px;top:259.5px;background:#88c3bb"></i><i style="left:721.0px;top:259.5px;background:#0a6288"></i><i style="left:735.3px;top:259.5px;background:#0a6288"></i><i style="left:749.5px;top:259.5px;background:#1592ad"></i><i style="left:763.8px;top:259.5px;background:#0a6288"></i><i style="left:778.1px;top:259.5px;background:#0a6288"></i><i style="left:792.3px;top:259.5px;background:#88c3bb"></i><i style="left:806.6px;top:259.5px;background:#0a6288"></i><i style="left:820.9px;top:259.5px;background:#88c3bb"></i><i style="left:835.1px;top:259.5px;background:#88c3bb"></i><i style="left:849.4px;top:259.5px;background:#d9ebd5"></i><i style="left:863.7px;top:259.5px;background:#88c3bb"></i><i style="left:878.0px;top:259.5px;background:#d9ebd5"></i><i style="left:635.4px;top:273.8px;background:#1592ad"></i><i style="left:692.5px;top:273.8px;background:#074a6c"></i><i style="left:706.7px;top:273.8px;background:#0a6288"></i><i style="left:721.0px;top:273.8px;background:#0a6288"></i><i style="left:735.3px;top:273.8px;background:#0a6288"></i><i style="left:749.5px;top:273.8px;background:#0a6288"></i><i style="left:763.8px;top:273.8px;background:#1592ad"></i><i style="left:778.1px;top:273.8px;background:#0a6288"></i><i style="left:792.3px;top:273.8px;background:#88c3bb"></i><i style="left:806.6px;top:273.8px;background:#88c3bb"></i><i style="left:820.9px;top:273.8px;background:#88c3bb"></i><i style="left:835.1px;top:273.8px;background:#1592ad"></i><i style="left:849.4px;top:273.8px;background:#d9ebd5"></i><i style="left:863.7px;top:273.8px;background:#d9ebd5"></i><i style="left:878.0px;top:273.8px;background:#d9ebd5"></i><i style="left:663.9px;top:288.0px;background:#0a6288"></i><i style="left:678.2px;top:288.0px;background:#0a6288"></i><i style="left:692.5px;top:288.0px;background:#0a6288"></i><i style="left:706.7px;top:288.0px;background:#1592ad"></i><i style="left:721.0px;top:288.0px;background:#0a6288"></i><i style="left:735.3px;top:288.0px;background:#0a6288"></i><i style="left:749.5px;top:288.0px;background:#0a6288"></i><i style="left:763.8px;top:288.0px;background:#1592ad"></i><i style="left:778.1px;top:288.0px;background:#0a6288"></i><i style="left:792.3px;top:288.0px;background:#1592ad"></i><i style="left:806.6px;top:288.0px;background:#1592ad"></i><i style="left:820.9px;top:288.0px;background:#1592ad"></i><i style="left:835.1px;top:288.0px;background:#88c3bb"></i><i style="left:849.4px;top:288.0px;background:#d9ebd5"></i><i style="left:863.7px;top:288.0px;background:#d9ebd5"></i><i style="left:878.0px;top:288.0px;background:#d9ebd5"></i><i style="left:692.5px;top:302.2px;background:#0a6288"></i><i style="left:706.7px;top:302.2px;background:#0a6288"></i><i style="left:721.0px;top:302.2px;background:#1592ad"></i><i style="left:735.3px;top:302.2px;background:#0a6288"></i><i style="left:749.5px;top:302.2px;background:#0a6288"></i><i style="left:763.8px;top:302.2px;background:#1592ad"></i><i style="left:778.1px;top:302.2px;background:#0a6288"></i><i style="left:792.3px;top:302.2px;background:#1592ad"></i><i style="left:806.6px;top:302.2px;background:#88c3bb"></i><i style="left:820.9px;top:302.2px;background:#88c3bb"></i><i style="left:835.1px;top:302.2px;background:#88c3bb"></i><i style="left:849.4px;top:302.2px;background:#d9ebd5"></i><i style="left:863.7px;top:302.2px;background:#d9ebd5"></i><i style="left:878.0px;top:302.2px;background:#d9ebd5"></i><i style="left:649.6px;top:316.5px;background:#0a6288"></i><i style="left:678.2px;top:316.5px;background:#0a6288"></i><i style="left:706.7px;top:316.5px;background:#0a6288"></i><i style="left:721.0px;top:316.5px;background:#0a6288"></i><i style="left:735.3px;top:316.5px;background:#1592ad"></i><i style="left:749.5px;top:316.5px;background:#0a6288"></i><i style="left:763.8px;top:316.5px;background:#0a6288"></i><i style="left:778.1px;top:316.5px;background:#0a6288"></i><i style="left:792.3px;top:316.5px;background:#1592ad"></i><i style="left:806.6px;top:316.5px;background:#1592ad"></i><i style="left:820.9px;top:316.5px;background:#88c3bb"></i><i style="left:835.1px;top:316.5px;background:#1592ad"></i><i style="left:849.4px;top:316.5px;background:#88c3bb"></i><i style="left:863.7px;top:316.5px;background:#88c3bb"></i><i style="left:878.0px;top:316.5px;background:#d9ebd5"></i><i style="left:706.7px;top:330.8px;background:#0a6288"></i><i style="left:721.0px;top:330.8px;background:#0a6288"></i><i style="left:735.3px;top:330.8px;background:#1592ad"></i><i style="left:749.5px;top:330.8px;background:#0a6288"></i><i style="left:763.8px;top:330.8px;background:#88c3bb"></i><i style="left:778.1px;top:330.8px;background:#0a6288"></i><i style="left:792.3px;top:330.8px;background:#88c3bb"></i><i style="left:806.6px;top:330.8px;background:#1592ad"></i><i style="left:820.9px;top:330.8px;background:#88c3bb"></i><i style="left:835.1px;top:330.8px;background:#1592ad"></i><i style="left:849.4px;top:330.8px;background:#88c3bb"></i><i style="left:863.7px;top:330.8px;background:#d9ebd5"></i><i style="left:878.0px;top:330.8px;background:#d9ebd5"></i><i style="left:663.9px;top:345.0px;background:#0a6288"></i><i style="left:706.7px;top:345.0px;background:#074a6c"></i><i style="left:721.0px;top:345.0px;background:#0a6288"></i><i style="left:735.3px;top:345.0px;background:#0a6288"></i><i style="left:749.5px;top:345.0px;background:#0a6288"></i><i style="left:763.8px;top:345.0px;background:#0a6288"></i><i style="left:778.1px;top:345.0px;background:#0a6288"></i><i style="left:792.3px;top:345.0px;background:#1592ad"></i><i style="left:806.6px;top:345.0px;background:#88c3bb"></i><i style="left:820.9px;top:345.0px;background:#88c3bb"></i><i style="left:835.1px;top:345.0px;background:#1592ad"></i><i style="left:849.4px;top:345.0px;background:#88c3bb"></i><i style="left:863.7px;top:345.0px;background:#d9ebd5"></i><i style="left:878.0px;top:345.0px;background:#d9ebd5"></i><i style="left:621.1px;top:359.2px;background:#0a6288"></i><i style="left:678.2px;top:359.2px;background:#0a6288"></i><i style="left:692.5px;top:359.2px;background:#0a6288"></i><i style="left:706.7px;top:359.2px;background:#0a6288"></i><i style="left:721.0px;top:359.2px;background:#074a6c"></i><i style="left:735.3px;top:359.2px;background:#0a6288"></i><i style="left:749.5px;top:359.2px;background:#0a6288"></i><i style="left:763.8px;top:359.2px;background:#1592ad"></i><i style="left:778.1px;top:359.2px;background:#1592ad"></i><i style="left:792.3px;top:359.2px;background:#1592ad"></i><i style="left:806.6px;top:359.2px;background:#0a6288"></i><i style="left:820.9px;top:359.2px;background:#88c3bb"></i><i style="left:835.1px;top:359.2px;background:#88c3bb"></i><i style="left:849.4px;top:359.2px;background:#d9ebd5"></i><i style="left:863.7px;top:359.2px;background:#88c3bb"></i><i style="left:878.0px;top:359.2px;background:#d9ebd5"></i><i style="left:678.2px;top:373.5px;background:#1592ad"></i><i style="left:692.5px;top:373.5px;background:#0a6288"></i><i style="left:706.7px;top:373.5px;background:#074a6c"></i><i style="left:721.0px;top:373.5px;background:#0a6288"></i><i style="left:735.3px;top:373.5px;background:#0a6288"></i><i style="left:749.5px;top:373.5px;background:#1592ad"></i><i style="left:763.8px;top:373.5px;background:#0a6288"></i><i style="left:778.1px;top:373.5px;background:#0a6288"></i><i style="left:792.3px;top:373.5px;background:#88c3bb"></i><i style="left:806.6px;top:373.5px;background:#88c3bb"></i><i style="left:820.9px;top:373.5px;background:#88c3bb"></i><i style="left:835.1px;top:373.5px;background:#88c3bb"></i><i style="left:849.4px;top:373.5px;background:#d9ebd5"></i><i style="left:863.7px;top:373.5px;background:#88c3bb"></i><i style="left:878.0px;top:373.5px;background:#d9ebd5"></i><i style="left:635.4px;top:387.8px;background:#0a6288"></i><i style="left:649.6px;top:387.8px;background:#0a6288"></i><i style="left:678.2px;top:387.8px;background:#0a6288"></i><i style="left:706.7px;top:387.8px;background:#0a6288"></i><i style="left:721.0px;top:387.8px;background:#1592ad"></i><i style="left:735.3px;top:387.8px;background:#0a6288"></i><i style="left:749.5px;top:387.8px;background:#0a6288"></i><i style="left:763.8px;top:387.8px;background:#0a6288"></i><i style="left:778.1px;top:387.8px;background:#1592ad"></i><i style="left:792.3px;top:387.8px;background:#0a6288"></i><i style="left:806.6px;top:387.8px;background:#0a6288"></i><i style="left:820.9px;top:387.8px;background:#88c3bb"></i><i style="left:835.1px;top:387.8px;background:#1592ad"></i><i style="left:849.4px;top:387.8px;background:#88c3bb"></i><i style="left:863.7px;top:387.8px;background:#d9ebd5"></i><i style="left:878.0px;top:387.8px;background:#d9ebd5"></i><i style="left:663.9px;top:402.0px;background:#0a6288"></i><i style="left:706.7px;top:402.0px;background:#0a6288"></i><i style="left:721.0px;top:402.0px;background:#0a6288"></i><i style="left:735.3px;top:402.0px;background:#1592ad"></i><i style="left:749.5px;top:402.0px;background:#0a6288"></i><i style="left:763.8px;top:402.0px;background:#0a6288"></i><i style="left:778.1px;top:402.0px;background:#1592ad"></i><i style="left:792.3px;top:402.0px;background:#88c3bb"></i><i style="left:806.6px;top:402.0px;background:#1592ad"></i><i style="left:820.9px;top:402.0px;background:#88c3bb"></i><i style="left:835.1px;top:402.0px;background:#88c3bb"></i><i style="left:849.4px;top:402.0px;background:#d9ebd5"></i><i style="left:863.7px;top:402.0px;background:#d9ebd5"></i><i style="left:878.0px;top:402.0px;background:#d9ebd5"></i><i style="left:649.6px;top:416.2px;background:#d9ebd5"></i><i style="left:692.5px;top:416.2px;background:#0a6288"></i><i style="left:706.7px;top:416.2px;background:#0a6288"></i><i style="left:721.0px;top:416.2px;background:#0a6288"></i><i style="left:735.3px;top:416.2px;background:#1592ad"></i><i style="left:749.5px;top:416.2px;background:#0a6288"></i><i style="left:763.8px;top:416.2px;background:#1592ad"></i><i style="left:778.1px;top:416.2px;background:#0a6288"></i><i style="left:792.3px;top:416.2px;background:#88c3bb"></i><i style="left:806.6px;top:416.2px;background:#1592ad"></i><i style="left:820.9px;top:416.2px;background:#88c3bb"></i><i style="left:835.1px;top:416.2px;background:#88c3bb"></i><i style="left:849.4px;top:416.2px;background:#d9ebd5"></i><i style="left:863.7px;top:416.2px;background:#d9ebd5"></i><i style="left:878.0px;top:416.2px;background:#d9ebd5"></i><i style="left:678.2px;top:430.5px;background:#0a6288"></i><i style="left:706.7px;top:430.5px;background:#0a6288"></i><i style="left:721.0px;top:430.5px;background:#0a6288"></i><i style="left:735.3px;top:430.5px;background:#0a6288"></i><i style="left:749.5px;top:430.5px;background:#1592ad"></i><i style="left:763.8px;top:430.5px;background:#0a6288"></i><i style="left:778.1px;top:430.5px;background:#0a6288"></i><i style="left:792.3px;top:430.5px;background:#1592ad"></i><i style="left:806.6px;top:430.5px;background:#88c3bb"></i><i style="left:820.9px;top:430.5px;background:#88c3bb"></i><i style="left:835.1px;top:430.5px;background:#88c3bb"></i><i style="left:849.4px;top:430.5px;background:#d9ebd5"></i><i style="left:863.7px;top:430.5px;background:#88c3bb"></i><i style="left:878.0px;top:430.5px;background:#d9ebd5"></i><i style="left:621.1px;top:444.8px;background:#0a6288"></i><i style="left:692.5px;top:444.8px;background:#0a6288"></i><i style="left:706.7px;top:444.8px;background:#074a6c"></i><i style="left:721.0px;top:444.8px;background:#0a6288"></i><i style="left:735.3px;top:444.8px;background:#0a6288"></i><i style="left:749.5px;top:444.8px;background:#0a6288"></i><i style="left:763.8px;top:444.8px;background:#1592ad"></i><i style="left:778.1px;top:444.8px;background:#0a6288"></i><i style="left:792.3px;top:444.8px;background:#1592ad"></i><i style="left:806.6px;top:444.8px;background:#88c3bb"></i><i style="left:820.9px;top:444.8px;background:#88c3bb"></i><i style="left:835.1px;top:444.8px;background:#1592ad"></i><i style="left:849.4px;top:444.8px;background:#d9ebd5"></i><i style="left:863.7px;top:444.8px;background:#d9ebd5"></i><i style="left:878.0px;top:444.8px;background:#d9ebd5"></i><i style="left:663.9px;top:459.0px;background:#0a6288"></i><i style="left:706.7px;top:459.0px;background:#0a6288"></i><i style="left:721.0px;top:459.0px;background:#0a6288"></i><i style="left:735.3px;top:459.0px;background:#1592ad"></i><i style="left:749.5px;top:459.0px;background:#0a6288"></i><i style="left:763.8px;top:459.0px;background:#0a6288"></i><i style="left:778.1px;top:459.0px;background:#1592ad"></i><i style="left:792.3px;top:459.0px;background:#0a6288"></i><i style="left:806.6px;top:459.0px;background:#1592ad"></i><i style="left:820.9px;top:459.0px;background:#88c3bb"></i><i style="left:835.1px;top:459.0px;background:#88c3bb"></i><i style="left:849.4px;top:459.0px;background:#88c3bb"></i><i style="left:863.7px;top:459.0px;background:#d9ebd5"></i><i style="left:878.0px;top:459.0px;background:#d9ebd5"></i><i style="left:649.6px;top:473.2px;background:#074a6c"></i><i style="left:678.2px;top:473.2px;background:#0a6288"></i><i style="left:706.7px;top:473.2px;background:#0a6288"></i><i style="left:721.0px;top:473.2px;background:#0a6288"></i><i style="left:735.3px;top:473.2px;background:#0a6288"></i><i style="left:749.5px;top:473.2px;background:#0a6288"></i><i style="left:763.8px;top:473.2px;background:#1592ad"></i><i style="left:778.1px;top:473.2px;background:#0a6288"></i><i style="left:792.3px;top:473.2px;background:#88c3bb"></i><i style="left:806.6px;top:473.2px;background:#88c3bb"></i><i style="left:820.9px;top:473.2px;background:#88c3bb"></i><i style="left:835.1px;top:473.2px;background:#1592ad"></i><i style="left:849.4px;top:473.2px;background:#d9ebd5"></i><i style="left:863.7px;top:473.2px;background:#d9ebd5"></i><i style="left:878.0px;top:473.2px;background:#d9ebd5"></i><i style="left:635.4px;top:487.5px;background:#0a6288"></i><i style="left:692.5px;top:487.5px;background:#0a6288"></i><i style="left:706.7px;top:487.5px;background:#0a6288"></i><i style="left:721.0px;top:487.5px;background:#1592ad"></i><i style="left:735.3px;top:487.5px;background:#0a6288"></i><i style="left:749.5px;top:487.5px;background:#0a6288"></i><i style="left:763.8px;top:487.5px;background:#0a6288"></i><i style="left:778.1px;top:487.5px;background:#1592ad"></i><i style="left:792.3px;top:487.5px;background:#1592ad"></i><i style="left:806.6px;top:487.5px;background:#88c3bb"></i><i style="left:820.9px;top:487.5px;background:#88c3bb"></i><i style="left:835.1px;top:487.5px;background:#88c3bb"></i><i style="left:849.4px;top:487.5px;background:#d9ebd5"></i><i style="left:863.7px;top:487.5px;background:#88c3bb"></i><i style="left:878.0px;top:487.5px;background:#d9ebd5"></i></div><div class="t" style="left:8px;top:5px;font-size:2.9px;font-weight:bold;color:#e8eef0">Figure 1 - UV Radiation</div><div class="t" style="left:18px;top:9px;font-size:2.9px;font-weight:bold;color:#e8eef0">Map</div><div class="a" style="left:6.0px;top:16.0px;width:30.0px;height:1.2px;background:#c8d8de;opacity:0.5"></div><div class="a" style="left:6.0px;top:19.4px;width:30.0px;height:1.2px;background:#c8d8de;opacity:0.5"></div><div class="a" style="left:6.0px;top:22.8px;width:30.0px;height:1.2px;background:#c8d8de;opacity:0.5"></div><div class="a" style="left:6.0px;top:26.2px;width:30.0px;height:1.2px;background:#c8d8de;opacity:0.5"></div><div class="a" style="left:6.0px;top:29.6px;width:30.0px;height:1.2px;background:#c8d8de;opacity:0.5"></div><div class="a" style="left:6.0px;top:35.0px;width:30.0px;height:1.2px;background:#c8d8de;opacity:0.5"></div><div class="a" style="left:6.0px;top:38.4px;width:30.0px;height:1.2px;background:#c8d8de;opacity:0.5"></div><div class="a" style="left:6.0px;top:41.8px;width:30.0px;height:1.2px;background:#c8d8de;opacity:0.5"></div><div class="a" style="left:46px;top:1px;width:83px;height:57px;background:#fff"></div><div class="a" style="left:50px;top:10px;width:75px;height:39px;background:linear-gradient(180deg,#020208 0%,#05051a 8%,#0a10a0 18%,#1a50f0 26%,#20c8f0 31%,#50e070 36%,#f0c020 40%,#e83010 45%,#e02a10 55%,#f0b020 59%,#50e070 63%,#20c8f0 67%,#1a50f0 72%,#0a10b0 80%,#06084a 90%,#020208 100%)"></div><div class="a" style="left:50px;top:50px;width:75px;height:2px;background:linear-gradient(90deg,#000,#2040f0,#30e0e0,#40e040,#f0e030,#f08020,#e02020,#f050d0)"></div><div class="a" style="left:21px;top:59px;width:124px;height:10px;background:#0b4d70"></div><div class="a" style="left:24.0px;top:62.0px;width:30.0px;height:1.2px;background:#c8dde6;opacity:0.6"></div><div class="a" style="left:66.0px;top:62.0px;width:30.0px;height:1.2px;background:#c8dde6;opacity:0.6"></div><div class="a" style="left:108.0px;top:62.0px;width:30.0px;height:1.2px;background:#c8dde6;opacity:0.6"></div><div class="a" style="left:27px;top:70px;width:117px;height:12px;background:#c5dcec"></div><div class="a" style="left:29.0px;top:72.0px;width:34.0px;height:1.2px;background:#334;opacity:0.7"></div><div class="a" style="left:29.0px;top:75.0px;width:34.0px;height:1.2px;background:#334;opacity:0.7"></div><div class="a" style="left:29.0px;top:78.0px;width:34.0px;height:1.2px;background:#334;opacity:0.7"></div><div class="a" style="left:71.0px;top:72.0px;width:34.0px;height:1.2px;background:#334;opacity:0.7"></div><div class="a" style="left:71.0px;top:75.0px;width:34.0px;height:1.2px;background:#334;opacity:0.7"></div><div class="a" style="left:71.0px;top:78.0px;width:34.0px;height:1.2px;background:#334;opacity:0.7"></div><div class="a" style="left:113.0px;top:72.0px;width:34.0px;height:1.2px;background:#334;opacity:0.7"></div><div class="a" style="left:113.0px;top:75.0px;width:34.0px;height:1.2px;background:#334;opacity:0.7"></div><div class="a" style="left:113.0px;top:78.0px;width:34.0px;height:1.2px;background:#334;opacity:0.7"></div></div><div class="thumb" style="top:733px;background:#fff;height:80px"><div class="a" style="left:126px;top:0;width:22px;height:80px;background:linear-gradient(90deg,transparent,#7fb5c8 50%,#1f7ea0);-webkit-mask-image:linear-gradient(90deg,transparent,#000)"></div><div class="a" style="left:126px;top:0;width:22px;height:80px;background:repeating-linear-gradient(90deg,#fff 0 1px,transparent 1px 2.5px),repeating-linear-gradient(0deg,#fff 0 1px,transparent 1px 2.5px)"></div><div class="t" style="left:8px;top:8.5px;font-size:7.4px;color:#93c3d3;transform:scaleX(0.86);transform-origin:0 0">Making sense of UV Radiation</div><div class="t" style="left:94px;top:3px;font-size:3.2px;font-weight:bold;color:#333;line-height:1.25">Use the infographic<br>to develop your<br>reasoning.</div><div class="a" style="left:18px;top:18px;width:99px;height:62px;background:#86c2ee;overflow:hidden"><div class="a" style="left:-1px;top:-4px;width:20px;height:20px;border-radius:50%;background:radial-gradient(circle at 40% 40%,#f7b21c,#f6e84a 60%)"></div><svg width="60" height="60" viewBox="0 0 60 60" style="left:8px;top:2px"><path d="M4 0 L32 6 L26 16Z" fill="#d8f0a0" opacity="0.9"/><path d="M6 10 L30 26 L22 34Z" fill="#d8f0a0" opacity="0.9"/><path d="M0 18 L14 54 L4 56Z" fill="#d8f0a0" opacity="0.9"/></svg><div class="a" style="left:35px;top:5px;width:20px;height:2px;background:#c8e860;opacity:.8"></div><div class="a" style="left:34px;top:25px;width:12px;height:2px;background:#f07050;opacity:.85"></div><div class="a" style="left:11px;top:42px;width:12px;height:2px;background:#8050a0;opacity:.7"></div><div class="t" style="left:50px;top:43px;width:44px;text-align:center;font-size:6px;font-weight:bold;color:#0a3a7e;line-height:1.12;-webkit-text-stroke:0.2px #0a3a7e">UV rays<br>and how they<br>affect skin</div></div></div></div>
<div class="a" style="left:215px;top:218px;width:8px;height:160px;border-radius:4px;background:#dadce0"></div>
<div class="a" style="left:9px;top:813px;width:219px;height:27px;background:#fff;border-top:1px solid #dadce0"></div>
<div class="a" style="left:39px;top:812px;width:48px;height:3px;background:#202124"></div>
<svg width="14" height="12" viewBox="0 0 14 12" style="left:54px;top:827px"><rect x="0" y="0" width="4" height="12" fill="#3c4043"/><rect x="5.5" y="0" width="8.5" height="2.5" fill="#3c4043"/><rect x="5.5" y="4.5" width="8.5" height="3" fill="#3c4043"/><rect x="0" y="9.5" width="14" height="2.5" fill="#3c4043"/></svg>
<svg width="14" height="12" viewBox="0 0 14 12" style="left:163px;top:827px"><g fill="#3c4043"><rect x="0" y="0" width="4" height="3.5"/><rect x="5" y="0" width="4" height="3.5"/><rect x="10" y="0" width="4" height="3.5"/><rect x="0" y="4.5" width="4" height="3.5"/><rect x="5" y="4.5" width="4" height="3.5"/><rect x="10" y="4.5" width="4" height="3.5"/><rect x="0" y="9" width="4" height="3"/><rect x="5" y="9" width="4" height="3"/><rect x="10" y="9" width="4" height="3"/></g></svg>
<div class="a" style="left:227px;top:213px;width:1px;height:627px;background:#dadce0"></div>
<!-- CANVAS -->
<div class="a" style="left:228px;top:213px;width:1116px;height:549px;background:#f8f9fa"></div>
<!-- top ruler -->
<div class="a" style="left:242px;top:212px;width:1102px;height:15px;background:#e8eaed;border-top:1px solid #dadce0;border-bottom:1px solid #dadce0"></div>
<div class="a" style="left:348px;top:213px;width:892px;height:13px;background:#fff"></div>
<svg width="892" height="13" viewBox="0 0 892 13" style="left:348px;top:213px" id="rulerT"><rect x="11.2" y="5" width="1" height="3" fill="#dadce0"/><rect x="22.3" y="5" width="1" height="3" fill="#dadce0"/><rect x="33.5" y="5" width="1" height="3" fill="#dadce0"/><rect x="44.6" y="3" width="1" height="7" fill="#9aa0a6"/><rect x="55.8" y="5" width="1" height="3" fill="#dadce0"/><rect x="66.9" y="5" width="1" height="3" fill="#dadce0"/><rect x="78.0" y="5" width="1" height="3" fill="#dadce0"/><text x="89.2" y="10.5" font-size="11" text-anchor="middle" fill="#3c4043" font-family="Liberation Sans">1</text><rect x="100.4" y="5" width="1" height="3" fill="#dadce0"/><rect x="111.5" y="5" width="1" height="3" fill="#dadce0"/><rect x="122.7" y="5" width="1" height="3" fill="#dadce0"/><rect x="133.8" y="3" width="1" height="7" fill="#9aa0a6"/><rect x="145.0" y="5" width="1" height="3" fill="#dadce0"/><rect x="156.1" y="5" width="1" height="3" fill="#dadce0"/><rect x="167.2" y="5" width="1" height="3" fill="#dadce0"/><text x="178.4" y="10.5" font-size="11" text-anchor="middle" fill="#3c4043" font-family="Liberation Sans">2</text><rect x="189.6" y="5" width="1" height="3" fill="#dadce0"/><rect x="200.7" y="5" width="1" height="3" fill="#dadce0"/><rect x="211.8" y="5" width="1" height="3" fill="#dadce0"/><rect x="223.0" y="3" width="1" height="7" fill="#9aa0a6"/><rect x="234.2" y="5" width="1" height="3" fill="#dadce0"/><rect x="245.3" y="5" width="1" height="3" fill="#dadce0"/><rect x="256.4" y="5" width="1" height="3" fill="#dadce0"/><text x="267.6" y="10.5" font-size="11" text-anchor="middle" fill="#3c4043" font-family="Liberation Sans">3</text><rect x="278.8" y="5" width="1" height="3" fill="#dadce0"/><rect x="289.9" y="5" width="1" height="3" fill="#dadce0"/><rect x="301.1" y="5" width="1" height="3" fill="#dadce0"/><rect x="312.2" y="3" width="1" height="7" fill="#9aa0a6"/><rect x="323.4" y="5" width="1" height="3" fill="#dadce0"/><rect x="334.5" y="5" width="1" height="3" fill="#dadce0"/><rect x="345.7" y="5" width="1" height="3" fill="#dadce0"/><text x="356.8" y="10.5" font-size="11" text-anchor="middle" fill="#3c4043" font-family="Liberation Sans">4</text><rect x="367.9" y="5" width="1" height="3" fill="#dadce0"/><rect x="379.1" y="5" width="1" height="3" fill="#dadce0"/><rect x="390.2" y="5" width="1" height="3" fill="#dadce0"/><rect x="401.4" y="3" width="1" height="7" fill="#9aa0a6"/><rect x="412.6" y="5" width="1" height="3" fill="#dadce0"/><rect x="423.7" y="5" width="1" height="3" fill="#dadce0"/><rect x="434.9" y="5" width="1" height="3" fill="#dadce0"/><text x="446.0" y="10.5" font-size="11" text-anchor="middle" fill="#3c4043" font-family="Liberation Sans">5</text><rect x="457.2" y="5" width="1" height="3" fill="#dadce0"/><rect x="468.3" y="5" width="1" height="3" fill="#dadce0"/><rect x="479.4" y="5" width="1" height="3" fill="#dadce0"/><rect x="490.6" y="3" width="1" height="7" fill="#9aa0a6"/><rect x="501.8" y="5" width="1" height="3" fill="#dadce0"/><rect x="512.9" y="5" width="1" height="3" fill="#dadce0"/><rect x="524.1" y="5" width="1" height="3" fill="#dadce0"/><text x="535.2" y="10.5" font-size="11" text-anchor="middle" fill="#3c4043" font-family="Liberation Sans">6</text><rect x="546.4" y="5" width="1" height="3" fill="#dadce0"/><rect x="557.5" y="5" width="1" height="3" fill="#dadce0"/><rect x="568.6" y="5" width="1" height="3" fill="#dadce0"/><rect x="579.8" y="3" width="1" height="7" fill="#9aa0a6"/><rect x="591.0" y="5" width="1" height="3" fill="#dadce0"/><rect x="602.1" y="5" width="1" height="3" fill="#dadce0"/><rect x="613.2" y="5" width="1" height="3" fill="#dadce0"/><text x="624.4" y="10.5" font-size="11" text-anchor="middle" fill="#3c4043" font-family="Liberation Sans">7</text><rect x="635.6" y="5" width="1" height="3" fill="#dadce0"/><rect x="646.7" y="5" width="1" height="3" fill="#dadce0"/><rect x="657.9" y="5" width="1" height="3" fill="#dadce0"/><rect x="669.0" y="3" width="1" height="7" fill="#9aa0a6"/><rect x="680.1" y="5" width="1" height="3" fill="#dadce0"/><rect x="691.3" y="5" width="1" height="3" fill="#dadce0"/><rect x="702.5" y="5" width="1" height="3" fill="#dadce0"/><text x="713.6" y="10.5" font-size="11" text-anchor="middle" fill="#3c4043" font-family="Liberation Sans">8</text><rect x="724.8" y="5" width="1" height="3" fill="#dadce0"/><rect x="735.9" y="5" width="1" height="3" fill="#dadce0"/><rect x="747.1" y="5" width="1" height="3" fill="#dadce0"/><rect x="758.2" y="3" width="1" height="7" fill="#9aa0a6"/><rect x="769.4" y="5" width="1" height="3" fill="#dadce0"/><rect x="780.5" y="5" width="1" height="3" fill="#dadce0"/><rect x="791.6" y="5" width="1" height="3" fill="#dadce0"/><text x="802.8" y="10.5" font-size="11" text-anchor="middle" fill="#3c4043" font-family="Liberation Sans">9</text><rect x="814.0" y="5" width="1" height="3" fill="#dadce0"/><rect x="825.1" y="5" width="1" height="3" fill="#dadce0"/><rect x="836.2" y="5" width="1" height="3" fill="#dadce0"/><rect x="847.4" y="3" width="1" height="7" fill="#9aa0a6"/><rect x="858.6" y="5" width="1" height="3" fill="#dadce0"/><rect x="869.7" y="5" width="1" height="3" fill="#dadce0"/><rect x="880.9" y="5" width="1" height="3" fill="#dadce0"/></svg>
<!-- left ruler -->
<div class="a" style="left:228px;top:227px;width:14px;height:533px;background:#e8eaed;border-right:1px solid #dadce0"></div>
<div class="a" style="left:228px;top:245px;width:13px;height:502px;background:#fff"></div>
<svg width="13" height="502" viewBox="0 0 13 502" style="left:228px;top:245px" id="rulerL"><rect x="5" y="11.2" width="3" height="1" fill="#dadce0"/><rect x="5" y="22.3" width="3" height="1" fill="#dadce0"/><rect x="5" y="33.5" width="3" height="1" fill="#dadce0"/><rect x="3" y="44.6" width="7" height="1" fill="#9aa0a6"/><rect x="5" y="55.8" width="3" height="1" fill="#dadce0"/><rect x="5" y="66.9" width="3" height="1" fill="#dadce0"/><rect x="5" y="78.0" width="3" height="1" fill="#dadce0"/><text x="0" y="0" transform="translate(10.5 89.2) rotate(-90)" font-size="11" text-anchor="middle" fill="#3c4043" font-family="Liberation Sans">1</text><rect x="5" y="100.4" width="3" height="1" fill="#dadce0"/><rect x="5" y="111.5" width="3" height="1" fill="#dadce0"/><rect x="5" y="122.7" width="3" height="1" fill="#dadce0"/><rect x="3" y="133.8" width="7" height="1" fill="#9aa0a6"/><rect x="5" y="145.0" width="3" height="1" fill="#dadce0"/><rect x="5" y="156.1" width="3" height="1" fill="#dadce0"/><rect x="5" y="167.2" width="3" height="1" fill="#dadce0"/><text x="0" y="0" transform="translate(10.5 178.4) rotate(-90)" font-size="11" text-anchor="middle" fill="#3c4043" font-family="Liberation Sans">2</text><rect x="5" y="189.6" width="3" height="1" fill="#dadce0"/><rect x="5" y="200.7" width="3" height="1" fill="#dadce0"/><rect x="5" y="211.8" width="3" height="1" fill="#dadce0"/><rect x="3" y="223.0" width="7" height="1" fill="#9aa0a6"/><rect x="5" y="234.2" width="3" height="1" fill="#dadce0"/><rect x="5" y="245.3" width="3" height="1" fill="#dadce0"/><rect x="5" y="256.4" width="3" height="1" fill="#dadce0"/><text x="0" y="0" transform="translate(10.5 267.6) rotate(-90)" font-size="11" text-anchor="middle" fill="#3c4043" font-family="Liberation Sans">3</text><rect x="5" y="278.8" width="3" height="1" fill="#dadce0"/><rect x="5" y="289.9" width="3" height="1" fill="#dadce0"/><rect x="5" y="301.1" width="3" height="1" fill="#dadce0"/><rect x="3" y="312.2" width="7" height="1" fill="#9aa0a6"/><rect x="5" y="323.4" width="3" height="1" fill="#dadce0"/><rect x="5" y="334.5" width="3" height="1" fill="#dadce0"/><rect x="5" y="345.7" width="3" height="1" fill="#dadce0"/><text x="0" y="0" transform="translate(10.5 356.8) rotate(-90)" font-size="11" text-anchor="middle" fill="#3c4043" font-family="Liberation Sans">4</text><rect x="5" y="367.9" width="3" height="1" fill="#dadce0"/><rect x="5" y="379.1" width="3" height="1" fill="#dadce0"/><rect x="5" y="390.2" width="3" height="1" fill="#dadce0"/><rect x="3" y="401.4" width="7" height="1" fill="#9aa0a6"/><rect x="5" y="412.6" width="3" height="1" fill="#dadce0"/><rect x="5" y="423.7" width="3" height="1" fill="#dadce0"/><rect x="5" y="434.9" width="3" height="1" fill="#dadce0"/><text x="0" y="0" transform="translate(10.5 446.0) rotate(-90)" font-size="11" text-anchor="middle" fill="#3c4043" font-family="Liberation Sans">5</text><rect x="5" y="457.2" width="3" height="1" fill="#dadce0"/><rect x="5" y="468.3" width="3" height="1" fill="#dadce0"/><rect x="5" y="479.4" width="3" height="1" fill="#dadce0"/><rect x="3" y="490.6" width="7" height="1" fill="#9aa0a6"/><rect x="5" y="501.8" width="3" height="1" fill="#dadce0"/></svg>
<!-- notes -->
<div class="a" style="left:228px;top:772px;width:1116px;height:68px;background:#fff;border-top:1px solid #dadce0"></div>
<div class="a" style="left:775px;top:766px;width:4px;height:4px;border-radius:50%;background:#c4c7cb"></div><div class="a" style="left:783px;top:766px;width:4px;height:4px;border-radius:50%;background:#c4c7cb"></div><div class="a" style="left:791px;top:766px;width:4px;height:4px;border-radius:50%;background:#c4c7cb"></div>
<div class="t" id="notes" style="left:244px;top:785px;font-size:14.6px;color:#202124">Click to add speaker notes</div>
<!-- SLIDE -->
<div class="a" id="slide" style="left:348px;top:245px;width:892px;height:502px;background:#013a55;overflow:hidden">
 <div id="grid"><i style="left:663.9px;top:3.0px;background:#0a6288"></i><i style="left:692.5px;top:3.0px;background:#0a6288"></i><i style="left:706.7px;top:3.0px;background:#074a6c"></i><i style="left:721.0px;top:3.0px;background:#0a6288"></i><i style="left:735.3px;top:3.0px;background:#0a6288"></i><i style="left:749.5px;top:3.0px;background:#0a6288"></i><i style="left:763.8px;top:3.0px;background:#1592ad"></i><i style="left:778.1px;top:3.0px;background:#1592ad"></i><i style="left:792.3px;top:3.0px;background:#88c3bb"></i><i style="left:806.6px;top:3.0px;background:#1592ad"></i><i style="left:820.9px;top:3.0px;background:#88c3bb"></i><i style="left:835.1px;top:3.0px;background:#88c3bb"></i><i style="left:849.4px;top:3.0px;background:#d9ebd5"></i><i style="left:863.7px;top:3.0px;background:#d9ebd5"></i><i style="left:878.0px;top:3.0px;background:#d9ebd5"></i><i style="left:635.4px;top:17.2px;background:#0a6288"></i><i style="left:649.6px;top:17.2px;background:#0a6288"></i><i style="left:678.2px;top:17.2px;background:#0a6288"></i><i style="left:692.5px;top:17.2px;background:#0a6288"></i><i style="left:706.7px;top:17.2px;background:#88c3bb"></i><i style="left:721.0px;top:17.2px;background:#074a6c"></i><i style="left:735.3px;top:17.2px;background:#0a6288"></i><i style="left:749.5px;top:17.2px;background:#0a6288"></i><i style="left:763.8px;top:17.2px;background:#0a6288"></i><i style="left:778.1px;top:17.2px;background:#88c3bb"></i><i style="left:792.3px;top:17.2px;background:#0a6288"></i><i style="left:806.6px;top:17.2px;background:#88c3bb"></i><i style="left:820.9px;top:17.2px;background:#88c3bb"></i><i style="left:835.1px;top:17.2px;background:#1592ad"></i><i style="left:849.4px;top:17.2px;background:#d9ebd5"></i><i style="left:863.7px;top:17.2px;background:#88c3bb"></i><i style="left:878.0px;top:17.2px;background:#d9ebd5"></i><i style="left:663.9px;top:31.5px;background:#1592ad"></i><i style="left:678.2px;top:31.5px;background:#0a6288"></i><i style="left:692.5px;top:31.5px;background:#074a6c"></i><i style="left:706.7px;top:31.5px;background:#0a6288"></i><i style="left:721.0px;top:31.5px;background:#0a6288"></i><i style="left:735.3px;top:31.5px;background:#0a6288"></i><i style="left:749.5px;top:31.5px;background:#88c3bb"></i><i style="left:763.8px;top:31.5px;background:#0a6288"></i><i style="left:778.1px;top:31.5px;background:#1592ad"></i><i style="left:792.3px;top:31.5px;background:#1592ad"></i><i style="left:806.6px;top:31.5px;background:#0a6288"></i><i style="left:820.9px;top:31.5px;background:#88c3bb"></i><i style="left:835.1px;top:31.5px;background:#1592ad"></i><i style="left:849.4px;top:31.5px;background:#d9ebd5"></i><i style="left:863.7px;top:31.5px;background:#d9ebd5"></i><i style="left:878.0px;top:31.5px;background:#d9ebd5"></i><i style="left:621.1px;top:45.8px;background:#1592ad"></i><i style="left:692.5px;top:45.8px;background:#0a6288"></i><i style="left:706.7px;top:45.8px;background:#0a6288"></i><i style="left:721.0px;top:45.8px;background:#1592ad"></i><i style="left:735.3px;top:45.8px;background:#0a6288"></i><i style="left:749.5px;top:45.8px;background:#1592ad"></i><i style="left:763.8px;top:45.8px;background:#0a6288"></i><i style="left:778.1px;top:45.8px;background:#0a6288"></i><i style="left:792.3px;top:45.8px;background:#88c3bb"></i><i style="left:806.6px;top:45.8px;background:#88c3bb"></i><i style="left:820.9px;top:45.8px;background:#88c3bb"></i><i style="left:835.1px;top:45.8px;background:#88c3bb"></i><i style="left:849.4px;top:45.8px;background:#88c3bb"></i><i style="left:863.7px;top:45.8px;background:#d9ebd5"></i><i style="left:878.0px;top:45.8px;background:#d9ebd5"></i><i style="left:678.2px;top:60.0px;background:#0a6288"></i><i style="left:706.7px;top:60.0px;background:#074a6c"></i><i style="left:721.0px;top:60.0px;background:#0a6288"></i><i style="left:735.3px;top:60.0px;background:#88c3bb"></i><i style="left:749.5px;top:60.0px;background:#0a6288"></i><i style="left:763.8px;top:60.0px;background:#1592ad"></i><i style="left:778.1px;top:60.0px;background:#0a6288"></i><i style="left:792.3px;top:60.0px;background:#1592ad"></i><i style="left:806.6px;top:60.0px;background:#0a6288"></i><i style="left:820.9px;top:60.0px;background:#88c3bb"></i><i style="left:835.1px;top:60.0px;background:#1592ad"></i><i style="left:849.4px;top:60.0px;background:#d9ebd5"></i><i style="left:863.7px;top:60.0px;background:#88c3bb"></i><i style="left:878.0px;top:60.0px;background:#d9ebd5"></i><i style="left:649.6px;top:74.2px;background:#0a6288"></i><i style="left:692.5px;top:74.2px;background:#074a6c"></i><i style="left:706.7px;top:74.2px;background:#0a6288"></i><i style="left:721.0px;top:74.2px;background:#0a6288"></i><i style="left:735.3px;top:74.2px;background:#0a6288"></i><i style="left:749.5px;top:74.2px;background:#0a6288"></i><i style="left:763.8px;top:74.2px;background:#1592ad"></i><i style="left:778.1px;top:74.2px;background:#88c3bb"></i><i style="left:792.3px;top:74.2px;background:#1592ad"></i><i style="left:806.6px;top:74.2px;background:#88c3bb"></i><i style="left:820.9px;top:74.2px;background:#88c3bb"></i><i style="left:835.1px;top:74.2px;background:#88c3bb"></i><i style="left:849.4px;top:74.2px;background:#d9ebd5"></i><i style="left:863.7px;top:74.2px;background:#d9ebd5"></i><i style="left:878.0px;top:74.2px;background:#d9ebd5"></i><i style="left:635.4px;top:88.5px;background:#0a6288"></i><i style="left:649.6px;top:88.5px;background:#0a6288"></i><i style="left:663.9px;top:88.5px;background:#0a6288"></i><i style="left:706.7px;top:88.5px;background:#0a6288"></i><i style="left:721.0px;top:88.5px;background:#074a6c"></i><i style="left:735.3px;top:88.5px;background:#0a6288"></i><i style="left:749.5px;top:88.5px;background:#0a6288"></i><i style="left:763.8px;top:88.5px;background:#0a6288"></i><i style="left:778.1px;top:88.5px;background:#0a6288"></i><i style="left:792.3px;top:88.5px;background:#1592ad"></i><i style="left:806.6px;top:88.5px;background:#88c3bb"></i><i style="left:820.9px;top:88.5px;background:#88c3bb"></i><i style="left:835.1px;top:88.5px;background:#1592ad"></i><i style="left:849.4px;top:88.5px;background:#88c3bb"></i><i style="left:863.7px;top:88.5px;background:#d9ebd5"></i><i style="left:878.0px;top:88.5px;background:#d9ebd5"></i><i style="left:663.9px;top:102.8px;background:#0a6288"></i><i style="left:678.2px;top:102.8px;background:#0a6288"></i><i style="left:692.5px;top:102.8px;background:#1592ad"></i><i style="left:706.7px;top:102.8px;background:#0a6288"></i><i style="left:721.0px;top:102.8px;background:#0a6288"></i><i style="left:735.3px;top:102.8px;background:#0a6288"></i><i style="left:749.5px;top:102.8px;background:#1592ad"></i><i style="left:763.8px;top:102.8px;background:#0a6288"></i><i style="left:778.1px;top:102.8px;background:#0a6288"></i><i style="left:792.3px;top:102.8px;background:#0a6288"></i><i style="left:806.6px;top:102.8px;background:#88c3bb"></i><i style="left:820.9px;top:102.8px;background:#88c3bb"></i><i style="left:835.1px;top:102.8px;background:#88c3bb"></i><i style="left:849.4px;top:102.8px;background:#88c3bb"></i><i style="left:863.7px;top:102.8px;background:#d9ebd5"></i><i style="left:878.0px;top:102.8px;background:#d9ebd5"></i><i style="left:678.2px;top:117.0px;background:#0a6288"></i><i style="left:692.5px;top:117.0px;background:#0a6288"></i><i style="left:706.7px;top:117.0px;background:#0a6288"></i><i style="left:721.0px;top:117.0px;background:#0a6288"></i><i style="left:735.3px;top:117.0px;background:#0a6288"></i><i style="left:749.5px;top:117.0px;background:#0a6288"></i><i style="left:763.8px;top:117.0px;background:#1592ad"></i><i style="left:778.1px;top:117.0px;background:#0a6288"></i><i style="left:792.3px;top:117.0px;background:#88c3bb"></i><i style="left:806.6px;top:117.0px;background:#88c3bb"></i><i style="left:820.9px;top:117.0px;background:#1592ad"></i><i style="left:835.1px;top:117.0px;background:#88c3bb"></i><i style="left:849.4px;top:117.0px;background:#d9ebd5"></i><i style="left:863.7px;top:117.0px;background:#d9ebd5"></i><i style="left:878.0px;top:117.0px;background:#d9ebd5"></i><i style="left:678.2px;top:131.2px;background:#074a6c"></i><i style="left:692.5px;top:131.2px;background:#074a6c"></i><i style="left:706.7px;top:131.2px;background:#0a6288"></i><i style="left:721.0px;top:131.2px;background:#0a6288"></i><i style="left:735.3px;top:131.2px;background:#1592ad"></i><i style="left:749.5px;top:131.2px;background:#0a6288"></i><i style="left:763.8px;top:131.2px;background:#0a6288"></i><i style="left:778.1px;top:131.2px;background:#0a6288"></i><i style="left:792.3px;top:131.2px;background:#1592ad"></i><i style="left:806.6px;top:131.2px;background:#0a6288"></i><i style="left:820.9px;top:131.2px;background:#88c3bb"></i><i style="left:835.1px;top:131.2px;background:#88c3bb"></i><i style="left:849.4px;top:131.2px;background:#d9ebd5"></i><i style="left:863.7px;top:131.2px;background:#88c3bb"></i><i style="left:878.0px;top:131.2px;background:#d9ebd5"></i><i style="left:635.4px;top:145.5px;background:#0a6288"></i><i style="left:678.2px;top:145.5px;background:#0a6288"></i><i style="left:692.5px;top:145.5px;background:#0a6288"></i><i style="left:706.7px;top:145.5px;background:#074a6c"></i><i style="left:721.0px;top:145.5px;background:#0a6288"></i><i style="left:735.3px;top:145.5px;background:#0a6288"></i><i style="left:749.5px;top:145.5px;background:#1592ad"></i><i style="left:763.8px;top:145.5px;background:#0a6288"></i><i style="left:778.1px;top:145.5px;background:#0a6288"></i><i style="left:792.3px;top:145.5px;background:#1592ad"></i><i style="left:806.6px;top:145.5px;background:#88c3bb"></i><i style="left:820.9px;top:145.5px;background:#88c3bb"></i><i style="left:835.1px;top:145.5px;background:#1592ad"></i><i style="left:849.4px;top:145.5px;background:#d9ebd5"></i><i style="left:863.7px;top:145.5px;background:#d9ebd5"></i><i style="left:878.0px;top:145.5px;background:#d9ebd5"></i><i style="left:649.6px;top:159.8px;background:#0a6288"></i><i style="left:678.2px;top:159.8px;background:#0a6288"></i><i style="left:692.5px;top:159.8px;background:#0a6288"></i><i style="left:706.7px;top:159.8px;background:#1592ad"></i><i style="left:721.0px;top:159.8px;background:#1592ad"></i><i style="left:735.3px;top:159.8px;background:#1592ad"></i><i style="left:749.5px;top:159.8px;background:#0a6288"></i><i style="left:763.8px;top:159.8px;background:#0a6288"></i><i style="left:778.1px;top:159.8px;background:#1592ad"></i><i style="left:792.3px;top:159.8px;background:#88c3bb"></i><i style="left:806.6px;top:159.8px;background:#88c3bb"></i><i style="left:820.9px;top:159.8px;background:#88c3bb"></i><i style="left:835.1px;top:159.8px;background:#1592ad"></i><i style="left:849.4px;top:159.8px;background:#d9ebd5"></i><i style="left:863.7px;top:159.8px;background:#d9ebd5"></i><i style="left:878.0px;top:159.8px;background:#d9ebd5"></i><i style="left:678.2px;top:174.0px;background:#0a6288"></i><i style="left:692.5px;top:174.0px;background:#0a6288"></i><i style="left:706.7px;top:174.0px;background:#0a6288"></i><i style="left:721.0px;top:174.0px;background:#0a6288"></i><i style="left:735.3px;top:174.0px;background:#0a6288"></i><i style="left:749.5px;top:174.0px;background:#0a6288"></i><i style="left:763.8px;top:174.0px;background:#0a6288"></i><i style="left:778.1px;top:174.0px;background:#1592ad"></i><i style="left:792.3px;top:174.0px;background:#0a6288"></i><i style="left:806.6px;top:174.0px;background:#1592ad"></i><i style="left:820.9px;top:174.0px;background:#88c3bb"></i><i style="left:835.1px;top:174.0px;background:#88c3bb"></i><i style="left:849.4px;top:174.0px;background:#88c3bb"></i><i style="left:863.7px;top:174.0px;background:#d9ebd5"></i><i style="left:878.0px;top:174.0px;background:#d9ebd5"></i><i style="left:706.7px;top:188.2px;background:#0a6288"></i><i style="left:721.0px;top:188.2px;background:#074a6c"></i><i style="left:735.3px;top:188.2px;background:#0a6288"></i><i style="left:749.5px;top:188.2px;background:#0a6288"></i><i style="left:763.8px;top:188.2px;background:#1592ad"></i><i style="left:778.1px;top:188.2px;background:#88c3bb"></i><i style="left:792.3px;top:188.2px;background:#0a6288"></i><i style="left:806.6px;top:188.2px;background:#88c3bb"></i><i style="left:820.9px;top:188.2px;background:#88c3bb"></i><i style="left:835.1px;top:188.2px;background:#88c3bb"></i><i style="left:849.4px;top:188.2px;background:#d9ebd5"></i><i style="left:863.7px;top:188.2px;background:#88c3bb"></i><i style="left:878.0px;top:188.2px;background:#d9ebd5"></i><i style="left:635.4px;top:202.5px;background:#0a6288"></i><i style="left:678.2px;top:202.5px;background:#0a6288"></i><i style="left:706.7px;top:202.5px;background:#1592ad"></i><i style="left:721.0px;top:202.5px;background:#0a6288"></i><i style="left:735.3px;top:202.5px;background:#0a6288"></i><i style="left:749.5px;top:202.5px;background:#0a6288"></i><i style="left:763.8px;top:202.5px;background:#0a6288"></i><i style="left:778.1px;top:202.5px;background:#1592ad"></i><i style="left:792.3px;top:202.5px;background:#1592ad"></i><i style="left:806.6px;top:202.5px;background:#88c3bb"></i><i style="left:820.9px;top:202.5px;background:#88c3bb"></i><i style="left:835.1px;top:202.5px;background:#88c3bb"></i><i style="left:849.4px;top:202.5px;background:#d9ebd5"></i><i style="left:863.7px;top:202.5px;background:#88c3bb"></i><i style="left:878.0px;top:202.5px;background:#d9ebd5"></i><i style="left:663.9px;top:216.8px;background:#0a6288"></i><i style="left:678.2px;top:216.8px;background:#0a6288"></i><i style="left:692.5px;top:216.8px;background:#0a6288"></i><i style="left:706.7px;top:216.8px;background:#0a6288"></i><i style="left:721.0px;top:216.8px;background:#0a6288"></i><i style="left:735.3px;top:216.8px;background:#0a6288"></i><i style="left:749.5px;top:216.8px;background:#0a6288"></i><i style="left:763.8px;top:216.8px;background:#0a6288"></i><i style="left:778.1px;top:216.8px;background:#0a6288"></i><i style="left:792.3px;top:216.8px;background:#1592ad"></i><i style="left:806.6px;top:216.8px;background:#1592ad"></i><i style="left:820.9px;top:216.8px;background:#88c3bb"></i><i style="left:835.1px;top:216.8px;background:#88c3bb"></i><i style="left:849.4px;top:216.8px;background:#88c3bb"></i><i style="left:863.7px;top:216.8px;background:#d9ebd5"></i><i style="left:878.0px;top:216.8px;background:#d9ebd5"></i><i style="left:692.5px;top:231.0px;background:#0a6288"></i><i style="left:706.7px;top:231.0px;background:#074a6c"></i><i style="left:721.0px;top:231.0px;background:#0a6288"></i><i style="left:735.3px;top:231.0px;background:#0a6288"></i><i style="left:749.5px;top:231.0px;background:#1592ad"></i><i style="left:763.8px;top:231.0px;background:#0a6288"></i><i style="left:778.1px;top:231.0px;background:#0a6288"></i><i style="left:792.3px;top:231.0px;background:#1592ad"></i><i style="left:806.6px;top:231.0px;background:#88c3bb"></i><i style="left:820.9px;top:231.0px;background:#88c3bb"></i><i style="left:835.1px;top:231.0px;background:#1592ad"></i><i style="left:849.4px;top:231.0px;background:#d9ebd5"></i><i style="left:863.7px;top:231.0px;background:#d9ebd5"></i><i style="left:878.0px;top:231.0px;background:#d9ebd5"></i><i style="left:649.6px;top:245.2px;background:#0a6288"></i><i style="left:678.2px;top:245.2px;background:#0a6288"></i><i style="left:692.5px;top:245.2px;background:#0a6288"></i><i style="left:706.7px;top:245.2px;background:#0a6288"></i><i style="left:721.0px;top:245.2px;background:#0a6288"></i><i style="left:735.3px;top:245.2px;background:#0a6288"></i><i style="left:749.5px;top:245.2px;background:#0a6288"></i><i style="left:763.8px;top:245.2px;background:#88c3bb"></i><i style="left:778.1px;top:245.2px;background:#0a6288"></i><i style="left:792.3px;top:245.2px;background:#0a6288"></i><i style="left:806.6px;top:245.2px;background:#88c3bb"></i><i style="left:820.9px;top:245.2px;background:#1592ad"></i><i style="left:835.1px;top:245.2px;background:#88c3bb"></i><i style="left:849.4px;top:245.2px;background:#88c3bb"></i><i style="left:863.7px;top:245.2px;background:#d9ebd5"></i><i style="left:878.0px;top:245.2px;background:#d9ebd5"></i><i style="left:621.1px;top:259.5px;background:#0a6288"></i><i style="left:678.2px;top:259.5px;background:#1592ad"></i><i style="left:692.5px;top:259.5px;background:#0a6288"></i><i style="left:706.7px;top:259.5px;background:#88c3bb"></i><i style="left:721.0px;top:259.5px;background:#0a6288"></i><i style="left:735.3px;top:259.5px;background:#0a6288"></i><i style="left:749.5px;top:259.5px;background:#1592ad"></i><i style="left:763.8px;top:259.5px;background:#0a6288"></i><i style="left:778.1px;top:259.5px;background:#0a6288"></i><i style="left:792.3px;top:259.5px;background:#88c3bb"></i><i style="left:806.6px;top:259.5px;background:#0a6288"></i><i style="left:820.9px;top:259.5px;background:#88c3bb"></i><i style="left:835.1px;top:259.5px;background:#88c3bb"></i><i style="left:849.4px;top:259.5px;background:#d9ebd5"></i><i style="left:863.7px;top:259.5px;background:#88c3bb"></i><i style="left:878.0px;top:259.5px;background:#d9ebd5"></i><i style="left:635.4px;top:273.8px;background:#1592ad"></i><i style="left:692.5px;top:273.8px;background:#074a6c"></i><i style="left:706.7px;top:273.8px;background:#0a6288"></i><i style="left:721.0px;top:273.8px;background:#0a6288"></i><i style="left:735.3px;top:273.8px;background:#0a6288"></i><i style="left:749.5px;top:273.8px;background:#0a6288"></i><i style="left:763.8px;top:273.8px;background:#1592ad"></i><i style="left:778.1px;top:273.8px;background:#0a6288"></i><i style="left:792.3px;top:273.8px;background:#88c3bb"></i><i style="left:806.6px;top:273.8px;background:#88c3bb"></i><i style="left:820.9px;top:273.8px;background:#88c3bb"></i><i style="left:835.1px;top:273.8px;background:#1592ad"></i><i style="left:849.4px;top:273.8px;background:#d9ebd5"></i><i style="left:863.7px;top:273.8px;background:#d9ebd5"></i><i style="left:878.0px;top:273.8px;background:#d9ebd5"></i><i style="left:663.9px;top:288.0px;background:#0a6288"></i><i style="left:678.2px;top:288.0px;background:#0a6288"></i><i style="left:692.5px;top:288.0px;background:#0a6288"></i><i style="left:706.7px;top:288.0px;background:#1592ad"></i><i style="left:721.0px;top:288.0px;background:#0a6288"></i><i style="left:735.3px;top:288.0px;background:#0a6288"></i><i style="left:749.5px;top:288.0px;background:#0a6288"></i><i style="left:763.8px;top:288.0px;background:#1592ad"></i><i style="left:778.1px;top:288.0px;background:#0a6288"></i><i style="left:792.3px;top:288.0px;background:#1592ad"></i><i style="left:806.6px;top:288.0px;background:#1592ad"></i><i style="left:820.9px;top:288.0px;background:#1592ad"></i><i style="left:835.1px;top:288.0px;background:#88c3bb"></i><i style="left:849.4px;top:288.0px;background:#d9ebd5"></i><i style="left:863.7px;top:288.0px;background:#d9ebd5"></i><i style="left:878.0px;top:288.0px;background:#d9ebd5"></i><i style="left:692.5px;top:302.2px;background:#0a6288"></i><i style="left:706.7px;top:302.2px;background:#0a6288"></i><i style="left:721.0px;top:302.2px;background:#1592ad"></i><i style="left:735.3px;top:302.2px;background:#0a6288"></i><i style="left:749.5px;top:302.2px;background:#0a6288"></i><i style="left:763.8px;top:302.2px;background:#1592ad"></i><i style="left:778.1px;top:302.2px;background:#0a6288"></i><i style="left:792.3px;top:302.2px;background:#1592ad"></i><i style="left:806.6px;top:302.2px;background:#88c3bb"></i><i style="left:820.9px;top:302.2px;background:#88c3bb"></i><i style="left:835.1px;top:302.2px;background:#88c3bb"></i><i style="left:849.4px;top:302.2px;background:#d9ebd5"></i><i style="left:863.7px;top:302.2px;background:#d9ebd5"></i><i style="left:878.0px;top:302.2px;background:#d9ebd5"></i><i style="left:649.6px;top:316.5px;background:#0a6288"></i><i style="left:678.2px;top:316.5px;background:#0a6288"></i><i style="left:706.7px;top:316.5px;background:#0a6288"></i><i style="left:721.0px;top:316.5px;background:#0a6288"></i><i style="left:735.3px;top:316.5px;background:#1592ad"></i><i style="left:749.5px;top:316.5px;background:#0a6288"></i><i style="left:763.8px;top:316.5px;background:#0a6288"></i><i style="left:778.1px;top:316.5px;background:#0a6288"></i><i style="left:792.3px;top:316.5px;background:#1592ad"></i><i style="left:806.6px;top:316.5px;background:#1592ad"></i><i style="left:820.9px;top:316.5px;background:#88c3bb"></i><i style="left:835.1px;top:316.5px;background:#1592ad"></i><i style="left:849.4px;top:316.5px;background:#88c3bb"></i><i style="left:863.7px;top:316.5px;background:#88c3bb"></i><i style="left:878.0px;top:316.5px;background:#d9ebd5"></i><i style="left:706.7px;top:330.8px;background:#0a6288"></i><i style="left:721.0px;top:330.8px;background:#0a6288"></i><i style="left:735.3px;top:330.8px;background:#1592ad"></i><i style="left:749.5px;top:330.8px;background:#0a6288"></i><i style="left:763.8px;top:330.8px;background:#88c3bb"></i><i style="left:778.1px;top:330.8px;background:#0a6288"></i><i style="left:792.3px;top:330.8px;background:#88c3bb"></i><i style="left:806.6px;top:330.8px;background:#1592ad"></i><i style="left:820.9px;top:330.8px;background:#88c3bb"></i><i style="left:835.1px;top:330.8px;background:#1592ad"></i><i style="left:849.4px;top:330.8px;background:#88c3bb"></i><i style="left:863.7px;top:330.8px;background:#d9ebd5"></i><i style="left:878.0px;top:330.8px;background:#d9ebd5"></i><i style="left:663.9px;top:345.0px;background:#0a6288"></i><i style="left:706.7px;top:345.0px;background:#074a6c"></i><i style="left:721.0px;top:345.0px;background:#0a6288"></i><i style="left:735.3px;top:345.0px;background:#0a6288"></i><i style="left:749.5px;top:345.0px;background:#0a6288"></i><i style="left:763.8px;top:345.0px;background:#0a6288"></i><i style="left:778.1px;top:345.0px;background:#0a6288"></i><i style="left:792.3px;top:345.0px;background:#1592ad"></i><i style="left:806.6px;top:345.0px;background:#88c3bb"></i><i style="left:820.9px;top:345.0px;background:#88c3bb"></i><i style="left:835.1px;top:345.0px;background:#1592ad"></i><i style="left:849.4px;top:345.0px;background:#88c3bb"></i><i style="left:863.7px;top:345.0px;background:#d9ebd5"></i><i style="left:878.0px;top:345.0px;background:#d9ebd5"></i><i style="left:621.1px;top:359.2px;background:#0a6288"></i><i style="left:678.2px;top:359.2px;background:#0a6288"></i><i style="left:692.5px;top:359.2px;background:#0a6288"></i><i style="left:706.7px;top:359.2px;background:#0a6288"></i><i style="left:721.0px;top:359.2px;background:#074a6c"></i><i style="left:735.3px;top:359.2px;background:#0a6288"></i><i style="left:749.5px;top:359.2px;background:#0a6288"></i><i style="left:763.8px;top:359.2px;background:#1592ad"></i><i style="left:778.1px;top:359.2px;background:#1592ad"></i><i style="left:792.3px;top:359.2px;background:#1592ad"></i><i style="left:806.6px;top:359.2px;background:#0a6288"></i><i style="left:820.9px;top:359.2px;background:#88c3bb"></i><i style="left:835.1px;top:359.2px;background:#88c3bb"></i><i style="left:849.4px;top:359.2px;background:#d9ebd5"></i><i style="left:863.7px;top:359.2px;background:#88c3bb"></i><i style="left:878.0px;top:359.2px;background:#d9ebd5"></i><i style="left:678.2px;top:373.5px;background:#1592ad"></i><i style="left:692.5px;top:373.5px;background:#0a6288"></i><i style="left:706.7px;top:373.5px;background:#074a6c"></i><i style="left:721.0px;top:373.5px;background:#0a6288"></i><i style="left:735.3px;top:373.5px;background:#0a6288"></i><i style="left:749.5px;top:373.5px;background:#1592ad"></i><i style="left:763.8px;top:373.5px;background:#0a6288"></i><i style="left:778.1px;top:373.5px;background:#0a6288"></i><i style="left:792.3px;top:373.5px;background:#88c3bb"></i><i style="left:806.6px;top:373.5px;background:#88c3bb"></i><i style="left:820.9px;top:373.5px;background:#88c3bb"></i><i style="left:835.1px;top:373.5px;background:#88c3bb"></i><i style="left:849.4px;top:373.5px;background:#d9ebd5"></i><i style="left:863.7px;top:373.5px;background:#88c3bb"></i><i style="left:878.0px;top:373.5px;background:#d9ebd5"></i><i style="left:635.4px;top:387.8px;background:#0a6288"></i><i style="left:649.6px;top:387.8px;background:#0a6288"></i><i style="left:678.2px;top:387.8px;background:#0a6288"></i><i style="left:706.7px;top:387.8px;background:#0a6288"></i><i style="left:721.0px;top:387.8px;background:#1592ad"></i><i style="left:735.3px;top:387.8px;background:#0a6288"></i><i style="left:749.5px;top:387.8px;background:#0a6288"></i><i style="left:763.8px;top:387.8px;background:#0a6288"></i><i style="left:778.1px;top:387.8px;background:#1592ad"></i><i style="left:792.3px;top:387.8px;background:#0a6288"></i><i style="left:806.6px;top:387.8px;background:#0a6288"></i><i style="left:820.9px;top:387.8px;background:#88c3bb"></i><i style="left:835.1px;top:387.8px;background:#1592ad"></i><i style="left:849.4px;top:387.8px;background:#88c3bb"></i><i style="left:863.7px;top:387.8px;background:#d9ebd5"></i><i style="left:878.0px;top:387.8px;background:#d9ebd5"></i><i style="left:663.9px;top:402.0px;background:#0a6288"></i><i style="left:706.7px;top:402.0px;background:#0a6288"></i><i style="left:721.0px;top:402.0px;background:#0a6288"></i><i style="left:735.3px;top:402.0px;background:#1592ad"></i><i style="left:749.5px;top:402.0px;background:#0a6288"></i><i style="left:763.8px;top:402.0px;background:#0a6288"></i><i style="left:778.1px;top:402.0px;background:#1592ad"></i><i style="left:792.3px;top:402.0px;background:#88c3bb"></i><i style="left:806.6px;top:402.0px;background:#1592ad"></i><i style="left:820.9px;top:402.0px;background:#88c3bb"></i><i style="left:835.1px;top:402.0px;background:#88c3bb"></i><i style="left:849.4px;top:402.0px;background:#d9ebd5"></i><i style="left:863.7px;top:402.0px;background:#d9ebd5"></i><i style="left:878.0px;top:402.0px;background:#d9ebd5"></i><i style="left:649.6px;top:416.2px;background:#d9ebd5"></i><i style="left:692.5px;top:416.2px;background:#0a6288"></i><i style="left:706.7px;top:416.2px;background:#0a6288"></i><i style="left:721.0px;top:416.2px;background:#0a6288"></i><i style="left:735.3px;top:416.2px;background:#1592ad"></i><i style="left:749.5px;top:416.2px;background:#0a6288"></i><i style="left:763.8px;top:416.2px;background:#1592ad"></i><i style="left:778.1px;top:416.2px;background:#0a6288"></i><i style="left:792.3px;top:416.2px;background:#88c3bb"></i><i style="left:806.6px;top:416.2px;background:#1592ad"></i><i style="left:820.9px;top:416.2px;background:#88c3bb"></i><i style="left:835.1px;top:416.2px;background:#88c3bb"></i><i style="left:849.4px;top:416.2px;background:#d9ebd5"></i><i style="left:863.7px;top:416.2px;background:#d9ebd5"></i><i style="left:878.0px;top:416.2px;background:#d9ebd5"></i><i style="left:678.2px;top:430.5px;background:#0a6288"></i><i style="left:706.7px;top:430.5px;background:#0a6288"></i><i style="left:721.0px;top:430.5px;background:#0a6288"></i><i style="left:735.3px;top:430.5px;background:#0a6288"></i><i style="left:749.5px;top:430.5px;background:#1592ad"></i><i style="left:763.8px;top:430.5px;background:#0a6288"></i><i style="left:778.1px;top:430.5px;background:#0a6288"></i><i style="left:792.3px;top:430.5px;background:#1592ad"></i><i style="left:806.6px;top:430.5px;background:#88c3bb"></i><i style="left:820.9px;top:430.5px;background:#88c3bb"></i><i style="left:835.1px;top:430.5px;background:#88c3bb"></i><i style="left:849.4px;top:430.5px;background:#d9ebd5"></i><i style="left:863.7px;top:430.5px;background:#88c3bb"></i><i style="left:878.0px;top:430.5px;background:#d9ebd5"></i><i style="left:621.1px;top:444.8px;background:#0a6288"></i><i style="left:692.5px;top:444.8px;background:#0a6288"></i><i style="left:706.7px;top:444.8px;background:#074a6c"></i><i style="left:721.0px;top:444.8px;background:#0a6288"></i><i style="left:735.3px;top:444.8px;background:#0a6288"></i><i style="left:749.5px;top:444.8px;background:#0a6288"></i><i style="left:763.8px;top:444.8px;background:#1592ad"></i><i style="left:778.1px;top:444.8px;background:#0a6288"></i><i style="left:792.3px;top:444.8px;background:#1592ad"></i><i style="left:806.6px;top:444.8px;background:#88c3bb"></i><i style="left:820.9px;top:444.8px;background:#88c3bb"></i><i style="left:835.1px;top:444.8px;background:#1592ad"></i><i style="left:849.4px;top:444.8px;background:#d9ebd5"></i><i style="left:863.7px;top:444.8px;background:#d9ebd5"></i><i style="left:878.0px;top:444.8px;background:#d9ebd5"></i><i style="left:663.9px;top:459.0px;background:#0a6288"></i><i style="left:706.7px;top:459.0px;background:#0a6288"></i><i style="left:721.0px;top:459.0px;background:#0a6288"></i><i style="left:735.3px;top:459.0px;background:#1592ad"></i><i style="left:749.5px;top:459.0px;background:#0a6288"></i><i style="left:763.8px;top:459.0px;background:#0a6288"></i><i style="left:778.1px;top:459.0px;background:#1592ad"></i><i style="left:792.3px;top:459.0px;background:#0a6288"></i><i style="left:806.6px;top:459.0px;background:#1592ad"></i><i style="left:820.9px;top:459.0px;background:#88c3bb"></i><i style="left:835.1px;top:459.0px;background:#88c3bb"></i><i style="left:849.4px;top:459.0px;background:#88c3bb"></i><i style="left:863.7px;top:459.0px;background:#d9ebd5"></i><i style="left:878.0px;top:459.0px;background:#d9ebd5"></i><i style="left:649.6px;top:473.2px;background:#074a6c"></i><i style="left:678.2px;top:473.2px;background:#0a6288"></i><i style="left:706.7px;top:473.2px;background:#0a6288"></i><i style="left:721.0px;top:473.2px;background:#0a6288"></i><i style="left:735.3px;top:473.2px;background:#0a6288"></i><i style="left:749.5px;top:473.2px;background:#0a6288"></i><i style="left:763.8px;top:473.2px;background:#1592ad"></i><i style="left:778.1px;top:473.2px;background:#0a6288"></i><i style="left:792.3px;top:473.2px;background:#88c3bb"></i><i style="left:806.6px;top:473.2px;background:#88c3bb"></i><i style="left:820.9px;top:473.2px;background:#88c3bb"></i><i style="left:835.1px;top:473.2px;background:#1592ad"></i><i style="left:849.4px;top:473.2px;background:#d9ebd5"></i><i style="left:863.7px;top:473.2px;background:#d9ebd5"></i><i style="left:878.0px;top:473.2px;background:#d9ebd5"></i><i style="left:635.4px;top:487.5px;background:#0a6288"></i><i style="left:692.5px;top:487.5px;background:#0a6288"></i><i style="left:706.7px;top:487.5px;background:#0a6288"></i><i style="left:721.0px;top:487.5px;background:#1592ad"></i><i style="left:735.3px;top:487.5px;background:#0a6288"></i><i style="left:749.5px;top:487.5px;background:#0a6288"></i><i style="left:763.8px;top:487.5px;background:#0a6288"></i><i style="left:778.1px;top:487.5px;background:#1592ad"></i><i style="left:792.3px;top:487.5px;background:#1592ad"></i><i style="left:806.6px;top:487.5px;background:#88c3bb"></i><i style="left:820.9px;top:487.5px;background:#88c3bb"></i><i style="left:835.1px;top:487.5px;background:#88c3bb"></i><i style="left:849.4px;top:487.5px;background:#d9ebd5"></i><i style="left:863.7px;top:487.5px;background:#88c3bb"></i><i style="left:878.0px;top:487.5px;background:#d9ebd5"></i></div>
</div>
<div class="t" id="s1" style="left:432px;top:326.5px;font-size:42px;font-weight:bold;color:#fbefd0;transform:scaleX(0.838);transform-origin:0 0">Analyzing Melanin Data Sets</div>
<div class="t" id="s2" style="left:432px;top:376.5px;font-size:42px;font-style:italic;color:#fdf6e3;-webkit-text-stroke:1.3px #013a55;paint-order:normal;transform:scaleX(0.826);transform-origin:0 0">Melanin Storyline 4</div>
<div class="t" id="s3" style="left:432px;top:426.5px;font-size:42px;font-style:italic;color:#fdf6e3;-webkit-text-stroke:1.3px #013a55;paint-order:normal;transform:scaleX(0.82);transform-origin:0 0">Section 5.2 – Choice#2</div>
<div class="t" id="s4" style="left:432px;top:501.7px;font-size:20px;color:#82b3bf;transform:scaleX(1.035);transform-origin:0 0">Question:&nbsp; Why is human skin color different throughout</div>
<div class="t" id="s5" style="left:432px;top:530px;font-size:20px;color:#82b3bf;transform:scaleX(1.035);transform-origin:0 0">the world?</div>
<div class="t" id="s6" style="left:436px;top:671.7px;font-size:17px;color:#aecfdb;-webkit-text-stroke:0.3px #013a55;transform:scaleX(0.943);transform-origin:0 0">This set has charts with embedded CER responses tables on slides</div>
<!-- RIGHT -->
<div class="a" style="left:1343px;top:173px;width:1px;height:667px;background:#dadce0"></div>
<div class="a" style="left:1364px;top:192px;width:18px;height:19px;border-radius:2px;background:#fff;border:2px solid #4285f4;border-right-color:#fbbc04;border-bottom-color:#34a853"></div>
<div class="a" style="left:1364px;top:192px;width:18px;height:4px;background:#4285f4;border-radius:2px 2px 0 0"></div>
<div class="t" style="left:1367px;top:198px;font-size:9px;color:#4285f4;font-weight:bold">31</div>
<div class="a" style="left:1364px;top:248px;width:18px;height:20px;border-radius:2px;background:#fbbc04"></div>
<div class="a" style="left:1369px;top:252px;width:8px;height:8px;border-radius:50%;background:#fff"></div>
<div class="a" style="left:1370.5px;top:260px;width:5px;height:3px;background:#fff"></div>
<div class="a" style="left:1363px;top:304px;width:20px;height:20px;border-radius:50%;background:#4285f4"></div>
<svg width="12" height="10" viewBox="0 0 12 10" style="left:1367px;top:309px"><path d="M1 5.5L4.2 8.5L11 1.5" stroke="#fff" stroke-width="2.2" fill="none"/></svg>
<div class="a" style="left:1363px;top:357px;width:20px;height:1px;background:#dadce0"></div>
<svg width="12" height="12" viewBox="0 0 12 12" style="left:1367px;top:397px"><path d="M6 0V12M0 6H12" stroke="#5f6368" stroke-width="1.6"/></svg>
<svg width="7" height="11" viewBox="0 0 7 11" style="left:1370px;top:820px"><path d="M1 1L5.5 5.5L1 10" stroke="#5f6368" stroke-width="1.8" fill="none"/></svg>
<!-- VIDEO -->
<div class="a" style="left:1004px;top:663px;width:320px;height:177px;overflow:hidden;background:#1e1d1a">
<svg width="320" height="177" viewBox="0 0 320 177" style="left:0;top:0">
<defs><filter id="bl" x="-10%" y="-10%" width="120%" height="120%"><feGaussianBlur stdDeviation="1.6"/></filter><filter id="bl2"><feGaussianBlur stdDeviation="0.8"/></filter></defs>
<g filter="url(#bl)">
<rect x="0" y="0" width="320" height="177" fill="#1c1b18"/>
<rect x="0" y="0" width="320" height="40" fill="#100f0d"/>
<path d="M0 20 L125 48 L125 96 L0 96Z" fill="#3d3e39"/>
<path d="M0 60 L50 85 L50 96 L0 96Z" fill="#2e2f2b"/>
<path d="M80 48 L205 52 L205 96 L80 96Z" fill="#45463f"/>
<path d="M222 34 L320 12 L320 92 L222 92Z" fill="#262822"/><path d="M222 60 L320 40 L320 92 L222 92Z" fill="#2a2d27"/>
<rect x="0" y="95" width="125" height="8" fill="#604527"/>
<rect x="228" y="91" width="92" height="8" fill="#5c4326"/>
<rect x="0" y="103" width="45" height="74" fill="#2b2c28"/><rect x="2" y="70" width="18" height="28" fill="#55564f"/><rect x="5" y="105" width="22" height="40" fill="#4a4b45"/>
<rect x="70" y="103" width="50" height="74" fill="#1b1a17"/>
<rect x="232" y="99" width="88" height="78" fill="#161513"/>
<path d="M54 13 L84 11 L66 177 L32 177Z" fill="#8a693d"/><path d="M74 12 L84 11 L72 100 L66 100Z" fill="#75572f"/>
<path d="M69 14 L74 14 L64 98 L60 98Z" fill="#cdb994"/>
<path d="M198 4 L222 6 L230 120 L206 120Z" fill="#82633a"/>
<path d="M202 8 L206 8 L207 50 L203 50Z" fill="#c0ab88"/>
<path d="M136 90 L208 80 L212 165 L134 165Z" fill="#a08660"/><path d="M142 100 L196 100 L204 165 L134 165Z" fill="#c8927a"/>
<path d="M134 120 L166 172 L204 120Z" fill="#d09a80"/>
<path d="M52 177 C56 148 88 128 126 122 L133 124 L166 171 L196 152 L214 122 C246 126 262 150 268 177Z" fill="#d32b27"/>
<path d="M132 123 L166 171 L197 151" fill="none" stroke="#f1eeeb" stroke-width="6"/>
<path d="M165 1 C140 2 124 25 121 60 C118 95 116 130 112 177 L136 177 C134 130 134 95 136 60 C140 35 150 22 167 22 C186 22 197 38 199 60 C202 100 206 140 214 177 L244 177 C234 140 222 105 214 65 C210 30 194 1 165 1Z" fill="#cdb88d"/>
<path d="M136 62 C136 38 148 20 167 20 C188 20 199 38 199 62 C199 98 188 113 167 113 C146 113 136 98 136 62Z" fill="#d8a48b"/>

<ellipse cx="154" cy="54" rx="7" ry="3" fill="#6d6c86"/>
<ellipse cx="181" cy="54" rx="7" ry="3" fill="#6d6c86"/>
<path d="M167 60 L163 76 L171 76Z" fill="#c8907a"/>
<path d="M157 85 Q167 83 177 85" stroke="#a2695a" stroke-width="1.8" fill="none"/>
<path d="M118 80 C118 120 114 150 113 177 L124 177 C124 150 126 120 126 80Z" fill="#bfa77b"/>
<path d="M206 90 C212 130 222 160 230 177 L240 177 C232 150 222 120 214 90Z" fill="#b9a176"/>
</g>
</svg>
</div>
</body></html>
